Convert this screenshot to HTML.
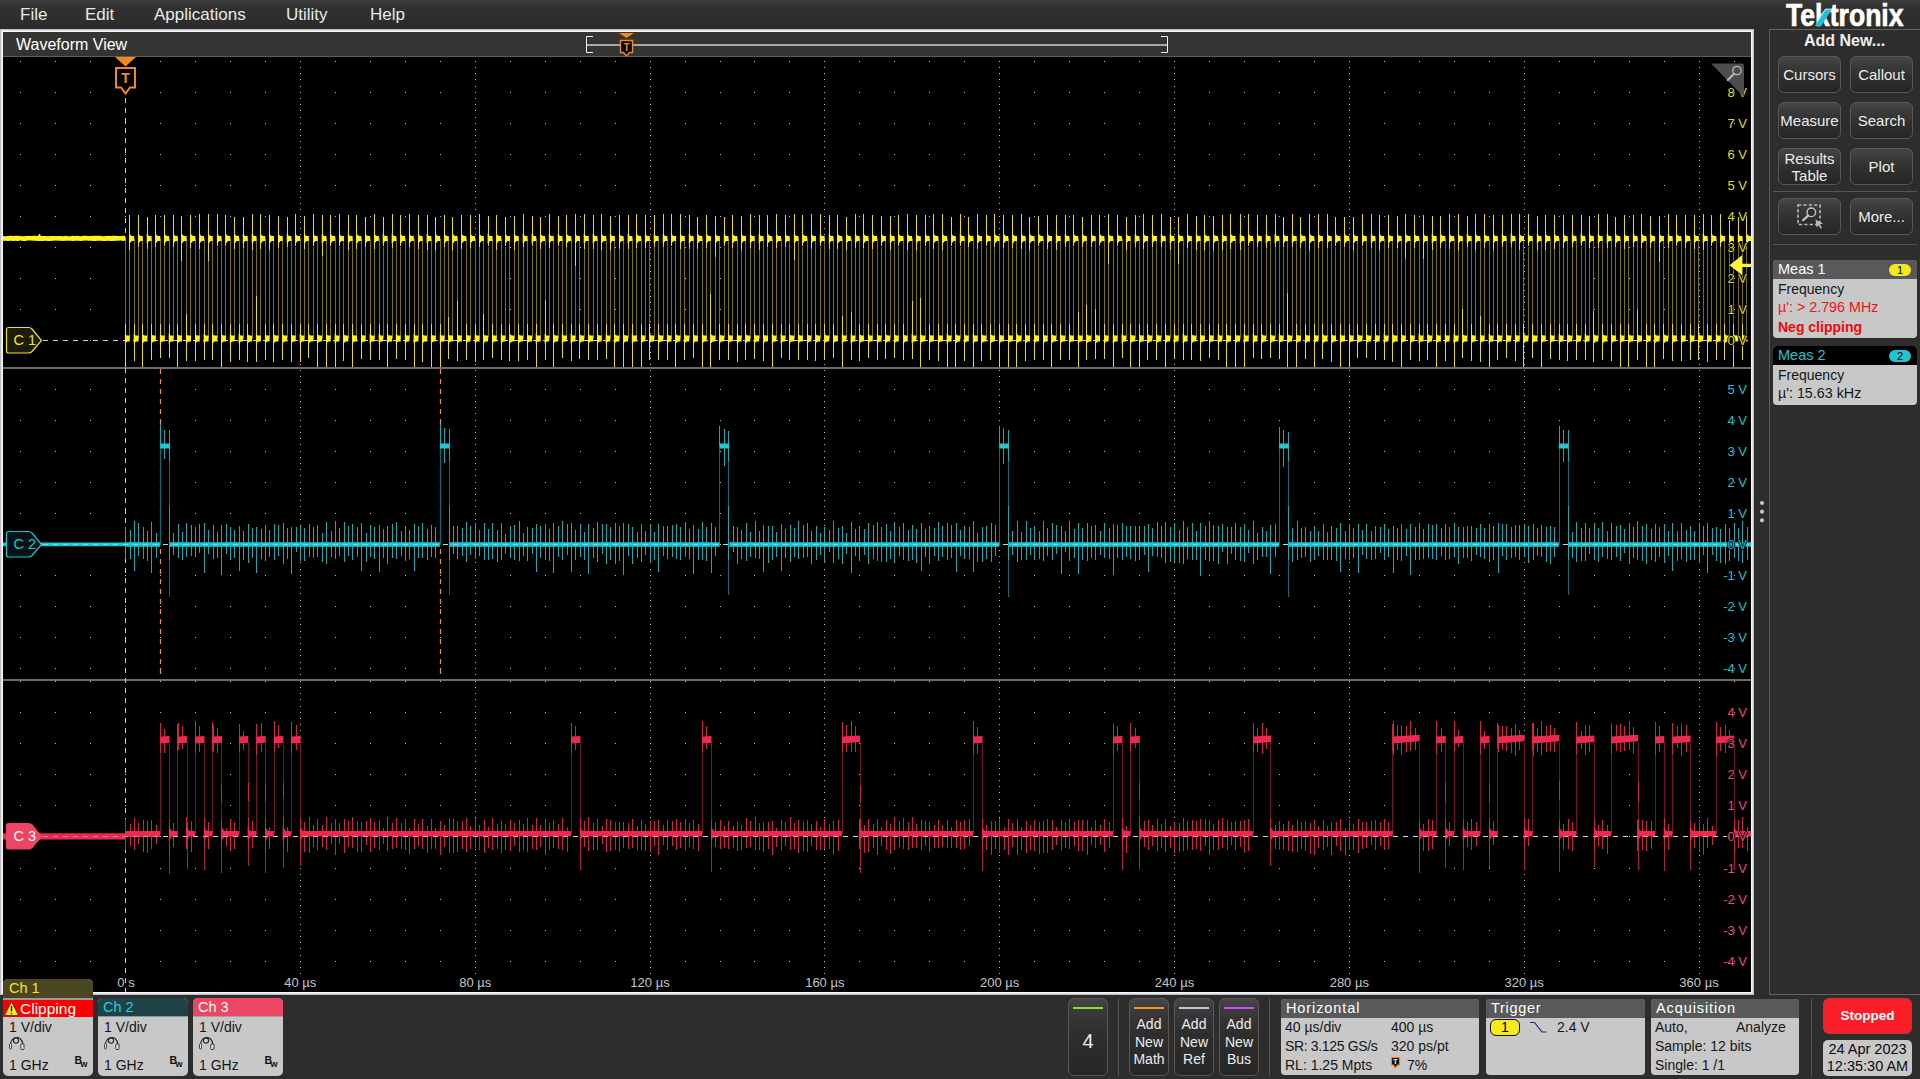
<!DOCTYPE html>
<html lang="en">
<head>
<meta charset="utf-8">
<title>Tektronix Waveform View</title>
<style>
*{box-sizing:border-box;margin:0;padding:0}
html,body{width:1920px;height:1079px;overflow:hidden;background:#2d2d2d}
body{position:relative;font-family:"Liberation Sans","DejaVu Sans",sans-serif;color:#e8e8e8;font-size:15px;line-height:1}
.abs{position:absolute}
.t{position:absolute;white-space:nowrap;line-height:1}
#menubar{position:absolute;left:0;top:0;width:1920px;height:29px;background:linear-gradient(#3b3b3b 0,#303030 8px,#2c2c2c 100%)}
#menubar .t{top:6px;font-size:17px;color:#e9e9e9}
#frame{position:absolute;left:0;top:29px;width:1754px;height:966px;background:#f7f7f9;box-shadow:inset 0 0 0 1px #bebec4,inset 0 0 0 2px #e4e4e9}
#titlebar{position:absolute;left:3px;top:32px;width:1748px;height:24px;background:#343433}
#titleline{position:absolute;left:3px;top:56px;width:1748px;height:1px;background:#5e5e5e}
#plot{position:absolute;left:3px;top:57px;width:1748px;height:935px;background:#000}
#wave{position:absolute;left:0;top:0;width:1920px;height:1079px}
.vl{position:absolute;z-index:2;text-shadow:-1px 0 #000,1px 0 #000,0 -1px #000,0 1px #000;font-size:13px;line-height:13px;width:40px;text-align:right;left:1707px;white-space:nowrap}
.y{color:#e2dc1c}.c{color:#1ec0ca}.r{color:#ee4a68}
.tl{position:absolute;top:976px;font-size:13px;line-height:13px;color:#c6c6c6;white-space:nowrap;transform:translateX(-50%)}
/* side panel */
#side{position:absolute;left:1769px;top:29px;width:151px;height:966px;border:1px solid #675f59;border-left-color:#585a5c;border-right:none}
.btn{position:absolute;width:63px;height:37px;border:1px solid #5e5550;border-radius:6px;background:linear-gradient(#464646 0,#3a3a3a 25%,#2e2e2e 60%,#272727 100%);color:#ececec;font-size:15px;text-align:center;line-height:35px;white-space:nowrap}
.btn.two{line-height:17px;padding-top:1px}
.sep{position:absolute;height:1px;background:#5b5451;left:1773px;width:144px}
.badge{position:absolute;border-radius:4px;background:#c8c8c8;color:#000;overflow:hidden}
.badge .hd{position:absolute;left:0;top:0;right:0;background:#58595b;color:#fff;font-size:15px}
.badge .t{font-size:15px;color:#161616}
.pill{position:absolute;border-radius:6px;font-size:11px;color:#000;text-align:center}
/* bottom */
.bbtn{position:absolute;top:998px;height:78px;border:1px solid #5e5550;border-radius:6px;background:linear-gradient(#464646 0,#3a3a3a 14%,#2e2e2e 45%,#272727 100%);color:#ececec;text-align:center}
.bbtn i{position:absolute;left:4px;right:4px;top:8px;height:2px;display:block}
.vsep{position:absolute;top:998px;width:1px;height:78px;background:#5b5451}
</style>
</head>
<body>
<div id="menubar">
<span class="t" style="left:20px">File</span>
<span class="t" style="left:85px">Edit</span>
<span class="t" style="left:154px">Applications</span>
<span class="t" style="left:286px">Utility</span>
<span class="t" style="left:370px">Help</span>
</div>
<div id="frame"></div>
<div id="titlebar"><span class="t" style="left:13px;top:5px;font-size:16px;color:#fff">Waveform View</span></div>
<div id="titleline"></div>
<div id="plot"></div>
<span class="vl y" style="top:86px">8 V</span>
<span class="vl y" style="top:117px">7 V</span>
<span class="vl y" style="top:148px">6 V</span>
<span class="vl y" style="top:179px">5 V</span>
<span class="vl y" style="top:210px">4 V</span>
<span class="vl y" style="top:241px">3 V</span>
<span class="vl y" style="top:272px">2 V</span>
<span class="vl y" style="top:303px">1 V</span>
<span class="vl y" style="top:334px">0 V</span>
<span class="vl c" style="top:383px">5 V</span>
<span class="vl c" style="top:414px">4 V</span>
<span class="vl c" style="top:445px">3 V</span>
<span class="vl c" style="top:476px">2 V</span>
<span class="vl c" style="top:507px">1 V</span>
<span class="vl c" style="top:538px">0 V</span>
<span class="vl c" style="top:569px">-1 V</span>
<span class="vl c" style="top:600px">-2 V</span>
<span class="vl c" style="top:631px">-3 V</span>
<span class="vl c" style="top:662px">-4 V</span>
<span class="vl r" style="top:706px">4 V</span>
<span class="vl r" style="top:737px">3 V</span>
<span class="vl r" style="top:768px">2 V</span>
<span class="vl r" style="top:799px">1 V</span>
<span class="vl r" style="top:830px">0 V</span>
<span class="vl r" style="top:862px">-1 V</span>
<span class="vl r" style="top:893px">-2 V</span>
<span class="vl r" style="top:924px">-3 V</span>
<span class="vl r" style="top:955px">-4 V</span>
<span class="tl" style="left:126.0px">0 s</span>
<span class="tl" style="left:300.3px">40 µs</span>
<span class="tl" style="left:475.2px">80 µs</span>
<span class="tl" style="left:650.0px">120 µs</span>
<span class="tl" style="left:824.8px">160 µs</span>
<span class="tl" style="left:999.7px">200 µs</span>
<span class="tl" style="left:1174.5px">240 µs</span>
<span class="tl" style="left:1349.3px">280 µs</span>
<span class="tl" style="left:1524.1px">320 µs</span>
<span class="tl" style="left:1699.0px">360 µs</span>
<svg id="wave" viewBox="0 0 1920 1079" width="1920" height="1079">
<defs>
<clipPath id="c1"><rect x="3" y="57" width="1748" height="310"/></clipPath>
<clipPath id="c2"><rect x="3" y="369" width="1748" height="310"/></clipPath>
<clipPath id="c3"><rect x="3" y="681" width="1748" height="311"/></clipPath>
</defs>
<path d="M20 61h1v1h-1zM55 61h1v1h-1zM90 61h1v1h-1zM125 61h1v1h-1zM160 61h1v1h-1zM195 61h1v1h-1zM230 61h1v1h-1zM265 61h1v1h-1zM300 61h1v1h-1zM335 61h1v1h-1zM370 61h1v1h-1zM405 61h1v1h-1zM440 61h1v1h-1zM475 61h1v1h-1zM510 61h1v1h-1zM545 61h1v1h-1zM580 61h1v1h-1zM615 61h1v1h-1zM650 61h1v1h-1zM685 61h1v1h-1zM720 61h1v1h-1zM754 61h1v1h-1zM789 61h1v1h-1zM824 61h1v1h-1zM859 61h1v1h-1zM894 61h1v1h-1zM929 61h1v1h-1zM964 61h1v1h-1zM999 61h1v1h-1zM1034 61h1v1h-1zM1069 61h1v1h-1zM1104 61h1v1h-1zM1139 61h1v1h-1zM1174 61h1v1h-1zM1209 61h1v1h-1zM1244 61h1v1h-1zM1279 61h1v1h-1zM1314 61h1v1h-1zM1349 61h1v1h-1zM1384 61h1v1h-1zM1419 61h1v1h-1zM1454 61h1v1h-1zM1489 61h1v1h-1zM1524 61h1v1h-1zM1559 61h1v1h-1zM1594 61h1v1h-1zM1629 61h1v1h-1zM1664 61h1v1h-1zM1699 61h1v1h-1zM1734 61h1v1h-1zM20 92h1v1h-1zM55 92h1v1h-1zM90 92h1v1h-1zM125 92h1v1h-1zM160 92h1v1h-1zM195 92h1v1h-1zM230 92h1v1h-1zM265 92h1v1h-1zM300 92h1v1h-1zM335 92h1v1h-1zM370 92h1v1h-1zM405 92h1v1h-1zM440 92h1v1h-1zM475 92h1v1h-1zM510 92h1v1h-1zM545 92h1v1h-1zM580 92h1v1h-1zM615 92h1v1h-1zM650 92h1v1h-1zM685 92h1v1h-1zM720 92h1v1h-1zM754 92h1v1h-1zM789 92h1v1h-1zM824 92h1v1h-1zM859 92h1v1h-1zM894 92h1v1h-1zM929 92h1v1h-1zM964 92h1v1h-1zM999 92h1v1h-1zM1034 92h1v1h-1zM1069 92h1v1h-1zM1104 92h1v1h-1zM1139 92h1v1h-1zM1174 92h1v1h-1zM1209 92h1v1h-1zM1244 92h1v1h-1zM1279 92h1v1h-1zM1314 92h1v1h-1zM1349 92h1v1h-1zM1384 92h1v1h-1zM1419 92h1v1h-1zM1454 92h1v1h-1zM1489 92h1v1h-1zM1524 92h1v1h-1zM1559 92h1v1h-1zM1594 92h1v1h-1zM1629 92h1v1h-1zM1664 92h1v1h-1zM1699 92h1v1h-1zM1734 92h1v1h-1zM20 123h1v1h-1zM55 123h1v1h-1zM90 123h1v1h-1zM125 123h1v1h-1zM160 123h1v1h-1zM195 123h1v1h-1zM230 123h1v1h-1zM265 123h1v1h-1zM300 123h1v1h-1zM335 123h1v1h-1zM370 123h1v1h-1zM405 123h1v1h-1zM440 123h1v1h-1zM475 123h1v1h-1zM510 123h1v1h-1zM545 123h1v1h-1zM580 123h1v1h-1zM615 123h1v1h-1zM650 123h1v1h-1zM685 123h1v1h-1zM720 123h1v1h-1zM754 123h1v1h-1zM789 123h1v1h-1zM824 123h1v1h-1zM859 123h1v1h-1zM894 123h1v1h-1zM929 123h1v1h-1zM964 123h1v1h-1zM999 123h1v1h-1zM1034 123h1v1h-1zM1069 123h1v1h-1zM1104 123h1v1h-1zM1139 123h1v1h-1zM1174 123h1v1h-1zM1209 123h1v1h-1zM1244 123h1v1h-1zM1279 123h1v1h-1zM1314 123h1v1h-1zM1349 123h1v1h-1zM1384 123h1v1h-1zM1419 123h1v1h-1zM1454 123h1v1h-1zM1489 123h1v1h-1zM1524 123h1v1h-1zM1559 123h1v1h-1zM1594 123h1v1h-1zM1629 123h1v1h-1zM1664 123h1v1h-1zM1699 123h1v1h-1zM1734 123h1v1h-1zM20 154h1v1h-1zM55 154h1v1h-1zM90 154h1v1h-1zM125 154h1v1h-1zM160 154h1v1h-1zM195 154h1v1h-1zM230 154h1v1h-1zM265 154h1v1h-1zM300 154h1v1h-1zM335 154h1v1h-1zM370 154h1v1h-1zM405 154h1v1h-1zM440 154h1v1h-1zM475 154h1v1h-1zM510 154h1v1h-1zM545 154h1v1h-1zM580 154h1v1h-1zM615 154h1v1h-1zM650 154h1v1h-1zM685 154h1v1h-1zM720 154h1v1h-1zM754 154h1v1h-1zM789 154h1v1h-1zM824 154h1v1h-1zM859 154h1v1h-1zM894 154h1v1h-1zM929 154h1v1h-1zM964 154h1v1h-1zM999 154h1v1h-1zM1034 154h1v1h-1zM1069 154h1v1h-1zM1104 154h1v1h-1zM1139 154h1v1h-1zM1174 154h1v1h-1zM1209 154h1v1h-1zM1244 154h1v1h-1zM1279 154h1v1h-1zM1314 154h1v1h-1zM1349 154h1v1h-1zM1384 154h1v1h-1zM1419 154h1v1h-1zM1454 154h1v1h-1zM1489 154h1v1h-1zM1524 154h1v1h-1zM1559 154h1v1h-1zM1594 154h1v1h-1zM1629 154h1v1h-1zM1664 154h1v1h-1zM1699 154h1v1h-1zM1734 154h1v1h-1zM20 185h1v1h-1zM55 185h1v1h-1zM90 185h1v1h-1zM125 185h1v1h-1zM160 185h1v1h-1zM195 185h1v1h-1zM230 185h1v1h-1zM265 185h1v1h-1zM300 185h1v1h-1zM335 185h1v1h-1zM370 185h1v1h-1zM405 185h1v1h-1zM440 185h1v1h-1zM475 185h1v1h-1zM510 185h1v1h-1zM545 185h1v1h-1zM580 185h1v1h-1zM615 185h1v1h-1zM650 185h1v1h-1zM685 185h1v1h-1zM720 185h1v1h-1zM754 185h1v1h-1zM789 185h1v1h-1zM824 185h1v1h-1zM859 185h1v1h-1zM894 185h1v1h-1zM929 185h1v1h-1zM964 185h1v1h-1zM999 185h1v1h-1zM1034 185h1v1h-1zM1069 185h1v1h-1zM1104 185h1v1h-1zM1139 185h1v1h-1zM1174 185h1v1h-1zM1209 185h1v1h-1zM1244 185h1v1h-1zM1279 185h1v1h-1zM1314 185h1v1h-1zM1349 185h1v1h-1zM1384 185h1v1h-1zM1419 185h1v1h-1zM1454 185h1v1h-1zM1489 185h1v1h-1zM1524 185h1v1h-1zM1559 185h1v1h-1zM1594 185h1v1h-1zM1629 185h1v1h-1zM1664 185h1v1h-1zM1699 185h1v1h-1zM1734 185h1v1h-1zM20 216h1v1h-1zM55 216h1v1h-1zM90 216h1v1h-1zM125 216h1v1h-1zM160 216h1v1h-1zM195 216h1v1h-1zM230 216h1v1h-1zM265 216h1v1h-1zM300 216h1v1h-1zM335 216h1v1h-1zM370 216h1v1h-1zM405 216h1v1h-1zM440 216h1v1h-1zM475 216h1v1h-1zM510 216h1v1h-1zM545 216h1v1h-1zM580 216h1v1h-1zM615 216h1v1h-1zM650 216h1v1h-1zM685 216h1v1h-1zM720 216h1v1h-1zM754 216h1v1h-1zM789 216h1v1h-1zM824 216h1v1h-1zM859 216h1v1h-1zM894 216h1v1h-1zM929 216h1v1h-1zM964 216h1v1h-1zM999 216h1v1h-1zM1034 216h1v1h-1zM1069 216h1v1h-1zM1104 216h1v1h-1zM1139 216h1v1h-1zM1174 216h1v1h-1zM1209 216h1v1h-1zM1244 216h1v1h-1zM1279 216h1v1h-1zM1314 216h1v1h-1zM1349 216h1v1h-1zM1384 216h1v1h-1zM1419 216h1v1h-1zM1454 216h1v1h-1zM1489 216h1v1h-1zM1524 216h1v1h-1zM1559 216h1v1h-1zM1594 216h1v1h-1zM1629 216h1v1h-1zM1664 216h1v1h-1zM1699 216h1v1h-1zM1734 216h1v1h-1zM20 247h1v1h-1zM55 247h1v1h-1zM90 247h1v1h-1zM125 247h1v1h-1zM160 247h1v1h-1zM195 247h1v1h-1zM230 247h1v1h-1zM265 247h1v1h-1zM300 247h1v1h-1zM335 247h1v1h-1zM370 247h1v1h-1zM405 247h1v1h-1zM440 247h1v1h-1zM475 247h1v1h-1zM510 247h1v1h-1zM545 247h1v1h-1zM580 247h1v1h-1zM615 247h1v1h-1zM650 247h1v1h-1zM685 247h1v1h-1zM720 247h1v1h-1zM754 247h1v1h-1zM789 247h1v1h-1zM824 247h1v1h-1zM859 247h1v1h-1zM894 247h1v1h-1zM929 247h1v1h-1zM964 247h1v1h-1zM999 247h1v1h-1zM1034 247h1v1h-1zM1069 247h1v1h-1zM1104 247h1v1h-1zM1139 247h1v1h-1zM1174 247h1v1h-1zM1209 247h1v1h-1zM1244 247h1v1h-1zM1279 247h1v1h-1zM1314 247h1v1h-1zM1349 247h1v1h-1zM1384 247h1v1h-1zM1419 247h1v1h-1zM1454 247h1v1h-1zM1489 247h1v1h-1zM1524 247h1v1h-1zM1559 247h1v1h-1zM1594 247h1v1h-1zM1629 247h1v1h-1zM1664 247h1v1h-1zM1699 247h1v1h-1zM1734 247h1v1h-1zM20 278h1v1h-1zM55 278h1v1h-1zM90 278h1v1h-1zM125 278h1v1h-1zM160 278h1v1h-1zM195 278h1v1h-1zM230 278h1v1h-1zM265 278h1v1h-1zM300 278h1v1h-1zM335 278h1v1h-1zM370 278h1v1h-1zM405 278h1v1h-1zM440 278h1v1h-1zM475 278h1v1h-1zM510 278h1v1h-1zM545 278h1v1h-1zM580 278h1v1h-1zM615 278h1v1h-1zM650 278h1v1h-1zM685 278h1v1h-1zM720 278h1v1h-1zM754 278h1v1h-1zM789 278h1v1h-1zM824 278h1v1h-1zM859 278h1v1h-1zM894 278h1v1h-1zM929 278h1v1h-1zM964 278h1v1h-1zM999 278h1v1h-1zM1034 278h1v1h-1zM1069 278h1v1h-1zM1104 278h1v1h-1zM1139 278h1v1h-1zM1174 278h1v1h-1zM1209 278h1v1h-1zM1244 278h1v1h-1zM1279 278h1v1h-1zM1314 278h1v1h-1zM1349 278h1v1h-1zM1384 278h1v1h-1zM1419 278h1v1h-1zM1454 278h1v1h-1zM1489 278h1v1h-1zM1524 278h1v1h-1zM1559 278h1v1h-1zM1594 278h1v1h-1zM1629 278h1v1h-1zM1664 278h1v1h-1zM1699 278h1v1h-1zM1734 278h1v1h-1zM20 309h1v1h-1zM55 309h1v1h-1zM90 309h1v1h-1zM125 309h1v1h-1zM160 309h1v1h-1zM195 309h1v1h-1zM230 309h1v1h-1zM265 309h1v1h-1zM300 309h1v1h-1zM335 309h1v1h-1zM370 309h1v1h-1zM405 309h1v1h-1zM440 309h1v1h-1zM475 309h1v1h-1zM510 309h1v1h-1zM545 309h1v1h-1zM580 309h1v1h-1zM615 309h1v1h-1zM650 309h1v1h-1zM685 309h1v1h-1zM720 309h1v1h-1zM754 309h1v1h-1zM789 309h1v1h-1zM824 309h1v1h-1zM859 309h1v1h-1zM894 309h1v1h-1zM929 309h1v1h-1zM964 309h1v1h-1zM999 309h1v1h-1zM1034 309h1v1h-1zM1069 309h1v1h-1zM1104 309h1v1h-1zM1139 309h1v1h-1zM1174 309h1v1h-1zM1209 309h1v1h-1zM1244 309h1v1h-1zM1279 309h1v1h-1zM1314 309h1v1h-1zM1349 309h1v1h-1zM1384 309h1v1h-1zM1419 309h1v1h-1zM1454 309h1v1h-1zM1489 309h1v1h-1zM1524 309h1v1h-1zM1559 309h1v1h-1zM1594 309h1v1h-1zM1629 309h1v1h-1zM1664 309h1v1h-1zM1699 309h1v1h-1zM1734 309h1v1h-1zM20 340h1v1h-1zM55 340h1v1h-1zM90 340h1v1h-1zM125 340h1v1h-1zM160 340h1v1h-1zM195 340h1v1h-1zM230 340h1v1h-1zM265 340h1v1h-1zM300 340h1v1h-1zM335 340h1v1h-1zM370 340h1v1h-1zM405 340h1v1h-1zM440 340h1v1h-1zM475 340h1v1h-1zM510 340h1v1h-1zM545 340h1v1h-1zM580 340h1v1h-1zM615 340h1v1h-1zM650 340h1v1h-1zM685 340h1v1h-1zM720 340h1v1h-1zM754 340h1v1h-1zM789 340h1v1h-1zM824 340h1v1h-1zM859 340h1v1h-1zM894 340h1v1h-1zM929 340h1v1h-1zM964 340h1v1h-1zM999 340h1v1h-1zM1034 340h1v1h-1zM1069 340h1v1h-1zM1104 340h1v1h-1zM1139 340h1v1h-1zM1174 340h1v1h-1zM1209 340h1v1h-1zM1244 340h1v1h-1zM1279 340h1v1h-1zM1314 340h1v1h-1zM1349 340h1v1h-1zM1384 340h1v1h-1zM1419 340h1v1h-1zM1454 340h1v1h-1zM1489 340h1v1h-1zM1524 340h1v1h-1zM1559 340h1v1h-1zM1594 340h1v1h-1zM1629 340h1v1h-1zM1664 340h1v1h-1zM1699 340h1v1h-1zM1734 340h1v1h-1zM300 61h1v1h-1zM300 67h1v1h-1zM300 73h1v1h-1zM300 79h1v1h-1zM300 86h1v1h-1zM300 92h1v1h-1zM300 98h1v1h-1zM300 104h1v1h-1zM300 110h1v1h-1zM300 117h1v1h-1zM300 123h1v1h-1zM300 129h1v1h-1zM300 135h1v1h-1zM300 141h1v1h-1zM300 147h1v1h-1zM300 154h1v1h-1zM300 160h1v1h-1zM300 166h1v1h-1zM300 172h1v1h-1zM300 178h1v1h-1zM300 185h1v1h-1zM300 191h1v1h-1zM300 197h1v1h-1zM300 203h1v1h-1zM300 209h1v1h-1zM300 216h1v1h-1zM300 222h1v1h-1zM300 228h1v1h-1zM300 234h1v1h-1zM300 240h1v1h-1zM300 247h1v1h-1zM300 253h1v1h-1zM300 259h1v1h-1zM300 265h1v1h-1zM300 271h1v1h-1zM300 278h1v1h-1zM300 284h1v1h-1zM300 290h1v1h-1zM300 296h1v1h-1zM300 302h1v1h-1zM300 309h1v1h-1zM300 315h1v1h-1zM300 321h1v1h-1zM300 327h1v1h-1zM300 333h1v1h-1zM300 340h1v1h-1zM300 346h1v1h-1zM300 352h1v1h-1zM300 358h1v1h-1zM300 364h1v1h-1zM475 61h1v1h-1zM475 67h1v1h-1zM475 73h1v1h-1zM475 79h1v1h-1zM475 86h1v1h-1zM475 92h1v1h-1zM475 98h1v1h-1zM475 104h1v1h-1zM475 110h1v1h-1zM475 117h1v1h-1zM475 123h1v1h-1zM475 129h1v1h-1zM475 135h1v1h-1zM475 141h1v1h-1zM475 147h1v1h-1zM475 154h1v1h-1zM475 160h1v1h-1zM475 166h1v1h-1zM475 172h1v1h-1zM475 178h1v1h-1zM475 185h1v1h-1zM475 191h1v1h-1zM475 197h1v1h-1zM475 203h1v1h-1zM475 209h1v1h-1zM475 216h1v1h-1zM475 222h1v1h-1zM475 228h1v1h-1zM475 234h1v1h-1zM475 240h1v1h-1zM475 247h1v1h-1zM475 253h1v1h-1zM475 259h1v1h-1zM475 265h1v1h-1zM475 271h1v1h-1zM475 278h1v1h-1zM475 284h1v1h-1zM475 290h1v1h-1zM475 296h1v1h-1zM475 302h1v1h-1zM475 309h1v1h-1zM475 315h1v1h-1zM475 321h1v1h-1zM475 327h1v1h-1zM475 333h1v1h-1zM475 340h1v1h-1zM475 346h1v1h-1zM475 352h1v1h-1zM475 358h1v1h-1zM475 364h1v1h-1zM650 61h1v1h-1zM650 67h1v1h-1zM650 73h1v1h-1zM650 79h1v1h-1zM650 86h1v1h-1zM650 92h1v1h-1zM650 98h1v1h-1zM650 104h1v1h-1zM650 110h1v1h-1zM650 117h1v1h-1zM650 123h1v1h-1zM650 129h1v1h-1zM650 135h1v1h-1zM650 141h1v1h-1zM650 147h1v1h-1zM650 154h1v1h-1zM650 160h1v1h-1zM650 166h1v1h-1zM650 172h1v1h-1zM650 178h1v1h-1zM650 185h1v1h-1zM650 191h1v1h-1zM650 197h1v1h-1zM650 203h1v1h-1zM650 209h1v1h-1zM650 216h1v1h-1zM650 222h1v1h-1zM650 228h1v1h-1zM650 234h1v1h-1zM650 240h1v1h-1zM650 247h1v1h-1zM650 253h1v1h-1zM650 259h1v1h-1zM650 265h1v1h-1zM650 271h1v1h-1zM650 278h1v1h-1zM650 284h1v1h-1zM650 290h1v1h-1zM650 296h1v1h-1zM650 302h1v1h-1zM650 309h1v1h-1zM650 315h1v1h-1zM650 321h1v1h-1zM650 327h1v1h-1zM650 333h1v1h-1zM650 340h1v1h-1zM650 346h1v1h-1zM650 352h1v1h-1zM650 358h1v1h-1zM650 364h1v1h-1zM824 61h1v1h-1zM824 67h1v1h-1zM824 73h1v1h-1zM824 79h1v1h-1zM824 86h1v1h-1zM824 92h1v1h-1zM824 98h1v1h-1zM824 104h1v1h-1zM824 110h1v1h-1zM824 117h1v1h-1zM824 123h1v1h-1zM824 129h1v1h-1zM824 135h1v1h-1zM824 141h1v1h-1zM824 147h1v1h-1zM824 154h1v1h-1zM824 160h1v1h-1zM824 166h1v1h-1zM824 172h1v1h-1zM824 178h1v1h-1zM824 185h1v1h-1zM824 191h1v1h-1zM824 197h1v1h-1zM824 203h1v1h-1zM824 209h1v1h-1zM824 216h1v1h-1zM824 222h1v1h-1zM824 228h1v1h-1zM824 234h1v1h-1zM824 240h1v1h-1zM824 247h1v1h-1zM824 253h1v1h-1zM824 259h1v1h-1zM824 265h1v1h-1zM824 271h1v1h-1zM824 278h1v1h-1zM824 284h1v1h-1zM824 290h1v1h-1zM824 296h1v1h-1zM824 302h1v1h-1zM824 309h1v1h-1zM824 315h1v1h-1zM824 321h1v1h-1zM824 327h1v1h-1zM824 333h1v1h-1zM824 340h1v1h-1zM824 346h1v1h-1zM824 352h1v1h-1zM824 358h1v1h-1zM824 364h1v1h-1zM999 61h1v1h-1zM999 67h1v1h-1zM999 73h1v1h-1zM999 79h1v1h-1zM999 86h1v1h-1zM999 92h1v1h-1zM999 98h1v1h-1zM999 104h1v1h-1zM999 110h1v1h-1zM999 117h1v1h-1zM999 123h1v1h-1zM999 129h1v1h-1zM999 135h1v1h-1zM999 141h1v1h-1zM999 147h1v1h-1zM999 154h1v1h-1zM999 160h1v1h-1zM999 166h1v1h-1zM999 172h1v1h-1zM999 178h1v1h-1zM999 185h1v1h-1zM999 191h1v1h-1zM999 197h1v1h-1zM999 203h1v1h-1zM999 209h1v1h-1zM999 216h1v1h-1zM999 222h1v1h-1zM999 228h1v1h-1zM999 234h1v1h-1zM999 240h1v1h-1zM999 247h1v1h-1zM999 253h1v1h-1zM999 259h1v1h-1zM999 265h1v1h-1zM999 271h1v1h-1zM999 278h1v1h-1zM999 284h1v1h-1zM999 290h1v1h-1zM999 296h1v1h-1zM999 302h1v1h-1zM999 309h1v1h-1zM999 315h1v1h-1zM999 321h1v1h-1zM999 327h1v1h-1zM999 333h1v1h-1zM999 340h1v1h-1zM999 346h1v1h-1zM999 352h1v1h-1zM999 358h1v1h-1zM999 364h1v1h-1zM1174 61h1v1h-1zM1174 67h1v1h-1zM1174 73h1v1h-1zM1174 79h1v1h-1zM1174 86h1v1h-1zM1174 92h1v1h-1zM1174 98h1v1h-1zM1174 104h1v1h-1zM1174 110h1v1h-1zM1174 117h1v1h-1zM1174 123h1v1h-1zM1174 129h1v1h-1zM1174 135h1v1h-1zM1174 141h1v1h-1zM1174 147h1v1h-1zM1174 154h1v1h-1zM1174 160h1v1h-1zM1174 166h1v1h-1zM1174 172h1v1h-1zM1174 178h1v1h-1zM1174 185h1v1h-1zM1174 191h1v1h-1zM1174 197h1v1h-1zM1174 203h1v1h-1zM1174 209h1v1h-1zM1174 216h1v1h-1zM1174 222h1v1h-1zM1174 228h1v1h-1zM1174 234h1v1h-1zM1174 240h1v1h-1zM1174 247h1v1h-1zM1174 253h1v1h-1zM1174 259h1v1h-1zM1174 265h1v1h-1zM1174 271h1v1h-1zM1174 278h1v1h-1zM1174 284h1v1h-1zM1174 290h1v1h-1zM1174 296h1v1h-1zM1174 302h1v1h-1zM1174 309h1v1h-1zM1174 315h1v1h-1zM1174 321h1v1h-1zM1174 327h1v1h-1zM1174 333h1v1h-1zM1174 340h1v1h-1zM1174 346h1v1h-1zM1174 352h1v1h-1zM1174 358h1v1h-1zM1174 364h1v1h-1zM1349 61h1v1h-1zM1349 67h1v1h-1zM1349 73h1v1h-1zM1349 79h1v1h-1zM1349 86h1v1h-1zM1349 92h1v1h-1zM1349 98h1v1h-1zM1349 104h1v1h-1zM1349 110h1v1h-1zM1349 117h1v1h-1zM1349 123h1v1h-1zM1349 129h1v1h-1zM1349 135h1v1h-1zM1349 141h1v1h-1zM1349 147h1v1h-1zM1349 154h1v1h-1zM1349 160h1v1h-1zM1349 166h1v1h-1zM1349 172h1v1h-1zM1349 178h1v1h-1zM1349 185h1v1h-1zM1349 191h1v1h-1zM1349 197h1v1h-1zM1349 203h1v1h-1zM1349 209h1v1h-1zM1349 216h1v1h-1zM1349 222h1v1h-1zM1349 228h1v1h-1zM1349 234h1v1h-1zM1349 240h1v1h-1zM1349 247h1v1h-1zM1349 253h1v1h-1zM1349 259h1v1h-1zM1349 265h1v1h-1zM1349 271h1v1h-1zM1349 278h1v1h-1zM1349 284h1v1h-1zM1349 290h1v1h-1zM1349 296h1v1h-1zM1349 302h1v1h-1zM1349 309h1v1h-1zM1349 315h1v1h-1zM1349 321h1v1h-1zM1349 327h1v1h-1zM1349 333h1v1h-1zM1349 340h1v1h-1zM1349 346h1v1h-1zM1349 352h1v1h-1zM1349 358h1v1h-1zM1349 364h1v1h-1zM1524 61h1v1h-1zM1524 67h1v1h-1zM1524 73h1v1h-1zM1524 79h1v1h-1zM1524 86h1v1h-1zM1524 92h1v1h-1zM1524 98h1v1h-1zM1524 104h1v1h-1zM1524 110h1v1h-1zM1524 117h1v1h-1zM1524 123h1v1h-1zM1524 129h1v1h-1zM1524 135h1v1h-1zM1524 141h1v1h-1zM1524 147h1v1h-1zM1524 154h1v1h-1zM1524 160h1v1h-1zM1524 166h1v1h-1zM1524 172h1v1h-1zM1524 178h1v1h-1zM1524 185h1v1h-1zM1524 191h1v1h-1zM1524 197h1v1h-1zM1524 203h1v1h-1zM1524 209h1v1h-1zM1524 216h1v1h-1zM1524 222h1v1h-1zM1524 228h1v1h-1zM1524 234h1v1h-1zM1524 240h1v1h-1zM1524 247h1v1h-1zM1524 253h1v1h-1zM1524 259h1v1h-1zM1524 265h1v1h-1zM1524 271h1v1h-1zM1524 278h1v1h-1zM1524 284h1v1h-1zM1524 290h1v1h-1zM1524 296h1v1h-1zM1524 302h1v1h-1zM1524 309h1v1h-1zM1524 315h1v1h-1zM1524 321h1v1h-1zM1524 327h1v1h-1zM1524 333h1v1h-1zM1524 340h1v1h-1zM1524 346h1v1h-1zM1524 352h1v1h-1zM1524 358h1v1h-1zM1524 364h1v1h-1zM1699 61h1v1h-1zM1699 67h1v1h-1zM1699 73h1v1h-1zM1699 79h1v1h-1zM1699 86h1v1h-1zM1699 92h1v1h-1zM1699 98h1v1h-1zM1699 104h1v1h-1zM1699 110h1v1h-1zM1699 117h1v1h-1zM1699 123h1v1h-1zM1699 129h1v1h-1zM1699 135h1v1h-1zM1699 141h1v1h-1zM1699 147h1v1h-1zM1699 154h1v1h-1zM1699 160h1v1h-1zM1699 166h1v1h-1zM1699 172h1v1h-1zM1699 178h1v1h-1zM1699 185h1v1h-1zM1699 191h1v1h-1zM1699 197h1v1h-1zM1699 203h1v1h-1zM1699 209h1v1h-1zM1699 216h1v1h-1zM1699 222h1v1h-1zM1699 228h1v1h-1zM1699 234h1v1h-1zM1699 240h1v1h-1zM1699 247h1v1h-1zM1699 253h1v1h-1zM1699 259h1v1h-1zM1699 265h1v1h-1zM1699 271h1v1h-1zM1699 278h1v1h-1zM1699 284h1v1h-1zM1699 290h1v1h-1zM1699 296h1v1h-1zM1699 302h1v1h-1zM1699 309h1v1h-1zM1699 315h1v1h-1zM1699 321h1v1h-1zM1699 327h1v1h-1zM1699 333h1v1h-1zM1699 340h1v1h-1zM1699 346h1v1h-1zM1699 352h1v1h-1zM1699 358h1v1h-1zM1699 364h1v1h-1zM20 389h1v1h-1zM55 389h1v1h-1zM90 389h1v1h-1zM125 389h1v1h-1zM160 389h1v1h-1zM195 389h1v1h-1zM230 389h1v1h-1zM265 389h1v1h-1zM300 389h1v1h-1zM335 389h1v1h-1zM370 389h1v1h-1zM405 389h1v1h-1zM440 389h1v1h-1zM475 389h1v1h-1zM510 389h1v1h-1zM545 389h1v1h-1zM580 389h1v1h-1zM615 389h1v1h-1zM650 389h1v1h-1zM685 389h1v1h-1zM720 389h1v1h-1zM754 389h1v1h-1zM789 389h1v1h-1zM824 389h1v1h-1zM859 389h1v1h-1zM894 389h1v1h-1zM929 389h1v1h-1zM964 389h1v1h-1zM999 389h1v1h-1zM1034 389h1v1h-1zM1069 389h1v1h-1zM1104 389h1v1h-1zM1139 389h1v1h-1zM1174 389h1v1h-1zM1209 389h1v1h-1zM1244 389h1v1h-1zM1279 389h1v1h-1zM1314 389h1v1h-1zM1349 389h1v1h-1zM1384 389h1v1h-1zM1419 389h1v1h-1zM1454 389h1v1h-1zM1489 389h1v1h-1zM1524 389h1v1h-1zM1559 389h1v1h-1zM1594 389h1v1h-1zM1629 389h1v1h-1zM1664 389h1v1h-1zM1699 389h1v1h-1zM1734 389h1v1h-1zM20 420h1v1h-1zM55 420h1v1h-1zM90 420h1v1h-1zM125 420h1v1h-1zM160 420h1v1h-1zM195 420h1v1h-1zM230 420h1v1h-1zM265 420h1v1h-1zM300 420h1v1h-1zM335 420h1v1h-1zM370 420h1v1h-1zM405 420h1v1h-1zM440 420h1v1h-1zM475 420h1v1h-1zM510 420h1v1h-1zM545 420h1v1h-1zM580 420h1v1h-1zM615 420h1v1h-1zM650 420h1v1h-1zM685 420h1v1h-1zM720 420h1v1h-1zM754 420h1v1h-1zM789 420h1v1h-1zM824 420h1v1h-1zM859 420h1v1h-1zM894 420h1v1h-1zM929 420h1v1h-1zM964 420h1v1h-1zM999 420h1v1h-1zM1034 420h1v1h-1zM1069 420h1v1h-1zM1104 420h1v1h-1zM1139 420h1v1h-1zM1174 420h1v1h-1zM1209 420h1v1h-1zM1244 420h1v1h-1zM1279 420h1v1h-1zM1314 420h1v1h-1zM1349 420h1v1h-1zM1384 420h1v1h-1zM1419 420h1v1h-1zM1454 420h1v1h-1zM1489 420h1v1h-1zM1524 420h1v1h-1zM1559 420h1v1h-1zM1594 420h1v1h-1zM1629 420h1v1h-1zM1664 420h1v1h-1zM1699 420h1v1h-1zM1734 420h1v1h-1zM20 451h1v1h-1zM55 451h1v1h-1zM90 451h1v1h-1zM125 451h1v1h-1zM160 451h1v1h-1zM195 451h1v1h-1zM230 451h1v1h-1zM265 451h1v1h-1zM300 451h1v1h-1zM335 451h1v1h-1zM370 451h1v1h-1zM405 451h1v1h-1zM440 451h1v1h-1zM475 451h1v1h-1zM510 451h1v1h-1zM545 451h1v1h-1zM580 451h1v1h-1zM615 451h1v1h-1zM650 451h1v1h-1zM685 451h1v1h-1zM720 451h1v1h-1zM754 451h1v1h-1zM789 451h1v1h-1zM824 451h1v1h-1zM859 451h1v1h-1zM894 451h1v1h-1zM929 451h1v1h-1zM964 451h1v1h-1zM999 451h1v1h-1zM1034 451h1v1h-1zM1069 451h1v1h-1zM1104 451h1v1h-1zM1139 451h1v1h-1zM1174 451h1v1h-1zM1209 451h1v1h-1zM1244 451h1v1h-1zM1279 451h1v1h-1zM1314 451h1v1h-1zM1349 451h1v1h-1zM1384 451h1v1h-1zM1419 451h1v1h-1zM1454 451h1v1h-1zM1489 451h1v1h-1zM1524 451h1v1h-1zM1559 451h1v1h-1zM1594 451h1v1h-1zM1629 451h1v1h-1zM1664 451h1v1h-1zM1699 451h1v1h-1zM1734 451h1v1h-1zM20 482h1v1h-1zM55 482h1v1h-1zM90 482h1v1h-1zM125 482h1v1h-1zM160 482h1v1h-1zM195 482h1v1h-1zM230 482h1v1h-1zM265 482h1v1h-1zM300 482h1v1h-1zM335 482h1v1h-1zM370 482h1v1h-1zM405 482h1v1h-1zM440 482h1v1h-1zM475 482h1v1h-1zM510 482h1v1h-1zM545 482h1v1h-1zM580 482h1v1h-1zM615 482h1v1h-1zM650 482h1v1h-1zM685 482h1v1h-1zM720 482h1v1h-1zM754 482h1v1h-1zM789 482h1v1h-1zM824 482h1v1h-1zM859 482h1v1h-1zM894 482h1v1h-1zM929 482h1v1h-1zM964 482h1v1h-1zM999 482h1v1h-1zM1034 482h1v1h-1zM1069 482h1v1h-1zM1104 482h1v1h-1zM1139 482h1v1h-1zM1174 482h1v1h-1zM1209 482h1v1h-1zM1244 482h1v1h-1zM1279 482h1v1h-1zM1314 482h1v1h-1zM1349 482h1v1h-1zM1384 482h1v1h-1zM1419 482h1v1h-1zM1454 482h1v1h-1zM1489 482h1v1h-1zM1524 482h1v1h-1zM1559 482h1v1h-1zM1594 482h1v1h-1zM1629 482h1v1h-1zM1664 482h1v1h-1zM1699 482h1v1h-1zM1734 482h1v1h-1zM20 513h1v1h-1zM55 513h1v1h-1zM90 513h1v1h-1zM125 513h1v1h-1zM160 513h1v1h-1zM195 513h1v1h-1zM230 513h1v1h-1zM265 513h1v1h-1zM300 513h1v1h-1zM335 513h1v1h-1zM370 513h1v1h-1zM405 513h1v1h-1zM440 513h1v1h-1zM475 513h1v1h-1zM510 513h1v1h-1zM545 513h1v1h-1zM580 513h1v1h-1zM615 513h1v1h-1zM650 513h1v1h-1zM685 513h1v1h-1zM720 513h1v1h-1zM754 513h1v1h-1zM789 513h1v1h-1zM824 513h1v1h-1zM859 513h1v1h-1zM894 513h1v1h-1zM929 513h1v1h-1zM964 513h1v1h-1zM999 513h1v1h-1zM1034 513h1v1h-1zM1069 513h1v1h-1zM1104 513h1v1h-1zM1139 513h1v1h-1zM1174 513h1v1h-1zM1209 513h1v1h-1zM1244 513h1v1h-1zM1279 513h1v1h-1zM1314 513h1v1h-1zM1349 513h1v1h-1zM1384 513h1v1h-1zM1419 513h1v1h-1zM1454 513h1v1h-1zM1489 513h1v1h-1zM1524 513h1v1h-1zM1559 513h1v1h-1zM1594 513h1v1h-1zM1629 513h1v1h-1zM1664 513h1v1h-1zM1699 513h1v1h-1zM1734 513h1v1h-1zM20 544h1v1h-1zM55 544h1v1h-1zM90 544h1v1h-1zM125 544h1v1h-1zM160 544h1v1h-1zM195 544h1v1h-1zM230 544h1v1h-1zM265 544h1v1h-1zM300 544h1v1h-1zM335 544h1v1h-1zM370 544h1v1h-1zM405 544h1v1h-1zM440 544h1v1h-1zM475 544h1v1h-1zM510 544h1v1h-1zM545 544h1v1h-1zM580 544h1v1h-1zM615 544h1v1h-1zM650 544h1v1h-1zM685 544h1v1h-1zM720 544h1v1h-1zM754 544h1v1h-1zM789 544h1v1h-1zM824 544h1v1h-1zM859 544h1v1h-1zM894 544h1v1h-1zM929 544h1v1h-1zM964 544h1v1h-1zM999 544h1v1h-1zM1034 544h1v1h-1zM1069 544h1v1h-1zM1104 544h1v1h-1zM1139 544h1v1h-1zM1174 544h1v1h-1zM1209 544h1v1h-1zM1244 544h1v1h-1zM1279 544h1v1h-1zM1314 544h1v1h-1zM1349 544h1v1h-1zM1384 544h1v1h-1zM1419 544h1v1h-1zM1454 544h1v1h-1zM1489 544h1v1h-1zM1524 544h1v1h-1zM1559 544h1v1h-1zM1594 544h1v1h-1zM1629 544h1v1h-1zM1664 544h1v1h-1zM1699 544h1v1h-1zM1734 544h1v1h-1zM20 575h1v1h-1zM55 575h1v1h-1zM90 575h1v1h-1zM125 575h1v1h-1zM160 575h1v1h-1zM195 575h1v1h-1zM230 575h1v1h-1zM265 575h1v1h-1zM300 575h1v1h-1zM335 575h1v1h-1zM370 575h1v1h-1zM405 575h1v1h-1zM440 575h1v1h-1zM475 575h1v1h-1zM510 575h1v1h-1zM545 575h1v1h-1zM580 575h1v1h-1zM615 575h1v1h-1zM650 575h1v1h-1zM685 575h1v1h-1zM720 575h1v1h-1zM754 575h1v1h-1zM789 575h1v1h-1zM824 575h1v1h-1zM859 575h1v1h-1zM894 575h1v1h-1zM929 575h1v1h-1zM964 575h1v1h-1zM999 575h1v1h-1zM1034 575h1v1h-1zM1069 575h1v1h-1zM1104 575h1v1h-1zM1139 575h1v1h-1zM1174 575h1v1h-1zM1209 575h1v1h-1zM1244 575h1v1h-1zM1279 575h1v1h-1zM1314 575h1v1h-1zM1349 575h1v1h-1zM1384 575h1v1h-1zM1419 575h1v1h-1zM1454 575h1v1h-1zM1489 575h1v1h-1zM1524 575h1v1h-1zM1559 575h1v1h-1zM1594 575h1v1h-1zM1629 575h1v1h-1zM1664 575h1v1h-1zM1699 575h1v1h-1zM1734 575h1v1h-1zM20 606h1v1h-1zM55 606h1v1h-1zM90 606h1v1h-1zM125 606h1v1h-1zM160 606h1v1h-1zM195 606h1v1h-1zM230 606h1v1h-1zM265 606h1v1h-1zM300 606h1v1h-1zM335 606h1v1h-1zM370 606h1v1h-1zM405 606h1v1h-1zM440 606h1v1h-1zM475 606h1v1h-1zM510 606h1v1h-1zM545 606h1v1h-1zM580 606h1v1h-1zM615 606h1v1h-1zM650 606h1v1h-1zM685 606h1v1h-1zM720 606h1v1h-1zM754 606h1v1h-1zM789 606h1v1h-1zM824 606h1v1h-1zM859 606h1v1h-1zM894 606h1v1h-1zM929 606h1v1h-1zM964 606h1v1h-1zM999 606h1v1h-1zM1034 606h1v1h-1zM1069 606h1v1h-1zM1104 606h1v1h-1zM1139 606h1v1h-1zM1174 606h1v1h-1zM1209 606h1v1h-1zM1244 606h1v1h-1zM1279 606h1v1h-1zM1314 606h1v1h-1zM1349 606h1v1h-1zM1384 606h1v1h-1zM1419 606h1v1h-1zM1454 606h1v1h-1zM1489 606h1v1h-1zM1524 606h1v1h-1zM1559 606h1v1h-1zM1594 606h1v1h-1zM1629 606h1v1h-1zM1664 606h1v1h-1zM1699 606h1v1h-1zM1734 606h1v1h-1zM20 637h1v1h-1zM55 637h1v1h-1zM90 637h1v1h-1zM125 637h1v1h-1zM160 637h1v1h-1zM195 637h1v1h-1zM230 637h1v1h-1zM265 637h1v1h-1zM300 637h1v1h-1zM335 637h1v1h-1zM370 637h1v1h-1zM405 637h1v1h-1zM440 637h1v1h-1zM475 637h1v1h-1zM510 637h1v1h-1zM545 637h1v1h-1zM580 637h1v1h-1zM615 637h1v1h-1zM650 637h1v1h-1zM685 637h1v1h-1zM720 637h1v1h-1zM754 637h1v1h-1zM789 637h1v1h-1zM824 637h1v1h-1zM859 637h1v1h-1zM894 637h1v1h-1zM929 637h1v1h-1zM964 637h1v1h-1zM999 637h1v1h-1zM1034 637h1v1h-1zM1069 637h1v1h-1zM1104 637h1v1h-1zM1139 637h1v1h-1zM1174 637h1v1h-1zM1209 637h1v1h-1zM1244 637h1v1h-1zM1279 637h1v1h-1zM1314 637h1v1h-1zM1349 637h1v1h-1zM1384 637h1v1h-1zM1419 637h1v1h-1zM1454 637h1v1h-1zM1489 637h1v1h-1zM1524 637h1v1h-1zM1559 637h1v1h-1zM1594 637h1v1h-1zM1629 637h1v1h-1zM1664 637h1v1h-1zM1699 637h1v1h-1zM1734 637h1v1h-1zM20 668h1v1h-1zM55 668h1v1h-1zM90 668h1v1h-1zM125 668h1v1h-1zM160 668h1v1h-1zM195 668h1v1h-1zM230 668h1v1h-1zM265 668h1v1h-1zM300 668h1v1h-1zM335 668h1v1h-1zM370 668h1v1h-1zM405 668h1v1h-1zM440 668h1v1h-1zM475 668h1v1h-1zM510 668h1v1h-1zM545 668h1v1h-1zM580 668h1v1h-1zM615 668h1v1h-1zM650 668h1v1h-1zM685 668h1v1h-1zM720 668h1v1h-1zM754 668h1v1h-1zM789 668h1v1h-1zM824 668h1v1h-1zM859 668h1v1h-1zM894 668h1v1h-1zM929 668h1v1h-1zM964 668h1v1h-1zM999 668h1v1h-1zM1034 668h1v1h-1zM1069 668h1v1h-1zM1104 668h1v1h-1zM1139 668h1v1h-1zM1174 668h1v1h-1zM1209 668h1v1h-1zM1244 668h1v1h-1zM1279 668h1v1h-1zM1314 668h1v1h-1zM1349 668h1v1h-1zM1384 668h1v1h-1zM1419 668h1v1h-1zM1454 668h1v1h-1zM1489 668h1v1h-1zM1524 668h1v1h-1zM1559 668h1v1h-1zM1594 668h1v1h-1zM1629 668h1v1h-1zM1664 668h1v1h-1zM1699 668h1v1h-1zM1734 668h1v1h-1zM300 370h1v1h-1zM300 376h1v1h-1zM300 382h1v1h-1zM300 389h1v1h-1zM300 395h1v1h-1zM300 401h1v1h-1zM300 407h1v1h-1zM300 413h1v1h-1zM300 420h1v1h-1zM300 426h1v1h-1zM300 432h1v1h-1zM300 438h1v1h-1zM300 444h1v1h-1zM300 451h1v1h-1zM300 457h1v1h-1zM300 463h1v1h-1zM300 469h1v1h-1zM300 475h1v1h-1zM300 482h1v1h-1zM300 488h1v1h-1zM300 494h1v1h-1zM300 500h1v1h-1zM300 506h1v1h-1zM300 513h1v1h-1zM300 519h1v1h-1zM300 525h1v1h-1zM300 531h1v1h-1zM300 538h1v1h-1zM300 544h1v1h-1zM300 550h1v1h-1zM300 556h1v1h-1zM300 562h1v1h-1zM300 569h1v1h-1zM300 575h1v1h-1zM300 581h1v1h-1zM300 587h1v1h-1zM300 593h1v1h-1zM300 600h1v1h-1zM300 606h1v1h-1zM300 612h1v1h-1zM300 618h1v1h-1zM300 624h1v1h-1zM300 631h1v1h-1zM300 637h1v1h-1zM300 643h1v1h-1zM300 649h1v1h-1zM300 655h1v1h-1zM300 662h1v1h-1zM300 668h1v1h-1zM300 674h1v1h-1zM475 370h1v1h-1zM475 376h1v1h-1zM475 382h1v1h-1zM475 389h1v1h-1zM475 395h1v1h-1zM475 401h1v1h-1zM475 407h1v1h-1zM475 413h1v1h-1zM475 420h1v1h-1zM475 426h1v1h-1zM475 432h1v1h-1zM475 438h1v1h-1zM475 444h1v1h-1zM475 451h1v1h-1zM475 457h1v1h-1zM475 463h1v1h-1zM475 469h1v1h-1zM475 475h1v1h-1zM475 482h1v1h-1zM475 488h1v1h-1zM475 494h1v1h-1zM475 500h1v1h-1zM475 506h1v1h-1zM475 513h1v1h-1zM475 519h1v1h-1zM475 525h1v1h-1zM475 531h1v1h-1zM475 538h1v1h-1zM475 544h1v1h-1zM475 550h1v1h-1zM475 556h1v1h-1zM475 562h1v1h-1zM475 569h1v1h-1zM475 575h1v1h-1zM475 581h1v1h-1zM475 587h1v1h-1zM475 593h1v1h-1zM475 600h1v1h-1zM475 606h1v1h-1zM475 612h1v1h-1zM475 618h1v1h-1zM475 624h1v1h-1zM475 631h1v1h-1zM475 637h1v1h-1zM475 643h1v1h-1zM475 649h1v1h-1zM475 655h1v1h-1zM475 662h1v1h-1zM475 668h1v1h-1zM475 674h1v1h-1zM650 370h1v1h-1zM650 376h1v1h-1zM650 382h1v1h-1zM650 389h1v1h-1zM650 395h1v1h-1zM650 401h1v1h-1zM650 407h1v1h-1zM650 413h1v1h-1zM650 420h1v1h-1zM650 426h1v1h-1zM650 432h1v1h-1zM650 438h1v1h-1zM650 444h1v1h-1zM650 451h1v1h-1zM650 457h1v1h-1zM650 463h1v1h-1zM650 469h1v1h-1zM650 475h1v1h-1zM650 482h1v1h-1zM650 488h1v1h-1zM650 494h1v1h-1zM650 500h1v1h-1zM650 506h1v1h-1zM650 513h1v1h-1zM650 519h1v1h-1zM650 525h1v1h-1zM650 531h1v1h-1zM650 538h1v1h-1zM650 544h1v1h-1zM650 550h1v1h-1zM650 556h1v1h-1zM650 562h1v1h-1zM650 569h1v1h-1zM650 575h1v1h-1zM650 581h1v1h-1zM650 587h1v1h-1zM650 593h1v1h-1zM650 600h1v1h-1zM650 606h1v1h-1zM650 612h1v1h-1zM650 618h1v1h-1zM650 624h1v1h-1zM650 631h1v1h-1zM650 637h1v1h-1zM650 643h1v1h-1zM650 649h1v1h-1zM650 655h1v1h-1zM650 662h1v1h-1zM650 668h1v1h-1zM650 674h1v1h-1zM824 370h1v1h-1zM824 376h1v1h-1zM824 382h1v1h-1zM824 389h1v1h-1zM824 395h1v1h-1zM824 401h1v1h-1zM824 407h1v1h-1zM824 413h1v1h-1zM824 420h1v1h-1zM824 426h1v1h-1zM824 432h1v1h-1zM824 438h1v1h-1zM824 444h1v1h-1zM824 451h1v1h-1zM824 457h1v1h-1zM824 463h1v1h-1zM824 469h1v1h-1zM824 475h1v1h-1zM824 482h1v1h-1zM824 488h1v1h-1zM824 494h1v1h-1zM824 500h1v1h-1zM824 506h1v1h-1zM824 513h1v1h-1zM824 519h1v1h-1zM824 525h1v1h-1zM824 531h1v1h-1zM824 538h1v1h-1zM824 544h1v1h-1zM824 550h1v1h-1zM824 556h1v1h-1zM824 562h1v1h-1zM824 569h1v1h-1zM824 575h1v1h-1zM824 581h1v1h-1zM824 587h1v1h-1zM824 593h1v1h-1zM824 600h1v1h-1zM824 606h1v1h-1zM824 612h1v1h-1zM824 618h1v1h-1zM824 624h1v1h-1zM824 631h1v1h-1zM824 637h1v1h-1zM824 643h1v1h-1zM824 649h1v1h-1zM824 655h1v1h-1zM824 662h1v1h-1zM824 668h1v1h-1zM824 674h1v1h-1zM999 370h1v1h-1zM999 376h1v1h-1zM999 382h1v1h-1zM999 389h1v1h-1zM999 395h1v1h-1zM999 401h1v1h-1zM999 407h1v1h-1zM999 413h1v1h-1zM999 420h1v1h-1zM999 426h1v1h-1zM999 432h1v1h-1zM999 438h1v1h-1zM999 444h1v1h-1zM999 451h1v1h-1zM999 457h1v1h-1zM999 463h1v1h-1zM999 469h1v1h-1zM999 475h1v1h-1zM999 482h1v1h-1zM999 488h1v1h-1zM999 494h1v1h-1zM999 500h1v1h-1zM999 506h1v1h-1zM999 513h1v1h-1zM999 519h1v1h-1zM999 525h1v1h-1zM999 531h1v1h-1zM999 538h1v1h-1zM999 544h1v1h-1zM999 550h1v1h-1zM999 556h1v1h-1zM999 562h1v1h-1zM999 569h1v1h-1zM999 575h1v1h-1zM999 581h1v1h-1zM999 587h1v1h-1zM999 593h1v1h-1zM999 600h1v1h-1zM999 606h1v1h-1zM999 612h1v1h-1zM999 618h1v1h-1zM999 624h1v1h-1zM999 631h1v1h-1zM999 637h1v1h-1zM999 643h1v1h-1zM999 649h1v1h-1zM999 655h1v1h-1zM999 662h1v1h-1zM999 668h1v1h-1zM999 674h1v1h-1zM1174 370h1v1h-1zM1174 376h1v1h-1zM1174 382h1v1h-1zM1174 389h1v1h-1zM1174 395h1v1h-1zM1174 401h1v1h-1zM1174 407h1v1h-1zM1174 413h1v1h-1zM1174 420h1v1h-1zM1174 426h1v1h-1zM1174 432h1v1h-1zM1174 438h1v1h-1zM1174 444h1v1h-1zM1174 451h1v1h-1zM1174 457h1v1h-1zM1174 463h1v1h-1zM1174 469h1v1h-1zM1174 475h1v1h-1zM1174 482h1v1h-1zM1174 488h1v1h-1zM1174 494h1v1h-1zM1174 500h1v1h-1zM1174 506h1v1h-1zM1174 513h1v1h-1zM1174 519h1v1h-1zM1174 525h1v1h-1zM1174 531h1v1h-1zM1174 538h1v1h-1zM1174 544h1v1h-1zM1174 550h1v1h-1zM1174 556h1v1h-1zM1174 562h1v1h-1zM1174 569h1v1h-1zM1174 575h1v1h-1zM1174 581h1v1h-1zM1174 587h1v1h-1zM1174 593h1v1h-1zM1174 600h1v1h-1zM1174 606h1v1h-1zM1174 612h1v1h-1zM1174 618h1v1h-1zM1174 624h1v1h-1zM1174 631h1v1h-1zM1174 637h1v1h-1zM1174 643h1v1h-1zM1174 649h1v1h-1zM1174 655h1v1h-1zM1174 662h1v1h-1zM1174 668h1v1h-1zM1174 674h1v1h-1zM1349 370h1v1h-1zM1349 376h1v1h-1zM1349 382h1v1h-1zM1349 389h1v1h-1zM1349 395h1v1h-1zM1349 401h1v1h-1zM1349 407h1v1h-1zM1349 413h1v1h-1zM1349 420h1v1h-1zM1349 426h1v1h-1zM1349 432h1v1h-1zM1349 438h1v1h-1zM1349 444h1v1h-1zM1349 451h1v1h-1zM1349 457h1v1h-1zM1349 463h1v1h-1zM1349 469h1v1h-1zM1349 475h1v1h-1zM1349 482h1v1h-1zM1349 488h1v1h-1zM1349 494h1v1h-1zM1349 500h1v1h-1zM1349 506h1v1h-1zM1349 513h1v1h-1zM1349 519h1v1h-1zM1349 525h1v1h-1zM1349 531h1v1h-1zM1349 538h1v1h-1zM1349 544h1v1h-1zM1349 550h1v1h-1zM1349 556h1v1h-1zM1349 562h1v1h-1zM1349 569h1v1h-1zM1349 575h1v1h-1zM1349 581h1v1h-1zM1349 587h1v1h-1zM1349 593h1v1h-1zM1349 600h1v1h-1zM1349 606h1v1h-1zM1349 612h1v1h-1zM1349 618h1v1h-1zM1349 624h1v1h-1zM1349 631h1v1h-1zM1349 637h1v1h-1zM1349 643h1v1h-1zM1349 649h1v1h-1zM1349 655h1v1h-1zM1349 662h1v1h-1zM1349 668h1v1h-1zM1349 674h1v1h-1zM1524 370h1v1h-1zM1524 376h1v1h-1zM1524 382h1v1h-1zM1524 389h1v1h-1zM1524 395h1v1h-1zM1524 401h1v1h-1zM1524 407h1v1h-1zM1524 413h1v1h-1zM1524 420h1v1h-1zM1524 426h1v1h-1zM1524 432h1v1h-1zM1524 438h1v1h-1zM1524 444h1v1h-1zM1524 451h1v1h-1zM1524 457h1v1h-1zM1524 463h1v1h-1zM1524 469h1v1h-1zM1524 475h1v1h-1zM1524 482h1v1h-1zM1524 488h1v1h-1zM1524 494h1v1h-1zM1524 500h1v1h-1zM1524 506h1v1h-1zM1524 513h1v1h-1zM1524 519h1v1h-1zM1524 525h1v1h-1zM1524 531h1v1h-1zM1524 538h1v1h-1zM1524 544h1v1h-1zM1524 550h1v1h-1zM1524 556h1v1h-1zM1524 562h1v1h-1zM1524 569h1v1h-1zM1524 575h1v1h-1zM1524 581h1v1h-1zM1524 587h1v1h-1zM1524 593h1v1h-1zM1524 600h1v1h-1zM1524 606h1v1h-1zM1524 612h1v1h-1zM1524 618h1v1h-1zM1524 624h1v1h-1zM1524 631h1v1h-1zM1524 637h1v1h-1zM1524 643h1v1h-1zM1524 649h1v1h-1zM1524 655h1v1h-1zM1524 662h1v1h-1zM1524 668h1v1h-1zM1524 674h1v1h-1zM1699 370h1v1h-1zM1699 376h1v1h-1zM1699 382h1v1h-1zM1699 389h1v1h-1zM1699 395h1v1h-1zM1699 401h1v1h-1zM1699 407h1v1h-1zM1699 413h1v1h-1zM1699 420h1v1h-1zM1699 426h1v1h-1zM1699 432h1v1h-1zM1699 438h1v1h-1zM1699 444h1v1h-1zM1699 451h1v1h-1zM1699 457h1v1h-1zM1699 463h1v1h-1zM1699 469h1v1h-1zM1699 475h1v1h-1zM1699 482h1v1h-1zM1699 488h1v1h-1zM1699 494h1v1h-1zM1699 500h1v1h-1zM1699 506h1v1h-1zM1699 513h1v1h-1zM1699 519h1v1h-1zM1699 525h1v1h-1zM1699 531h1v1h-1zM1699 538h1v1h-1zM1699 544h1v1h-1zM1699 550h1v1h-1zM1699 556h1v1h-1zM1699 562h1v1h-1zM1699 569h1v1h-1zM1699 575h1v1h-1zM1699 581h1v1h-1zM1699 587h1v1h-1zM1699 593h1v1h-1zM1699 600h1v1h-1zM1699 606h1v1h-1zM1699 612h1v1h-1zM1699 618h1v1h-1zM1699 624h1v1h-1zM1699 631h1v1h-1zM1699 637h1v1h-1zM1699 643h1v1h-1zM1699 649h1v1h-1zM1699 655h1v1h-1zM1699 662h1v1h-1zM1699 668h1v1h-1zM1699 674h1v1h-1zM20 681h1v1h-1zM55 681h1v1h-1zM90 681h1v1h-1zM125 681h1v1h-1zM160 681h1v1h-1zM195 681h1v1h-1zM230 681h1v1h-1zM265 681h1v1h-1zM300 681h1v1h-1zM335 681h1v1h-1zM370 681h1v1h-1zM405 681h1v1h-1zM440 681h1v1h-1zM475 681h1v1h-1zM510 681h1v1h-1zM545 681h1v1h-1zM580 681h1v1h-1zM615 681h1v1h-1zM650 681h1v1h-1zM685 681h1v1h-1zM720 681h1v1h-1zM754 681h1v1h-1zM789 681h1v1h-1zM824 681h1v1h-1zM859 681h1v1h-1zM894 681h1v1h-1zM929 681h1v1h-1zM964 681h1v1h-1zM999 681h1v1h-1zM1034 681h1v1h-1zM1069 681h1v1h-1zM1104 681h1v1h-1zM1139 681h1v1h-1zM1174 681h1v1h-1zM1209 681h1v1h-1zM1244 681h1v1h-1zM1279 681h1v1h-1zM1314 681h1v1h-1zM1349 681h1v1h-1zM1384 681h1v1h-1zM1419 681h1v1h-1zM1454 681h1v1h-1zM1489 681h1v1h-1zM1524 681h1v1h-1zM1559 681h1v1h-1zM1594 681h1v1h-1zM1629 681h1v1h-1zM1664 681h1v1h-1zM1699 681h1v1h-1zM1734 681h1v1h-1zM20 712h1v1h-1zM55 712h1v1h-1zM90 712h1v1h-1zM125 712h1v1h-1zM160 712h1v1h-1zM195 712h1v1h-1zM230 712h1v1h-1zM265 712h1v1h-1zM300 712h1v1h-1zM335 712h1v1h-1zM370 712h1v1h-1zM405 712h1v1h-1zM440 712h1v1h-1zM475 712h1v1h-1zM510 712h1v1h-1zM545 712h1v1h-1zM580 712h1v1h-1zM615 712h1v1h-1zM650 712h1v1h-1zM685 712h1v1h-1zM720 712h1v1h-1zM754 712h1v1h-1zM789 712h1v1h-1zM824 712h1v1h-1zM859 712h1v1h-1zM894 712h1v1h-1zM929 712h1v1h-1zM964 712h1v1h-1zM999 712h1v1h-1zM1034 712h1v1h-1zM1069 712h1v1h-1zM1104 712h1v1h-1zM1139 712h1v1h-1zM1174 712h1v1h-1zM1209 712h1v1h-1zM1244 712h1v1h-1zM1279 712h1v1h-1zM1314 712h1v1h-1zM1349 712h1v1h-1zM1384 712h1v1h-1zM1419 712h1v1h-1zM1454 712h1v1h-1zM1489 712h1v1h-1zM1524 712h1v1h-1zM1559 712h1v1h-1zM1594 712h1v1h-1zM1629 712h1v1h-1zM1664 712h1v1h-1zM1699 712h1v1h-1zM1734 712h1v1h-1zM20 743h1v1h-1zM55 743h1v1h-1zM90 743h1v1h-1zM125 743h1v1h-1zM160 743h1v1h-1zM195 743h1v1h-1zM230 743h1v1h-1zM265 743h1v1h-1zM300 743h1v1h-1zM335 743h1v1h-1zM370 743h1v1h-1zM405 743h1v1h-1zM440 743h1v1h-1zM475 743h1v1h-1zM510 743h1v1h-1zM545 743h1v1h-1zM580 743h1v1h-1zM615 743h1v1h-1zM650 743h1v1h-1zM685 743h1v1h-1zM720 743h1v1h-1zM754 743h1v1h-1zM789 743h1v1h-1zM824 743h1v1h-1zM859 743h1v1h-1zM894 743h1v1h-1zM929 743h1v1h-1zM964 743h1v1h-1zM999 743h1v1h-1zM1034 743h1v1h-1zM1069 743h1v1h-1zM1104 743h1v1h-1zM1139 743h1v1h-1zM1174 743h1v1h-1zM1209 743h1v1h-1zM1244 743h1v1h-1zM1279 743h1v1h-1zM1314 743h1v1h-1zM1349 743h1v1h-1zM1384 743h1v1h-1zM1419 743h1v1h-1zM1454 743h1v1h-1zM1489 743h1v1h-1zM1524 743h1v1h-1zM1559 743h1v1h-1zM1594 743h1v1h-1zM1629 743h1v1h-1zM1664 743h1v1h-1zM1699 743h1v1h-1zM1734 743h1v1h-1zM20 774h1v1h-1zM55 774h1v1h-1zM90 774h1v1h-1zM125 774h1v1h-1zM160 774h1v1h-1zM195 774h1v1h-1zM230 774h1v1h-1zM265 774h1v1h-1zM300 774h1v1h-1zM335 774h1v1h-1zM370 774h1v1h-1zM405 774h1v1h-1zM440 774h1v1h-1zM475 774h1v1h-1zM510 774h1v1h-1zM545 774h1v1h-1zM580 774h1v1h-1zM615 774h1v1h-1zM650 774h1v1h-1zM685 774h1v1h-1zM720 774h1v1h-1zM754 774h1v1h-1zM789 774h1v1h-1zM824 774h1v1h-1zM859 774h1v1h-1zM894 774h1v1h-1zM929 774h1v1h-1zM964 774h1v1h-1zM999 774h1v1h-1zM1034 774h1v1h-1zM1069 774h1v1h-1zM1104 774h1v1h-1zM1139 774h1v1h-1zM1174 774h1v1h-1zM1209 774h1v1h-1zM1244 774h1v1h-1zM1279 774h1v1h-1zM1314 774h1v1h-1zM1349 774h1v1h-1zM1384 774h1v1h-1zM1419 774h1v1h-1zM1454 774h1v1h-1zM1489 774h1v1h-1zM1524 774h1v1h-1zM1559 774h1v1h-1zM1594 774h1v1h-1zM1629 774h1v1h-1zM1664 774h1v1h-1zM1699 774h1v1h-1zM1734 774h1v1h-1zM20 805h1v1h-1zM55 805h1v1h-1zM90 805h1v1h-1zM125 805h1v1h-1zM160 805h1v1h-1zM195 805h1v1h-1zM230 805h1v1h-1zM265 805h1v1h-1zM300 805h1v1h-1zM335 805h1v1h-1zM370 805h1v1h-1zM405 805h1v1h-1zM440 805h1v1h-1zM475 805h1v1h-1zM510 805h1v1h-1zM545 805h1v1h-1zM580 805h1v1h-1zM615 805h1v1h-1zM650 805h1v1h-1zM685 805h1v1h-1zM720 805h1v1h-1zM754 805h1v1h-1zM789 805h1v1h-1zM824 805h1v1h-1zM859 805h1v1h-1zM894 805h1v1h-1zM929 805h1v1h-1zM964 805h1v1h-1zM999 805h1v1h-1zM1034 805h1v1h-1zM1069 805h1v1h-1zM1104 805h1v1h-1zM1139 805h1v1h-1zM1174 805h1v1h-1zM1209 805h1v1h-1zM1244 805h1v1h-1zM1279 805h1v1h-1zM1314 805h1v1h-1zM1349 805h1v1h-1zM1384 805h1v1h-1zM1419 805h1v1h-1zM1454 805h1v1h-1zM1489 805h1v1h-1zM1524 805h1v1h-1zM1559 805h1v1h-1zM1594 805h1v1h-1zM1629 805h1v1h-1zM1664 805h1v1h-1zM1699 805h1v1h-1zM1734 805h1v1h-1zM20 836h1v1h-1zM55 836h1v1h-1zM90 836h1v1h-1zM125 836h1v1h-1zM160 836h1v1h-1zM195 836h1v1h-1zM230 836h1v1h-1zM265 836h1v1h-1zM300 836h1v1h-1zM335 836h1v1h-1zM370 836h1v1h-1zM405 836h1v1h-1zM440 836h1v1h-1zM475 836h1v1h-1zM510 836h1v1h-1zM545 836h1v1h-1zM580 836h1v1h-1zM615 836h1v1h-1zM650 836h1v1h-1zM685 836h1v1h-1zM720 836h1v1h-1zM754 836h1v1h-1zM789 836h1v1h-1zM824 836h1v1h-1zM859 836h1v1h-1zM894 836h1v1h-1zM929 836h1v1h-1zM964 836h1v1h-1zM999 836h1v1h-1zM1034 836h1v1h-1zM1069 836h1v1h-1zM1104 836h1v1h-1zM1139 836h1v1h-1zM1174 836h1v1h-1zM1209 836h1v1h-1zM1244 836h1v1h-1zM1279 836h1v1h-1zM1314 836h1v1h-1zM1349 836h1v1h-1zM1384 836h1v1h-1zM1419 836h1v1h-1zM1454 836h1v1h-1zM1489 836h1v1h-1zM1524 836h1v1h-1zM1559 836h1v1h-1zM1594 836h1v1h-1zM1629 836h1v1h-1zM1664 836h1v1h-1zM1699 836h1v1h-1zM1734 836h1v1h-1zM20 868h1v1h-1zM55 868h1v1h-1zM90 868h1v1h-1zM125 868h1v1h-1zM160 868h1v1h-1zM195 868h1v1h-1zM230 868h1v1h-1zM265 868h1v1h-1zM300 868h1v1h-1zM335 868h1v1h-1zM370 868h1v1h-1zM405 868h1v1h-1zM440 868h1v1h-1zM475 868h1v1h-1zM510 868h1v1h-1zM545 868h1v1h-1zM580 868h1v1h-1zM615 868h1v1h-1zM650 868h1v1h-1zM685 868h1v1h-1zM720 868h1v1h-1zM754 868h1v1h-1zM789 868h1v1h-1zM824 868h1v1h-1zM859 868h1v1h-1zM894 868h1v1h-1zM929 868h1v1h-1zM964 868h1v1h-1zM999 868h1v1h-1zM1034 868h1v1h-1zM1069 868h1v1h-1zM1104 868h1v1h-1zM1139 868h1v1h-1zM1174 868h1v1h-1zM1209 868h1v1h-1zM1244 868h1v1h-1zM1279 868h1v1h-1zM1314 868h1v1h-1zM1349 868h1v1h-1zM1384 868h1v1h-1zM1419 868h1v1h-1zM1454 868h1v1h-1zM1489 868h1v1h-1zM1524 868h1v1h-1zM1559 868h1v1h-1zM1594 868h1v1h-1zM1629 868h1v1h-1zM1664 868h1v1h-1zM1699 868h1v1h-1zM1734 868h1v1h-1zM20 899h1v1h-1zM55 899h1v1h-1zM90 899h1v1h-1zM125 899h1v1h-1zM160 899h1v1h-1zM195 899h1v1h-1zM230 899h1v1h-1zM265 899h1v1h-1zM300 899h1v1h-1zM335 899h1v1h-1zM370 899h1v1h-1zM405 899h1v1h-1zM440 899h1v1h-1zM475 899h1v1h-1zM510 899h1v1h-1zM545 899h1v1h-1zM580 899h1v1h-1zM615 899h1v1h-1zM650 899h1v1h-1zM685 899h1v1h-1zM720 899h1v1h-1zM754 899h1v1h-1zM789 899h1v1h-1zM824 899h1v1h-1zM859 899h1v1h-1zM894 899h1v1h-1zM929 899h1v1h-1zM964 899h1v1h-1zM999 899h1v1h-1zM1034 899h1v1h-1zM1069 899h1v1h-1zM1104 899h1v1h-1zM1139 899h1v1h-1zM1174 899h1v1h-1zM1209 899h1v1h-1zM1244 899h1v1h-1zM1279 899h1v1h-1zM1314 899h1v1h-1zM1349 899h1v1h-1zM1384 899h1v1h-1zM1419 899h1v1h-1zM1454 899h1v1h-1zM1489 899h1v1h-1zM1524 899h1v1h-1zM1559 899h1v1h-1zM1594 899h1v1h-1zM1629 899h1v1h-1zM1664 899h1v1h-1zM1699 899h1v1h-1zM1734 899h1v1h-1zM20 930h1v1h-1zM55 930h1v1h-1zM90 930h1v1h-1zM125 930h1v1h-1zM160 930h1v1h-1zM195 930h1v1h-1zM230 930h1v1h-1zM265 930h1v1h-1zM300 930h1v1h-1zM335 930h1v1h-1zM370 930h1v1h-1zM405 930h1v1h-1zM440 930h1v1h-1zM475 930h1v1h-1zM510 930h1v1h-1zM545 930h1v1h-1zM580 930h1v1h-1zM615 930h1v1h-1zM650 930h1v1h-1zM685 930h1v1h-1zM720 930h1v1h-1zM754 930h1v1h-1zM789 930h1v1h-1zM824 930h1v1h-1zM859 930h1v1h-1zM894 930h1v1h-1zM929 930h1v1h-1zM964 930h1v1h-1zM999 930h1v1h-1zM1034 930h1v1h-1zM1069 930h1v1h-1zM1104 930h1v1h-1zM1139 930h1v1h-1zM1174 930h1v1h-1zM1209 930h1v1h-1zM1244 930h1v1h-1zM1279 930h1v1h-1zM1314 930h1v1h-1zM1349 930h1v1h-1zM1384 930h1v1h-1zM1419 930h1v1h-1zM1454 930h1v1h-1zM1489 930h1v1h-1zM1524 930h1v1h-1zM1559 930h1v1h-1zM1594 930h1v1h-1zM1629 930h1v1h-1zM1664 930h1v1h-1zM1699 930h1v1h-1zM1734 930h1v1h-1zM20 961h1v1h-1zM55 961h1v1h-1zM90 961h1v1h-1zM125 961h1v1h-1zM160 961h1v1h-1zM195 961h1v1h-1zM230 961h1v1h-1zM265 961h1v1h-1zM300 961h1v1h-1zM335 961h1v1h-1zM370 961h1v1h-1zM405 961h1v1h-1zM440 961h1v1h-1zM475 961h1v1h-1zM510 961h1v1h-1zM545 961h1v1h-1zM580 961h1v1h-1zM615 961h1v1h-1zM650 961h1v1h-1zM685 961h1v1h-1zM720 961h1v1h-1zM754 961h1v1h-1zM789 961h1v1h-1zM824 961h1v1h-1zM859 961h1v1h-1zM894 961h1v1h-1zM929 961h1v1h-1zM964 961h1v1h-1zM999 961h1v1h-1zM1034 961h1v1h-1zM1069 961h1v1h-1zM1104 961h1v1h-1zM1139 961h1v1h-1zM1174 961h1v1h-1zM1209 961h1v1h-1zM1244 961h1v1h-1zM1279 961h1v1h-1zM1314 961h1v1h-1zM1349 961h1v1h-1zM1384 961h1v1h-1zM1419 961h1v1h-1zM1454 961h1v1h-1zM1489 961h1v1h-1zM1524 961h1v1h-1zM1559 961h1v1h-1zM1594 961h1v1h-1zM1629 961h1v1h-1zM1664 961h1v1h-1zM1699 961h1v1h-1zM1734 961h1v1h-1zM300 681h1v1h-1zM300 687h1v1h-1zM300 693h1v1h-1zM300 699h1v1h-1zM300 706h1v1h-1zM300 712h1v1h-1zM300 718h1v1h-1zM300 724h1v1h-1zM300 730h1v1h-1zM300 737h1v1h-1zM300 743h1v1h-1zM300 749h1v1h-1zM300 755h1v1h-1zM300 761h1v1h-1zM300 768h1v1h-1zM300 774h1v1h-1zM300 780h1v1h-1zM300 786h1v1h-1zM300 792h1v1h-1zM300 799h1v1h-1zM300 805h1v1h-1zM300 811h1v1h-1zM300 817h1v1h-1zM300 823h1v1h-1zM300 830h1v1h-1zM300 836h1v1h-1zM300 843h1v1h-1zM300 849h1v1h-1zM300 855h1v1h-1zM300 862h1v1h-1zM300 868h1v1h-1zM300 874h1v1h-1zM300 880h1v1h-1zM300 886h1v1h-1zM300 893h1v1h-1zM300 899h1v1h-1zM300 905h1v1h-1zM300 911h1v1h-1zM300 917h1v1h-1zM300 924h1v1h-1zM300 930h1v1h-1zM300 936h1v1h-1zM300 942h1v1h-1zM300 948h1v1h-1zM300 955h1v1h-1zM300 961h1v1h-1zM300 967h1v1h-1zM300 973h1v1h-1zM475 681h1v1h-1zM475 687h1v1h-1zM475 693h1v1h-1zM475 699h1v1h-1zM475 706h1v1h-1zM475 712h1v1h-1zM475 718h1v1h-1zM475 724h1v1h-1zM475 730h1v1h-1zM475 737h1v1h-1zM475 743h1v1h-1zM475 749h1v1h-1zM475 755h1v1h-1zM475 761h1v1h-1zM475 768h1v1h-1zM475 774h1v1h-1zM475 780h1v1h-1zM475 786h1v1h-1zM475 792h1v1h-1zM475 799h1v1h-1zM475 805h1v1h-1zM475 811h1v1h-1zM475 817h1v1h-1zM475 823h1v1h-1zM475 830h1v1h-1zM475 836h1v1h-1zM475 843h1v1h-1zM475 849h1v1h-1zM475 855h1v1h-1zM475 862h1v1h-1zM475 868h1v1h-1zM475 874h1v1h-1zM475 880h1v1h-1zM475 886h1v1h-1zM475 893h1v1h-1zM475 899h1v1h-1zM475 905h1v1h-1zM475 911h1v1h-1zM475 917h1v1h-1zM475 924h1v1h-1zM475 930h1v1h-1zM475 936h1v1h-1zM475 942h1v1h-1zM475 948h1v1h-1zM475 955h1v1h-1zM475 961h1v1h-1zM475 967h1v1h-1zM475 973h1v1h-1zM650 681h1v1h-1zM650 687h1v1h-1zM650 693h1v1h-1zM650 699h1v1h-1zM650 706h1v1h-1zM650 712h1v1h-1zM650 718h1v1h-1zM650 724h1v1h-1zM650 730h1v1h-1zM650 737h1v1h-1zM650 743h1v1h-1zM650 749h1v1h-1zM650 755h1v1h-1zM650 761h1v1h-1zM650 768h1v1h-1zM650 774h1v1h-1zM650 780h1v1h-1zM650 786h1v1h-1zM650 792h1v1h-1zM650 799h1v1h-1zM650 805h1v1h-1zM650 811h1v1h-1zM650 817h1v1h-1zM650 823h1v1h-1zM650 830h1v1h-1zM650 836h1v1h-1zM650 843h1v1h-1zM650 849h1v1h-1zM650 855h1v1h-1zM650 862h1v1h-1zM650 868h1v1h-1zM650 874h1v1h-1zM650 880h1v1h-1zM650 886h1v1h-1zM650 893h1v1h-1zM650 899h1v1h-1zM650 905h1v1h-1zM650 911h1v1h-1zM650 917h1v1h-1zM650 924h1v1h-1zM650 930h1v1h-1zM650 936h1v1h-1zM650 942h1v1h-1zM650 948h1v1h-1zM650 955h1v1h-1zM650 961h1v1h-1zM650 967h1v1h-1zM650 973h1v1h-1zM824 681h1v1h-1zM824 687h1v1h-1zM824 693h1v1h-1zM824 699h1v1h-1zM824 706h1v1h-1zM824 712h1v1h-1zM824 718h1v1h-1zM824 724h1v1h-1zM824 730h1v1h-1zM824 737h1v1h-1zM824 743h1v1h-1zM824 749h1v1h-1zM824 755h1v1h-1zM824 761h1v1h-1zM824 768h1v1h-1zM824 774h1v1h-1zM824 780h1v1h-1zM824 786h1v1h-1zM824 792h1v1h-1zM824 799h1v1h-1zM824 805h1v1h-1zM824 811h1v1h-1zM824 817h1v1h-1zM824 823h1v1h-1zM824 830h1v1h-1zM824 836h1v1h-1zM824 843h1v1h-1zM824 849h1v1h-1zM824 855h1v1h-1zM824 862h1v1h-1zM824 868h1v1h-1zM824 874h1v1h-1zM824 880h1v1h-1zM824 886h1v1h-1zM824 893h1v1h-1zM824 899h1v1h-1zM824 905h1v1h-1zM824 911h1v1h-1zM824 917h1v1h-1zM824 924h1v1h-1zM824 930h1v1h-1zM824 936h1v1h-1zM824 942h1v1h-1zM824 948h1v1h-1zM824 955h1v1h-1zM824 961h1v1h-1zM824 967h1v1h-1zM824 973h1v1h-1zM999 681h1v1h-1zM999 687h1v1h-1zM999 693h1v1h-1zM999 699h1v1h-1zM999 706h1v1h-1zM999 712h1v1h-1zM999 718h1v1h-1zM999 724h1v1h-1zM999 730h1v1h-1zM999 737h1v1h-1zM999 743h1v1h-1zM999 749h1v1h-1zM999 755h1v1h-1zM999 761h1v1h-1zM999 768h1v1h-1zM999 774h1v1h-1zM999 780h1v1h-1zM999 786h1v1h-1zM999 792h1v1h-1zM999 799h1v1h-1zM999 805h1v1h-1zM999 811h1v1h-1zM999 817h1v1h-1zM999 823h1v1h-1zM999 830h1v1h-1zM999 836h1v1h-1zM999 843h1v1h-1zM999 849h1v1h-1zM999 855h1v1h-1zM999 862h1v1h-1zM999 868h1v1h-1zM999 874h1v1h-1zM999 880h1v1h-1zM999 886h1v1h-1zM999 893h1v1h-1zM999 899h1v1h-1zM999 905h1v1h-1zM999 911h1v1h-1zM999 917h1v1h-1zM999 924h1v1h-1zM999 930h1v1h-1zM999 936h1v1h-1zM999 942h1v1h-1zM999 948h1v1h-1zM999 955h1v1h-1zM999 961h1v1h-1zM999 967h1v1h-1zM999 973h1v1h-1zM1174 681h1v1h-1zM1174 687h1v1h-1zM1174 693h1v1h-1zM1174 699h1v1h-1zM1174 706h1v1h-1zM1174 712h1v1h-1zM1174 718h1v1h-1zM1174 724h1v1h-1zM1174 730h1v1h-1zM1174 737h1v1h-1zM1174 743h1v1h-1zM1174 749h1v1h-1zM1174 755h1v1h-1zM1174 761h1v1h-1zM1174 768h1v1h-1zM1174 774h1v1h-1zM1174 780h1v1h-1zM1174 786h1v1h-1zM1174 792h1v1h-1zM1174 799h1v1h-1zM1174 805h1v1h-1zM1174 811h1v1h-1zM1174 817h1v1h-1zM1174 823h1v1h-1zM1174 830h1v1h-1zM1174 836h1v1h-1zM1174 843h1v1h-1zM1174 849h1v1h-1zM1174 855h1v1h-1zM1174 862h1v1h-1zM1174 868h1v1h-1zM1174 874h1v1h-1zM1174 880h1v1h-1zM1174 886h1v1h-1zM1174 893h1v1h-1zM1174 899h1v1h-1zM1174 905h1v1h-1zM1174 911h1v1h-1zM1174 917h1v1h-1zM1174 924h1v1h-1zM1174 930h1v1h-1zM1174 936h1v1h-1zM1174 942h1v1h-1zM1174 948h1v1h-1zM1174 955h1v1h-1zM1174 961h1v1h-1zM1174 967h1v1h-1zM1174 973h1v1h-1zM1349 681h1v1h-1zM1349 687h1v1h-1zM1349 693h1v1h-1zM1349 699h1v1h-1zM1349 706h1v1h-1zM1349 712h1v1h-1zM1349 718h1v1h-1zM1349 724h1v1h-1zM1349 730h1v1h-1zM1349 737h1v1h-1zM1349 743h1v1h-1zM1349 749h1v1h-1zM1349 755h1v1h-1zM1349 761h1v1h-1zM1349 768h1v1h-1zM1349 774h1v1h-1zM1349 780h1v1h-1zM1349 786h1v1h-1zM1349 792h1v1h-1zM1349 799h1v1h-1zM1349 805h1v1h-1zM1349 811h1v1h-1zM1349 817h1v1h-1zM1349 823h1v1h-1zM1349 830h1v1h-1zM1349 836h1v1h-1zM1349 843h1v1h-1zM1349 849h1v1h-1zM1349 855h1v1h-1zM1349 862h1v1h-1zM1349 868h1v1h-1zM1349 874h1v1h-1zM1349 880h1v1h-1zM1349 886h1v1h-1zM1349 893h1v1h-1zM1349 899h1v1h-1zM1349 905h1v1h-1zM1349 911h1v1h-1zM1349 917h1v1h-1zM1349 924h1v1h-1zM1349 930h1v1h-1zM1349 936h1v1h-1zM1349 942h1v1h-1zM1349 948h1v1h-1zM1349 955h1v1h-1zM1349 961h1v1h-1zM1349 967h1v1h-1zM1349 973h1v1h-1zM1524 681h1v1h-1zM1524 687h1v1h-1zM1524 693h1v1h-1zM1524 699h1v1h-1zM1524 706h1v1h-1zM1524 712h1v1h-1zM1524 718h1v1h-1zM1524 724h1v1h-1zM1524 730h1v1h-1zM1524 737h1v1h-1zM1524 743h1v1h-1zM1524 749h1v1h-1zM1524 755h1v1h-1zM1524 761h1v1h-1zM1524 768h1v1h-1zM1524 774h1v1h-1zM1524 780h1v1h-1zM1524 786h1v1h-1zM1524 792h1v1h-1zM1524 799h1v1h-1zM1524 805h1v1h-1zM1524 811h1v1h-1zM1524 817h1v1h-1zM1524 823h1v1h-1zM1524 830h1v1h-1zM1524 836h1v1h-1zM1524 843h1v1h-1zM1524 849h1v1h-1zM1524 855h1v1h-1zM1524 862h1v1h-1zM1524 868h1v1h-1zM1524 874h1v1h-1zM1524 880h1v1h-1zM1524 886h1v1h-1zM1524 893h1v1h-1zM1524 899h1v1h-1zM1524 905h1v1h-1zM1524 911h1v1h-1zM1524 917h1v1h-1zM1524 924h1v1h-1zM1524 930h1v1h-1zM1524 936h1v1h-1zM1524 942h1v1h-1zM1524 948h1v1h-1zM1524 955h1v1h-1zM1524 961h1v1h-1zM1524 967h1v1h-1zM1524 973h1v1h-1zM1699 681h1v1h-1zM1699 687h1v1h-1zM1699 693h1v1h-1zM1699 699h1v1h-1zM1699 706h1v1h-1zM1699 712h1v1h-1zM1699 718h1v1h-1zM1699 724h1v1h-1zM1699 730h1v1h-1zM1699 737h1v1h-1zM1699 743h1v1h-1zM1699 749h1v1h-1zM1699 755h1v1h-1zM1699 761h1v1h-1zM1699 768h1v1h-1zM1699 774h1v1h-1zM1699 780h1v1h-1zM1699 786h1v1h-1zM1699 792h1v1h-1zM1699 799h1v1h-1zM1699 805h1v1h-1zM1699 811h1v1h-1zM1699 817h1v1h-1zM1699 823h1v1h-1zM1699 830h1v1h-1zM1699 836h1v1h-1zM1699 843h1v1h-1zM1699 849h1v1h-1zM1699 855h1v1h-1zM1699 862h1v1h-1zM1699 868h1v1h-1zM1699 874h1v1h-1zM1699 880h1v1h-1zM1699 886h1v1h-1zM1699 893h1v1h-1zM1699 899h1v1h-1zM1699 905h1v1h-1zM1699 911h1v1h-1zM1699 917h1v1h-1zM1699 924h1v1h-1zM1699 930h1v1h-1zM1699 936h1v1h-1zM1699 942h1v1h-1zM1699 948h1v1h-1zM1699 955h1v1h-1zM1699 961h1v1h-1zM1699 967h1v1h-1zM1699 973h1v1h-1z" fill="#c2c2c2"/>
<rect x="3" y="367" width="1748" height="2" fill="#6c6c6c"/>
<rect x="3" y="679" width="1748" height="2" fill="#6c6c6c"/>
<path d="M125.5 98V992" stroke="#cdcdcd" stroke-width="1" stroke-dasharray="5 5" fill="none"/>
<path d="M160.5 369V674M440.5 369V674" stroke="#f4901e" stroke-width="1.2" stroke-dasharray="5 5" fill="none"/>
<path d="M43 340.5H1751M43 544.5H1751M43 836.5H1751" stroke="#cfcfcf" stroke-width="1" stroke-dasharray="5 5" fill="none"/>
<g clip-path="url(#c1)">
<path d="M125.5 238.5V325M129.5 247V338.5M134.5 238.5V325M138.5 247V338.5M142.5 238.5V325M147.5 247V338.5M151.5 238.5V325M155.5 247V338.5M160.5 238.5V325M164.5 247V338.5M169.5 238.5V325M173.5 247V338.5M177.5 238.5V325M181.5 247V338.5M186.5 238.5V325M190.5 247V338.5M195.5 238.5V325M199.5 247V338.5M204.5 238.5V325M208.5 247V338.5M212.5 238.5V325M217.5 247V338.5M221.5 238.5V325M225.5 247V338.5M230.5 238.5V325M234.5 247V338.5M239.5 238.5V325M243.5 247V338.5M247.5 238.5V325M252.5 247V338.5M256.5 238.5V325M260.5 247V338.5M265.5 238.5V325M269.5 247V338.5M273.5 238.5V325M278.5 247V338.5M282.5 238.5V325M287.5 247V338.5M291.5 238.5V325M295.5 247V338.5M300.5 238.5V325M304.5 247V338.5M308.5 238.5V325M313.5 247V338.5M317.5 238.5V325M322.5 247V338.5M326.5 238.5V325M330.5 247V338.5M335.5 238.5V325M339.5 247V338.5M343.5 238.5V325M348.5 247V338.5M352.5 238.5V325M356.5 247V338.5M361.5 238.5V325M365.5 247V338.5M370.5 238.5V325M374.5 247V338.5M379.5 238.5V325M383.5 247V338.5M387.5 238.5V325M392.5 247V338.5M396.5 238.5V325M400.5 247V338.5M405.5 238.5V325M409.5 247V338.5M414.5 238.5V325M418.5 247V338.5M422.5 238.5V325M427.5 247V338.5M431.5 238.5V325M435.5 247V338.5M440.5 238.5V325M444.5 247V338.5M448.5 238.5V325M452.5 247V338.5M457.5 238.5V325M461.5 247V338.5M466.5 238.5V325M470.5 247V338.5M475.5 238.5V325M479.5 247V338.5M483.5 238.5V325M488.5 247V338.5M492.5 238.5V325M496.5 247V338.5M501.5 238.5V325M505.5 247V338.5M509.5 238.5V325M514.5 247V338.5M518.5 238.5V325M523.5 247V338.5M527.5 238.5V325M532.5 247V338.5M536.5 238.5V325M540.5 247V338.5M545.5 238.5V325M549.5 247V338.5M553.5 238.5V325M558.5 247V338.5M562.5 238.5V325M566.5 247V338.5M571.5 238.5V325M575.5 247V338.5M579.5 238.5V325M584.5 247V338.5M588.5 238.5V325M593.5 247V338.5M597.5 238.5V325M601.5 247V338.5M606.5 238.5V325M610.5 247V338.5M614.5 238.5V325M619.5 247V338.5M623.5 238.5V325M628.5 247V338.5M632.5 238.5V325M636.5 247V338.5M641.5 238.5V325M645.5 247V338.5M649.5 238.5V325M654.5 247V338.5M658.5 238.5V325M663.5 247V338.5M667.5 238.5V325M671.5 247V338.5M675.5 238.5V325M680.5 247V338.5M684.5 238.5V325M689.5 247V338.5M693.5 238.5V325M697.5 247V338.5M702.5 238.5V325M706.5 247V338.5M710.5 238.5V325M715.5 247V338.5M719.5 238.5V325M724.5 247V338.5M728.5 238.5V325M732.5 247V338.5M737.5 238.5V325M741.5 247V338.5M745.5 238.5V325M750.5 247V338.5M754.5 238.5V325M759.5 247V338.5M763.5 238.5V325M767.5 247V338.5M772.5 238.5V325M776.5 247V338.5M781.5 238.5V325M785.5 247V338.5M789.5 238.5V325M794.5 247V338.5M798.5 238.5V325M802.5 247V338.5M807.5 238.5V325M811.5 247V338.5M815.5 238.5V325M820.5 247V338.5M824.5 238.5V325M829.5 247V338.5M833.5 238.5V325M837.5 247V338.5M842.5 238.5V325M846.5 247V338.5M851.5 238.5V325M855.5 247V338.5M859.5 238.5V325M863.5 247V338.5M868.5 238.5V325M872.5 247V338.5M877.5 238.5V325M881.5 247V338.5M885.5 238.5V325M890.5 247V338.5M894.5 238.5V325M898.5 247V338.5M903.5 238.5V325M907.5 247V338.5M912.5 238.5V325M916.5 247V338.5M920.5 238.5V325M925.5 247V338.5M929.5 238.5V325M933.5 247V338.5M938.5 238.5V325M942.5 247V338.5M947.5 238.5V325M951.5 247V338.5M955.5 238.5V325M960.5 247V338.5M964.5 238.5V325M968.5 247V338.5M973.5 238.5V325M977.5 247V338.5M981.5 238.5V325M986.5 247V338.5M990.5 238.5V325M994.5 247V338.5M999.5 238.5V325M1003.5 247V338.5M1008.5 238.5V325M1012.5 247V338.5M1016.5 238.5V325M1021.5 247V338.5M1025.5 238.5V325M1029.5 247V338.5M1034.5 238.5V325M1038.5 247V338.5M1043.5 238.5V325M1047.5 247V338.5M1051.5 238.5V325M1056.5 247V338.5M1060.5 238.5V325M1065.5 247V338.5M1069.5 238.5V325M1073.5 247V338.5M1078.5 238.5V325M1082.5 247V338.5M1086.5 238.5V325M1091.5 247V338.5M1095.5 238.5V325M1099.5 247V338.5M1104.5 238.5V325M1108.5 247V338.5M1113.5 238.5V325M1117.5 247V338.5M1122.5 238.5V325M1126.5 247V338.5M1130.5 238.5V325M1135.5 247V338.5M1139.5 238.5V325M1143.5 247V338.5M1147.5 238.5V325M1152.5 247V338.5M1156.5 238.5V325M1161.5 247V338.5M1165.5 238.5V325M1170.5 247V338.5M1174.5 238.5V325M1178.5 247V338.5M1183.5 238.5V325M1187.5 247V338.5M1191.5 238.5V325M1196.5 247V338.5M1200.5 238.5V325M1204.5 247V338.5M1209.5 238.5V325M1213.5 247V338.5M1218.5 238.5V325M1222.5 247V338.5M1226.5 238.5V325M1230.5 247V338.5M1235.5 238.5V325M1240.5 247V338.5M1244.5 238.5V325M1248.5 247V338.5M1253.5 238.5V325M1257.5 247V338.5M1261.5 238.5V325M1266.5 247V338.5M1270.5 238.5V325M1275.5 247V338.5M1279.5 238.5V325M1283.5 247V338.5M1287.5 238.5V325M1292.5 247V338.5M1296.5 238.5V325M1300.5 247V338.5M1305.5 238.5V325M1309.5 247V338.5M1314.5 238.5V325M1318.5 247V338.5M1322.5 238.5V325M1327.5 247V338.5M1331.5 238.5V325M1335.5 247V338.5M1340.5 238.5V325M1344.5 247V338.5M1349.5 238.5V325M1353.5 247V338.5M1357.5 238.5V325M1362.5 247V338.5M1366.5 238.5V325M1371.5 247V338.5M1375.5 238.5V325M1379.5 247V338.5M1384.5 238.5V325M1388.5 247V338.5M1392.5 238.5V325M1397.5 247V338.5M1401.5 238.5V325M1405.5 247V338.5M1410.5 238.5V325M1414.5 247V338.5M1419.5 238.5V325M1423.5 247V338.5M1427.5 238.5V325M1432.5 247V338.5M1436.5 238.5V325M1440.5 247V338.5M1445.5 238.5V325M1449.5 247V338.5M1454.5 238.5V325M1458.5 247V338.5M1462.5 238.5V325M1467.5 247V338.5M1471.5 238.5V325M1475.5 247V338.5M1480.5 238.5V325M1484.5 247V338.5M1489.5 238.5V325M1493.5 247V338.5M1497.5 238.5V325M1502.5 247V338.5M1506.5 238.5V325M1511.5 247V338.5M1515.5 238.5V325M1519.5 247V338.5M1523.5 238.5V325M1528.5 247V338.5M1532.5 238.5V325M1537.5 247V338.5M1541.5 238.5V325M1545.5 247V338.5M1550.5 238.5V325M1554.5 247V338.5M1559.5 238.5V325M1563.5 247V338.5M1567.5 238.5V325M1572.5 247V338.5M1576.5 238.5V325M1581.5 247V338.5M1585.5 238.5V325M1589.5 247V338.5M1593.5 238.5V325M1598.5 247V338.5M1602.5 238.5V325M1607.5 247V338.5M1611.5 238.5V325M1615.5 247V338.5M1620.5 238.5V325M1624.5 247V338.5M1628.5 238.5V325M1633.5 247V338.5M1637.5 238.5V325M1641.5 247V338.5M1646.5 238.5V325M1650.5 247V338.5M1654.5 238.5V325M1659.5 247V338.5M1663.5 238.5V325M1668.5 247V338.5M1672.5 238.5V325M1676.5 247V338.5M1681.5 238.5V325M1685.5 247V338.5M1690.5 238.5V325M1694.5 247V338.5M1698.5 238.5V325M1703.5 247V338.5M1707.5 238.5V325M1711.5 247V338.5M1716.5 238.5V325M1720.5 247V338.5M1724.5 238.5V325M1729.5 247V338.5M1733.5 238.5V325M1738.5 247V338.5M1742.5 238.5V325M1746.5 247V338.5" stroke="#7a7008" stroke-width="1" fill="none"/>
<path d="M125.5 324V367M129.5 215V250M134.5 324V361M138.5 215V247M142.5 324V367M147.5 217V249M151.5 324V360M155.5 215V247M160.5 324V358M164.5 215V246M169.5 324V358M173.5 215V247M177.5 324V367M181.5 216V246M181.5 238V261M186.5 324V361M186.5 314V338M190.5 215V248M195.5 324V361M199.5 214V249M204.5 324V360M208.5 214V249M208.5 238V261M212.5 324V360M217.5 214V246M221.5 324V367M225.5 215V246M230.5 324V362M234.5 217V249M239.5 324V360M243.5 217V248M247.5 324V362M252.5 214V250M256.5 324V362M256.5 296V338M260.5 214V249M265.5 324V360M269.5 215V250M273.5 324V362M278.5 216V248M282.5 324V360M287.5 217V247M291.5 324V362M295.5 214V246M300.5 324V362M304.5 216V249M308.5 324V358M313.5 214V246M317.5 324V367M322.5 215V250M322.5 238V256M326.5 324V367M330.5 215V246M335.5 324V367M339.5 214V246M343.5 324V361M348.5 215V250M352.5 324V367M356.5 215V249M361.5 324V359M365.5 217V247M370.5 324V360M374.5 214V249M379.5 324V360M383.5 217V246M387.5 324V367M392.5 214V248M396.5 324V359M400.5 215V246M405.5 324V360M409.5 214V247M414.5 324V367M418.5 215V249M422.5 324V362M427.5 215V250M431.5 324V367M435.5 217V250M440.5 324V367M444.5 215V247M448.5 324V359M448.5 317V338M452.5 217V250M457.5 324V361M457.5 301V338M461.5 215V249M466.5 324V360M470.5 215V248M475.5 324V362M479.5 214V247M483.5 324V360M483.5 314V338M488.5 216V246M492.5 324V358M496.5 215V250M501.5 324V360M505.5 217V246M509.5 324V361M514.5 216V250M518.5 324V361M523.5 214V247M527.5 324V360M532.5 216V246M536.5 324V367M540.5 217V249M545.5 324V360M545.5 300V338M549.5 214V248M553.5 324V367M558.5 216V246M562.5 324V358M566.5 215V247M571.5 324V361M575.5 214V250M575.5 238V266M579.5 324V359M584.5 214V249M588.5 324V360M593.5 215V249M597.5 324V360M601.5 214V250M606.5 324V359M610.5 216V250M614.5 324V367M619.5 215V249M623.5 324V367M628.5 215V249M632.5 324V367M636.5 214V248M641.5 324V367M645.5 215V248M649.5 324V360M654.5 215V247M658.5 324V360M663.5 214V247M667.5 324V360M671.5 214V246M675.5 324V367M680.5 214V249M684.5 324V360M689.5 215V249M693.5 324V358M697.5 217V249M702.5 324V367M706.5 215V248M710.5 324V367M710.5 294V338M715.5 216V250M715.5 238V257M719.5 324V360M724.5 217V246M728.5 324V360M732.5 215V248M737.5 324V362M741.5 216V250M745.5 324V360M750.5 214V248M754.5 324V359M759.5 215V250M763.5 324V361M767.5 215V247M772.5 324V367M776.5 214V248M781.5 324V358M785.5 215V247M789.5 324V360M794.5 214V246M794.5 238V260M798.5 324V360M802.5 215V246M807.5 324V360M811.5 214V249M815.5 324V361M820.5 214V246M824.5 324V360M829.5 215V249M833.5 324V358M837.5 215V249M842.5 324V367M842.5 316V338M846.5 217V250M851.5 324V360M851.5 312V338M855.5 214V248M859.5 324V361M863.5 214V248M868.5 324V358M872.5 215V249M877.5 324V360M881.5 216V246M885.5 324V359M890.5 216V250M894.5 324V358M898.5 215V246M903.5 324V360M907.5 214V250M912.5 324V359M912.5 301V338M916.5 215V250M920.5 324V367M920.5 298V338M925.5 215V246M929.5 324V360M933.5 214V249M938.5 324V361M942.5 214V250M947.5 324V367M951.5 217V246M955.5 324V367M960.5 214V246M964.5 324V361M968.5 217V247M973.5 324V367M977.5 214V249M981.5 324V361M986.5 215V246M990.5 324V360M994.5 214V247M999.5 324V367M1003.5 215V248M1008.5 324V367M1012.5 215V248M1016.5 324V367M1021.5 214V249M1025.5 324V361M1029.5 217V250M1034.5 324V360M1038.5 216V246M1043.5 324V360M1047.5 215V249M1051.5 324V367M1056.5 215V250M1060.5 324V360M1065.5 215V247M1069.5 324V360M1073.5 215V246M1078.5 324V367M1078.5 312V338M1082.5 217V247M1086.5 324V360M1086.5 305V338M1091.5 215V247M1095.5 324V359M1095.5 309V338M1099.5 215V246M1104.5 324V359M1108.5 214V249M1108.5 238V264M1113.5 324V367M1117.5 215V246M1122.5 324V358M1126.5 217V250M1130.5 324V367M1135.5 215V247M1139.5 324V367M1143.5 214V249M1147.5 324V360M1152.5 215V247M1156.5 324V360M1161.5 214V247M1165.5 324V367M1170.5 217V250M1174.5 324V359M1178.5 217V250M1178.5 238V264M1183.5 324V360M1187.5 214V248M1191.5 324V360M1196.5 216V250M1200.5 324V361M1204.5 215V250M1209.5 324V358M1213.5 216V250M1218.5 324V360M1222.5 215V250M1226.5 324V367M1230.5 214V249M1235.5 324V367M1240.5 214V250M1244.5 324V367M1248.5 214V246M1253.5 324V358M1257.5 215V247M1261.5 324V359M1266.5 215V248M1270.5 324V358M1275.5 214V247M1279.5 324V359M1283.5 217V247M1287.5 324V367M1287.5 293V338M1292.5 214V247M1296.5 324V367M1300.5 217V248M1305.5 324V359M1309.5 214V250M1314.5 324V367M1318.5 214V248M1322.5 324V359M1327.5 214V248M1331.5 324V362M1335.5 217V246M1340.5 324V367M1344.5 217V247M1349.5 324V367M1353.5 217V250M1357.5 324V358M1362.5 214V246M1366.5 324V358M1371.5 214V248M1375.5 324V360M1379.5 215V250M1384.5 324V360M1388.5 215V248M1392.5 324V362M1397.5 216V248M1401.5 324V367M1405.5 214V249M1405.5 238V258M1410.5 324V360M1414.5 215V248M1419.5 324V361M1423.5 215V249M1423.5 238V259M1427.5 324V360M1432.5 216V250M1436.5 324V367M1440.5 216V248M1445.5 324V361M1449.5 214V249M1454.5 324V367M1458.5 214V250M1462.5 324V358M1462.5 309V338M1467.5 216V247M1471.5 324V361M1475.5 214V250M1480.5 324V362M1480.5 316V338M1484.5 214V248M1489.5 324V367M1493.5 215V250M1497.5 324V360M1502.5 215V247M1506.5 324V358M1511.5 214V247M1515.5 324V361M1519.5 214V250M1523.5 324V367M1528.5 214V246M1532.5 324V358M1537.5 216V250M1541.5 324V367M1545.5 215V250M1550.5 324V359M1554.5 215V249M1559.5 324V360M1563.5 215V248M1567.5 324V361M1572.5 215V247M1576.5 324V360M1581.5 215V246M1585.5 324V360M1589.5 216V248M1593.5 324V362M1593.5 311V338M1598.5 214V248M1602.5 324V360M1607.5 214V248M1611.5 324V361M1615.5 217V247M1620.5 324V367M1624.5 215V249M1628.5 324V367M1633.5 215V247M1637.5 324V360M1637.5 310V338M1641.5 214V248M1646.5 324V367M1650.5 216V248M1654.5 324V367M1659.5 216V246M1659.5 238V262M1663.5 324V359M1668.5 214V248M1672.5 324V361M1676.5 215V246M1681.5 324V361M1685.5 215V248M1690.5 324V360M1694.5 215V249M1698.5 324V360M1703.5 214V250M1707.5 324V362M1711.5 215V246M1716.5 324V360M1720.5 214V247M1724.5 324V360M1729.5 214V249M1733.5 324V367M1738.5 217V247M1742.5 324V360M1746.5 214V249" stroke="#eadc10" stroke-width="1" fill="none"/>
<path d="M3 236L5.5 236.2L8 236L10.5 235.8L13 236L15.5 235.8L18 235.8L20.5 236.1L23 236.2L25.5 236L28 235.8L30.5 236L33 235.8L35.5 235.8L38 235.9L40.5 236L43 236L45.5 236L48 236.2L50.5 236.1L53 235.9L55.5 235.9L58 236.1L60.5 236.1L63 236.2L65.5 235.8L68 236.2L70.5 236.2L73 235.8L75.5 236.1L78 235.8L80.5 236.2L83 235.8L85.5 235.8L88 236.1L90.5 236L93 235.8L95.5 235.8L98 235.8L100.5 235.8L103 236.2L105.5 235.9L108 235.8L110.5 236.1L113 235.8L115.5 235.8L118 236.1L120.5 235.9L123 235.8L125.4 236L125.4 240.8L123 240.9L120.5 240.6L118 240.7L115.5 240.7L113 241L110.5 240.9L108 240.8L105.5 241L103 241L100.5 240.7L98 240.8L95.5 240.9L93 240.9L90.5 240.8L88 240.7L85.5 240.6L83 240.7L80.5 240.9L78 240.7L75.5 240.7L73 240.9L70.5 240.8L68 240.8L65.5 240.7L63 241L60.5 240.8L58 240.8L55.5 240.6L53 240.7L50.5 240.9L48 241L45.5 240.7L43 240.9L40.5 240.9L38 241L35.5 240.8L33 240.7L30.5 240.6L28 240.6L25.5 240.9L23 241L20.5 240.6L18 241L15.5 240.7L13 241L10.5 240.8L8 240.9L5.5 240.8L3 240.9zM38 236L39.5 233.5L41 236zM124.9 333.4L126.1 334.9L127.3 335.6L129.8 335.6L129.8 341.4L127.3 341.4L126.1 342.6L124.9 343.6zM129.4 233.6L130.6 235.1L131.8 236.1L134.1 236.1L134.1 240.9L131.8 240.9L130.6 242.4L129.4 243.4zM133.7 333.4L134.9 334.9L136.1 335.6L138.6 335.6L138.6 341.4L136.1 341.4L134.9 342.6L133.7 343.6zM138.2 233.6L139.4 235.1L140.6 236.1L142.8 236.1L142.8 240.9L140.6 240.9L139.4 242.4L138.2 243.4zM142.3 333.4L143.5 334.9L144.7 335.6L147.1 335.6L147.1 341.4L144.7 341.4L143.5 342.6L142.3 343.6zM146.7 233.6L147.9 235.1L149.1 236.1L151.6 236.1L151.6 240.9L149.1 240.9L147.9 242.4L146.7 243.4zM151.2 333.4L152.4 334.9L153.6 335.6L155.8 335.6L155.8 341.4L153.6 341.4L152.4 342.6L151.2 343.6zM155.4 233.6L156.6 235.1L157.8 236.1L160.3 236.1L160.3 240.9L157.8 240.9L156.6 242.4L155.4 243.4zM159.9 333.4L161.1 334.9L162.3 335.6L164.7 335.6L164.7 341.4L162.3 341.4L161.1 342.6L159.9 343.6zM164.3 233.6L165.5 235.1L166.7 236.1L169.1 236.1L169.1 240.9L166.7 240.9L165.5 242.4L164.3 243.4zM168.7 333.4L169.9 334.9L171.1 335.6L173.5 335.6L173.5 341.4L171.1 341.4L169.9 342.6L168.7 343.6zM173.1 233.6L174.3 235.1L175.5 236.1L177.8 236.1L177.8 240.9L175.5 240.9L174.3 242.4L173.1 243.4zM177.3 333.4L178.5 334.9L179.7 335.6L182 335.6L182 341.4L179.7 341.4L178.5 342.6L177.3 343.6zM181.6 233.6L182.8 235.1L184 236.1L186.6 236.1L186.6 240.9L184 240.9L182.8 242.4L181.6 243.4zM186.1 333.4L187.3 334.9L188.5 335.6L191 335.6L191 341.4L188.5 341.4L187.3 342.6L186.1 343.6zM190.6 233.6L191.8 235.1L193 236.1L195.3 236.1L195.3 240.9L193 240.9L191.8 242.4L190.6 243.4zM195 333.4L196.2 334.9L197.4 335.6L199.7 335.6L199.7 341.4L197.4 341.4L196.2 342.6L195 343.6zM199.3 233.6L200.5 235.1L201.7 236.1L204 236.1L204 240.9L201.7 240.9L200.5 242.4L199.3 243.4zM203.7 333.4L204.9 334.9L206.1 335.6L208.6 335.6L208.6 341.4L206.1 341.4L204.9 342.6L203.7 343.6zM208.2 233.6L209.4 235.1L210.6 236.1L212.8 236.1L212.8 240.9L210.6 240.9L209.4 242.4L208.2 243.4zM212.3 333.4L213.5 334.9L214.7 335.6L217.3 335.6L217.3 341.4L214.7 341.4L213.5 342.6L212.3 343.6zM216.9 233.6L218.1 235.1L219.3 236.1L221.5 236.1L221.5 240.9L219.3 240.9L218.1 242.4L216.9 243.4zM221.2 333.4L222.4 334.9L223.6 335.6L226 335.6L226 341.4L223.6 341.4L222.4 342.6L221.2 343.6zM225.6 233.6L226.8 235.1L228 236.1L230.3 236.1L230.3 240.9L228 240.9L226.8 242.4L225.6 243.4zM229.8 333.4L231 334.9L232.2 335.6L234.7 335.6L234.7 341.4L232.2 341.4L231 342.6L229.8 343.6zM234.3 233.6L235.5 235.1L236.7 236.1L239 236.1L239 240.9L236.7 240.9L235.5 242.4L234.3 243.4zM238.6 333.4L239.8 334.9L241 335.6L243.2 335.6L243.2 341.4L241 341.4L239.8 342.6L238.6 343.6zM242.8 233.6L244 235.1L245.2 236.1L247.7 236.1L247.7 240.9L245.2 240.9L244 242.4L242.8 243.4zM247.4 333.4L248.6 334.9L249.8 335.6L252.1 335.6L252.1 341.4L249.8 341.4L248.6 342.6L247.4 343.6zM251.7 233.6L252.9 235.1L254.1 236.1L256.5 236.1L256.5 240.9L254.1 240.9L252.9 242.4L251.7 243.4zM255.9 333.4L257.1 334.9L258.3 335.6L260.9 335.6L260.9 341.4L258.3 341.4L257.1 342.6L255.9 343.6zM260.5 233.6L261.7 235.1L262.9 236.1L265.2 236.1L265.2 240.9L262.9 240.9L261.7 242.4L260.5 243.4zM264.9 333.4L266.1 334.9L267.3 335.6L269.6 335.6L269.6 341.4L267.3 341.4L266.1 342.6L264.9 343.6zM269.2 233.6L270.4 235.1L271.6 236.1L274 236.1L274 240.9L271.6 240.9L270.4 242.4L269.2 243.4zM273.4 333.4L274.6 334.9L275.8 335.6L278.5 335.6L278.5 341.4L275.8 341.4L274.6 342.6L273.4 343.6zM278.1 233.6L279.3 235.1L280.5 236.1L282.7 236.1L282.7 240.9L280.5 240.9L279.3 242.4L278.1 243.4zM282.2 333.4L283.4 334.9L284.6 335.6L287.1 335.6L287.1 341.4L284.6 341.4L283.4 342.6L282.2 343.6zM286.7 233.6L287.9 235.1L289.1 236.1L291.4 236.1L291.4 240.9L289.1 240.9L287.9 242.4L286.7 243.4zM291 333.4L292.2 334.9L293.4 335.6L295.7 335.6L295.7 341.4L293.4 341.4L292.2 342.6L291 343.6zM295.3 233.6L296.5 235.1L297.7 236.1L300.2 236.1L300.2 240.9L297.7 240.9L296.5 242.4L295.3 243.4zM299.7 333.4L300.9 334.9L302.1 335.6L304.4 335.6L304.4 341.4L302.1 341.4L300.9 342.6L299.7 343.6zM304 233.6L305.2 235.1L306.4 236.1L308.9 236.1L308.9 240.9L306.4 240.9L305.2 242.4L304 243.4zM308.5 333.4L309.7 334.9L310.9 335.6L313.4 335.6L313.4 341.4L310.9 341.4L309.7 342.6L308.5 343.6zM313 233.6L314.2 235.1L315.4 236.1L317.7 236.1L317.7 240.9L315.4 240.9L314.2 242.4L313 243.4zM317.3 333.4L318.5 334.9L319.7 335.6L322.1 335.6L322.1 341.4L319.7 341.4L318.5 342.6L317.3 343.6zM321.7 233.6L322.9 235.1L324.1 236.1L326.4 236.1L326.4 240.9L324.1 240.9L322.9 242.4L321.7 243.4zM326 333.4L327.2 334.9L328.4 335.6L330.7 335.6L330.7 341.4L328.4 341.4L327.2 342.6L326 343.6zM330.3 233.6L331.5 235.1L332.7 236.1L335.2 236.1L335.2 240.9L332.7 240.9L331.5 242.4L330.3 243.4zM334.6 333.4L335.8 334.9L337 335.6L339.4 335.6L339.4 341.4L337 341.4L335.8 342.6L334.6 343.6zM339 233.6L340.2 235.1L341.4 236.1L343.9 236.1L343.9 240.9L341.4 240.9L340.2 242.4L339 243.4zM343.4 333.4L344.6 334.9L345.8 335.6L348.3 335.6L348.3 341.4L345.8 341.4L344.6 342.6L343.4 343.6zM347.9 233.6L349.1 235.1L350.3 236.1L352.6 236.1L352.6 240.9L350.3 240.9L349.1 242.4L347.9 243.4zM352.1 333.4L353.3 334.9L354.5 335.6L356.9 335.6L356.9 341.4L354.5 341.4L353.3 342.6L352.1 343.6zM356.5 233.6L357.7 235.1L358.9 236.1L361.4 236.1L361.4 240.9L358.9 240.9L357.7 242.4L356.5 243.4zM361.1 333.4L362.3 334.9L363.5 335.6L365.6 335.6L365.6 341.4L363.5 341.4L362.3 342.6L361.1 343.6zM365.2 233.6L366.4 235.1L367.6 236.1L370.1 236.1L370.1 240.9L367.6 240.9L366.4 242.4L365.2 243.4zM369.6 333.4L370.8 334.9L372 335.6L374.6 335.6L374.6 341.4L372 341.4L370.8 342.6L369.6 343.6zM374.2 233.6L375.4 235.1L376.6 236.1L378.9 236.1L378.9 240.9L376.6 240.9L375.4 242.4L374.2 243.4zM378.7 333.4L379.9 334.9L381.1 335.6L383.1 335.6L383.1 341.4L381.1 341.4L379.9 342.6L378.7 343.6zM382.7 233.6L383.9 235.1L385.1 236.1L387.6 236.1L387.6 240.9L385.1 240.9L383.9 242.4L382.7 243.4zM387.2 333.4L388.4 334.9L389.6 335.6L392.1 335.6L392.1 341.4L389.6 341.4L388.4 342.6L387.2 343.6zM391.7 233.6L392.9 235.1L394.1 236.1L396.3 236.1L396.3 240.9L394.1 240.9L392.9 242.4L391.7 243.4zM395.8 333.4L397 334.9L398.2 335.6L400.7 335.6L400.7 341.4L398.2 341.4L397 342.6L395.8 343.6zM400.3 233.6L401.5 235.1L402.7 236.1L405.1 236.1L405.1 240.9L402.7 240.9L401.5 242.4L400.3 243.4zM404.8 333.4L406 334.9L407.2 335.6L409.4 335.6L409.4 341.4L407.2 341.4L406 342.6L404.8 343.6zM409 233.6L410.2 235.1L411.4 236.1L413.8 236.1L413.8 240.9L411.4 240.9L410.2 242.4L409 243.4zM413.6 333.4L414.8 334.9L416 335.6L418.4 335.6L418.4 341.4L416 341.4L414.8 342.6L413.6 343.6zM418 233.6L419.2 235.1L420.4 236.1L422.6 236.1L422.6 240.9L420.4 240.9L419.2 242.4L418 243.4zM422.2 333.4L423.4 334.9L424.6 335.6L427 335.6L427 341.4L424.6 341.4L423.4 342.6L422.2 343.6zM426.6 233.6L427.8 235.1L429 236.1L431.3 236.1L431.3 240.9L429 240.9L427.8 242.4L426.6 243.4zM430.9 333.4L432.1 334.9L433.3 335.6L435.8 335.6L435.8 341.4L433.3 341.4L432.1 342.6L430.9 343.6zM435.4 233.6L436.6 235.1L437.8 236.1L440.1 236.1L440.1 240.9L437.8 240.9L436.6 242.4L435.4 243.4zM439.8 333.4L441 334.9L442.2 335.6L444.6 335.6L444.6 341.4L442.2 341.4L441 342.6L439.8 343.6zM444.2 233.6L445.4 235.1L446.6 236.1L448.8 236.1L448.8 240.9L446.6 240.9L445.4 242.4L444.2 243.4zM448.2 333.4L449.4 334.9L450.6 335.6L453 335.6L453 341.4L450.6 341.4L449.4 342.6L448.2 343.6zM452.6 233.6L453.8 235.1L455 236.1L457.5 236.1L457.5 240.9L455 240.9L453.8 242.4L452.6 243.4zM457.2 333.4L458.4 334.9L459.6 335.6L461.9 335.6L461.9 341.4L459.6 341.4L458.4 342.6L457.2 343.6zM461.5 233.6L462.7 235.1L463.9 236.1L466.3 236.1L466.3 240.9L463.9 240.9L462.7 242.4L461.5 243.4zM466 333.4L467.2 334.9L468.4 335.6L470.6 335.6L470.6 341.4L468.4 341.4L467.2 342.6L466 343.6zM470.2 233.6L471.4 235.1L472.6 236.1L475 236.1L475 240.9L472.6 240.9L471.4 242.4L470.2 243.4zM474.7 333.4L475.9 334.9L477.1 335.6L479.6 335.6L479.6 341.4L477.1 341.4L475.9 342.6L474.7 343.6zM479.2 233.6L480.4 235.1L481.6 236.1L483.8 236.1L483.8 240.9L481.6 240.9L480.4 242.4L479.2 243.4zM483.2 333.4L484.4 334.9L485.6 335.6L488 335.6L488 341.4L485.6 341.4L484.4 342.6L483.2 343.6zM487.6 233.6L488.8 235.1L490 236.1L492.5 236.1L492.5 240.9L490 240.9L488.8 242.4L487.6 243.4zM492 333.4L493.2 334.9L494.4 335.6L496.8 335.6L496.8 341.4L494.4 341.4L493.2 342.6L492 343.6zM496.4 233.6L497.6 235.1L498.8 236.1L501.2 236.1L501.2 240.9L498.8 240.9L497.6 242.4L496.4 243.4zM500.8 333.4L502 334.9L503.2 335.6L505.5 335.6L505.5 341.4L503.2 341.4L502 342.6L500.8 343.6zM505.1 233.6L506.3 235.1L507.5 236.1L510 236.1L510 240.9L507.5 240.9L506.3 242.4L505.1 243.4zM509.6 333.4L510.8 334.9L512 335.6L514.4 335.6L514.4 341.4L512 341.4L510.8 342.6L509.6 343.6zM514 233.6L515.2 235.1L516.4 236.1L518.7 236.1L518.7 240.9L516.4 240.9L515.2 242.4L514 243.4zM518.3 333.4L519.5 334.9L520.7 335.6L523.1 335.6L523.1 341.4L520.7 341.4L519.5 342.6L518.3 343.6zM522.7 233.6L523.9 235.1L525.1 236.1L527.5 236.1L527.5 240.9L525.1 240.9L523.9 242.4L522.7 243.4zM527 333.4L528.2 334.9L529.4 335.6L532 335.6L532 341.4L529.4 341.4L528.2 342.6L527 343.6zM531.6 233.6L532.8 235.1L534 236.1L536.2 236.1L536.2 240.9L534 240.9L532.8 242.4L531.6 243.4zM535.7 333.4L536.9 334.9L538.1 335.6L540.7 335.6L540.7 341.4L538.1 341.4L536.9 342.6L535.7 343.6zM540.3 233.6L541.5 235.1L542.7 236.1L545 236.1L545 240.9L542.7 240.9L541.5 242.4L540.3 243.4zM544.6 333.4L545.8 334.9L547 335.6L549.2 335.6L549.2 341.4L547 341.4L545.8 342.6L544.6 343.6zM548.8 233.6L550 235.1L551.2 236.1L553.7 236.1L553.7 240.9L551.2 240.9L550 242.4L548.8 243.4zM553.3 333.4L554.5 334.9L555.7 335.6L558.2 335.6L558.2 341.4L555.7 341.4L554.5 342.6L553.3 343.6zM557.8 233.6L559 235.1L560.2 236.1L562.4 236.1L562.4 240.9L560.2 240.9L559 242.4L557.8 243.4zM561.8 333.4L563 334.9L564.2 335.6L566.9 335.6L566.9 341.4L564.2 341.4L563 342.6L561.8 343.6zM566.5 233.6L567.7 235.1L568.9 236.1L571.2 236.1L571.2 240.9L568.9 240.9L567.7 242.4L566.5 243.4zM570.6 333.4L571.8 334.9L573 335.6L575.4 335.6L575.4 341.4L573 341.4L571.8 342.6L570.6 343.6zM575 233.6L576.2 235.1L577.4 236.1L579.9 236.1L579.9 240.9L577.4 240.9L576.2 242.4L575 243.4zM579.3 333.4L580.5 334.9L581.7 335.6L584.1 335.6L584.1 341.4L581.7 341.4L580.5 342.6L579.3 343.6zM583.7 233.6L584.9 235.1L586.1 236.1L588.7 236.1L588.7 240.9L586.1 240.9L584.9 242.4L583.7 243.4zM588.2 333.4L589.4 334.9L590.6 335.6L593.1 335.6L593.1 341.4L590.6 341.4L589.4 342.6L588.2 343.6zM592.7 233.6L593.9 235.1L595.1 236.1L597.4 236.1L597.4 240.9L595.1 240.9L593.9 242.4L592.7 243.4zM597.1 333.4L598.3 334.9L599.5 335.6L601.7 335.6L601.7 341.4L599.5 341.4L598.3 342.6L597.1 343.6zM601.3 233.6L602.5 235.1L603.7 236.1L606.1 236.1L606.1 240.9L603.7 240.9L602.5 242.4L601.3 243.4zM605.7 333.4L606.9 334.9L608.1 335.6L610.3 335.6L610.3 341.4L608.1 341.4L606.9 342.6L605.7 343.6zM609.9 233.6L611.1 235.1L612.3 236.1L614.9 236.1L614.9 240.9L612.3 240.9L611.1 242.4L609.9 243.4zM614.4 333.4L615.6 334.9L616.8 335.6L619.4 335.6L619.4 341.4L616.8 341.4L615.6 342.6L614.4 343.6zM619 233.6L620.2 235.1L621.4 236.1L623.6 236.1L623.6 240.9L621.4 240.9L620.2 242.4L619 243.4zM623.2 333.4L624.4 334.9L625.6 335.6L628 335.6L628 341.4L625.6 341.4L624.4 342.6L623.2 343.6zM627.6 233.6L628.8 235.1L630 236.1L632.4 236.1L632.4 240.9L630 240.9L628.8 242.4L627.6 243.4zM631.8 333.4L633 334.9L634.2 335.6L636.9 335.6L636.9 341.4L634.2 341.4L633 342.6L631.8 343.6zM636.5 233.6L637.7 235.1L638.9 236.1L641.1 236.1L641.1 240.9L638.9 240.9L637.7 242.4L636.5 243.4zM640.9 333.4L642.1 334.9L643.3 335.6L645.3 335.6L645.3 341.4L643.3 341.4L642.1 342.6L640.9 343.6zM644.9 233.6L646.1 235.1L647.3 236.1L649.8 236.1L649.8 240.9L647.3 240.9L646.1 242.4L644.9 243.4zM649.4 333.4L650.6 334.9L651.8 335.6L654.1 335.6L654.1 341.4L651.8 341.4L650.6 342.6L649.4 343.6zM653.7 233.6L654.9 235.1L656.1 236.1L658.6 236.1L658.6 240.9L656.1 240.9L654.9 242.4L653.7 243.4zM658.3 333.4L659.5 334.9L660.7 335.6L663.2 335.6L663.2 341.4L660.7 341.4L659.5 342.6L658.3 343.6zM662.8 233.6L664 235.1L665.2 236.1L667.3 236.1L667.3 240.9L665.2 240.9L664 242.4L662.8 243.4zM666.9 333.4L668.1 334.9L669.3 335.6L671.5 335.6L671.5 341.4L669.3 341.4L668.1 342.6L666.9 343.6zM671.1 233.6L672.3 235.1L673.5 236.1L676.1 236.1L676.1 240.9L673.5 240.9L672.3 242.4L671.1 243.4zM675.6 333.4L676.8 334.9L678 335.6L680.4 335.6L680.4 341.4L678 341.4L676.8 342.6L675.6 343.6zM680 233.6L681.2 235.1L682.4 236.1L684.8 236.1L684.8 240.9L682.4 240.9L681.2 242.4L680 243.4zM684.2 333.4L685.4 334.9L686.6 335.6L689.2 335.6L689.2 341.4L686.6 341.4L685.4 342.6L684.2 343.6zM688.8 233.6L690 235.1L691.2 236.1L693.6 236.1L693.6 240.9L691.2 240.9L690 242.4L688.8 243.4zM693 333.4L694.2 334.9L695.4 335.6L697.9 335.6L697.9 341.4L695.4 341.4L694.2 342.6L693 343.6zM697.5 233.6L698.7 235.1L699.9 236.1L702.3 236.1L702.3 240.9L699.9 240.9L698.7 242.4L697.5 243.4zM701.9 333.4L703.1 334.9L704.3 335.6L706.7 335.6L706.7 341.4L704.3 341.4L703.1 342.6L701.9 343.6zM706.3 233.6L707.5 235.1L708.7 236.1L711 236.1L711 240.9L708.7 240.9L707.5 242.4L706.3 243.4zM710.6 333.4L711.8 334.9L713 335.6L715.5 335.6L715.5 341.4L713 341.4L711.8 342.6L710.6 343.6zM715.1 233.6L716.3 235.1L717.5 236.1L719.8 236.1L719.8 240.9L717.5 240.9L716.3 242.4L715.1 243.4zM719.3 333.4L720.5 334.9L721.7 335.6L724.2 335.6L724.2 341.4L721.7 341.4L720.5 342.6L719.3 343.6zM723.8 233.6L725 235.1L726.2 236.1L728.5 236.1L728.5 240.9L726.2 240.9L725 242.4L723.8 243.4zM728.2 333.4L729.4 334.9L730.6 335.6L732.8 335.6L732.8 341.4L730.6 341.4L729.4 342.6L728.2 343.6zM732.4 233.6L733.6 235.1L734.8 236.1L737.3 236.1L737.3 240.9L734.8 240.9L733.6 242.4L732.4 243.4zM736.8 333.4L738 334.9L739.2 335.6L741.6 335.6L741.6 341.4L739.2 341.4L738 342.6L736.8 343.6zM741.2 233.6L742.4 235.1L743.6 236.1L746 236.1L746 240.9L743.6 240.9L742.4 242.4L741.2 243.4zM745.4 333.4L746.6 334.9L747.8 335.6L750.3 335.6L750.3 341.4L747.8 341.4L746.6 342.6L745.4 343.6zM749.9 233.6L751.1 235.1L752.3 236.1L754.7 236.1L754.7 240.9L752.3 240.9L751.1 242.4L749.9 243.4zM754.2 333.4L755.4 334.9L756.6 335.6L759.1 335.6L759.1 341.4L756.6 341.4L755.4 342.6L754.2 343.6zM758.7 233.6L759.9 235.1L761.1 236.1L763.5 236.1L763.5 240.9L761.1 240.9L759.9 242.4L758.7 243.4zM763 333.4L764.2 334.9L765.4 335.6L768 335.6L768 341.4L765.4 341.4L764.2 342.6L763 343.6zM767.6 233.6L768.8 235.1L770 236.1L772.2 236.1L772.2 240.9L770 240.9L768.8 242.4L767.6 243.4zM771.8 333.4L773 334.9L774.2 335.6L776.5 335.6L776.5 341.4L774.2 341.4L773 342.6L771.8 343.6zM776.1 233.6L777.3 235.1L778.5 236.1L781 236.1L781 240.9L778.5 240.9L777.3 242.4L776.1 243.4zM780.6 333.4L781.8 334.9L783 335.6L785.4 335.6L785.4 341.4L783 341.4L781.8 342.6L780.6 343.6zM785 233.6L786.2 235.1L787.4 236.1L789.7 236.1L789.7 240.9L787.4 240.9L786.2 242.4L785 243.4zM789.2 333.4L790.4 334.9L791.6 335.6L794.3 335.6L794.3 341.4L791.6 341.4L790.4 342.6L789.2 343.6zM793.9 233.6L795.1 235.1L796.3 236.1L798.5 236.1L798.5 240.9L796.3 240.9L795.1 242.4L793.9 243.4zM798 333.4L799.2 334.9L800.4 335.6L802.9 335.6L802.9 341.4L800.4 341.4L799.2 342.6L798 343.6zM802.5 233.6L803.7 235.1L804.9 236.1L807.2 236.1L807.2 240.9L804.9 240.9L803.7 242.4L802.5 243.4zM807 333.4L808.2 334.9L809.4 335.6L811.4 335.6L811.4 341.4L809.4 341.4L808.2 342.6L807 343.6zM811 233.6L812.2 235.1L813.4 236.1L815.9 236.1L815.9 240.9L813.4 240.9L812.2 242.4L811 243.4zM815.4 333.4L816.6 334.9L817.8 335.6L820.2 335.6L820.2 341.4L817.8 341.4L816.6 342.6L815.4 343.6zM819.8 233.6L821 235.1L822.2 236.1L824.7 236.1L824.7 240.9L822.2 240.9L821 242.4L819.8 243.4zM824.4 333.4L825.6 334.9L826.8 335.6L829.2 335.6L829.2 341.4L826.8 341.4L825.6 342.6L824.4 343.6zM828.8 233.6L830 235.1L831.2 236.1L833.4 236.1L833.4 240.9L831.2 240.9L830 242.4L828.8 243.4zM833 333.4L834.2 334.9L835.4 335.6L837.9 335.6L837.9 341.4L835.4 341.4L834.2 342.6L833 343.6zM837.5 233.6L838.7 235.1L839.9 236.1L842.2 236.1L842.2 240.9L839.9 240.9L838.7 242.4L837.5 243.4zM841.8 333.4L843 334.9L844.2 335.6L846.5 335.6L846.5 341.4L844.2 341.4L843 342.6L841.8 343.6zM846.1 233.6L847.3 235.1L848.5 236.1L850.9 236.1L850.9 240.9L848.5 240.9L847.3 242.4L846.1 243.4zM850.6 333.4L851.8 334.9L853 335.6L855.3 335.6L855.3 341.4L853 341.4L851.8 342.6L850.6 343.6zM854.9 233.6L856.1 235.1L857.3 236.1L859.6 236.1L859.6 240.9L857.3 240.9L856.1 242.4L854.9 243.4zM859.4 333.4L860.6 334.9L861.8 335.6L863.9 335.6L863.9 341.4L861.8 341.4L860.6 342.6L859.4 343.6zM863.5 233.6L864.7 235.1L865.9 236.1L868.4 236.1L868.4 240.9L865.9 240.9L864.7 242.4L863.5 243.4zM867.9 333.4L869.1 334.9L870.3 335.6L872.7 335.6L872.7 341.4L870.3 341.4L869.1 342.6L867.9 343.6zM872.3 233.6L873.5 235.1L874.7 236.1L877.1 236.1L877.1 240.9L874.7 240.9L873.5 242.4L872.3 243.4zM876.9 333.4L878.1 334.9L879.3 335.6L881.5 335.6L881.5 341.4L879.3 341.4L878.1 342.6L876.9 343.6zM881.1 233.6L882.3 235.1L883.5 236.1L885.9 236.1L885.9 240.9L883.5 240.9L882.3 242.4L881.1 243.4zM885.4 333.4L886.6 334.9L887.8 335.6L890.2 335.6L890.2 341.4L887.8 341.4L886.6 342.6L885.4 343.6zM889.8 233.6L891 235.1L892.2 236.1L894.6 236.1L894.6 240.9L892.2 240.9L891 242.4L889.8 243.4zM894.2 333.4L895.4 334.9L896.6 335.6L898.8 335.6L898.8 341.4L896.6 341.4L895.4 342.6L894.2 343.6zM898.4 233.6L899.6 235.1L900.8 236.1L903.4 236.1L903.4 240.9L900.8 240.9L899.6 242.4L898.4 243.4zM903.1 333.4L904.3 334.9L905.5 335.6L907.6 335.6L907.6 341.4L905.5 341.4L904.3 342.6L903.1 343.6zM907.2 233.6L908.4 235.1L909.6 236.1L912.1 236.1L912.1 240.9L909.6 240.9L908.4 242.4L907.2 243.4zM911.6 333.4L912.8 334.9L914 335.6L916.3 335.6L916.3 341.4L914 341.4L912.8 342.6L911.6 343.6zM915.9 233.6L917.1 235.1L918.3 236.1L920.8 236.1L920.8 240.9L918.3 240.9L917.1 242.4L915.9 243.4zM920.3 333.4L921.5 334.9L922.7 335.6L925.3 335.6L925.3 341.4L922.7 341.4L921.5 342.6L920.3 343.6zM924.9 233.6L926.1 235.1L927.3 236.1L929.6 236.1L929.6 240.9L927.3 240.9L926.1 242.4L924.9 243.4zM929.2 333.4L930.4 334.9L931.6 335.6L933.8 335.6L933.8 341.4L931.6 341.4L930.4 342.6L929.2 343.6zM933.4 233.6L934.6 235.1L935.8 236.1L938.3 236.1L938.3 240.9L935.8 240.9L934.6 242.4L933.4 243.4zM937.9 333.4L939.1 334.9L940.3 335.6L942.9 335.6L942.9 341.4L940.3 341.4L939.1 342.6L937.9 343.6zM942.5 233.6L943.7 235.1L944.9 236.1L947.1 236.1L947.1 240.9L944.9 240.9L943.7 242.4L942.5 243.4zM946.6 333.4L947.8 334.9L949 335.6L951.6 335.6L951.6 341.4L949 341.4L947.8 342.6L946.6 343.6zM951.2 233.6L952.4 235.1L953.6 236.1L955.8 236.1L955.8 240.9L953.6 240.9L952.4 242.4L951.2 243.4zM955.6 333.4L956.8 334.9L958 335.6L960.2 335.6L960.2 341.4L958 341.4L956.8 342.6L955.6 343.6zM959.8 233.6L961 235.1L962.2 236.1L964.5 236.1L964.5 240.9L962.2 240.9L961 242.4L959.8 243.4zM964.1 333.4L965.3 334.9L966.5 335.6L968.8 335.6L968.8 341.4L966.5 341.4L965.3 342.6L964.1 343.6zM968.4 233.6L969.6 235.1L970.8 236.1L973.3 236.1L973.3 240.9L970.8 240.9L969.6 242.4L968.4 243.4zM972.8 333.4L974 334.9L975.2 335.6L977.7 335.6L977.7 341.4L975.2 341.4L974 342.6L972.8 343.6zM977.3 233.6L978.5 235.1L979.7 236.1L982 236.1L982 240.9L979.7 240.9L978.5 242.4L977.3 243.4zM981.5 333.4L982.7 334.9L983.9 335.6L986.5 335.6L986.5 341.4L983.9 341.4L982.7 342.6L981.5 343.6zM986.1 233.6L987.3 235.1L988.5 236.1L990.8 236.1L990.8 240.9L988.5 240.9L987.3 242.4L986.1 243.4zM990.5 333.4L991.7 334.9L992.9 335.6L995 335.6L995 341.4L992.9 341.4L991.7 342.6L990.5 343.6zM994.6 233.6L995.8 235.1L997 236.1L999.5 236.1L999.5 240.9L997 240.9L995.8 242.4L994.6 243.4zM999.2 333.4L1000.4 334.9L1001.6 335.6L1003.9 335.6L1003.9 341.4L1001.6 341.4L1000.4 342.6L999.2 343.6zM1003.5 233.6L1004.7 235.1L1005.9 236.1L1008.3 236.1L1008.3 240.9L1005.9 240.9L1004.7 242.4L1003.5 243.4zM1008 333.4L1009.2 334.9L1010.4 335.6L1012.8 335.6L1012.8 341.4L1010.4 341.4L1009.2 342.6L1008 343.6zM1012.4 233.6L1013.6 235.1L1014.8 236.1L1017 236.1L1017 240.9L1014.8 240.9L1013.6 242.4L1012.4 243.4zM1016.6 333.4L1017.8 334.9L1019 335.6L1021.5 335.6L1021.5 341.4L1019 341.4L1017.8 342.6L1016.6 343.6zM1021.1 233.6L1022.3 235.1L1023.5 236.1L1025.7 236.1L1025.7 240.9L1023.5 240.9L1022.3 242.4L1021.1 243.4zM1025.3 333.4L1026.5 334.9L1027.7 335.6L1030 335.6L1030 341.4L1027.7 341.4L1026.5 342.6L1025.3 343.6zM1029.6 233.6L1030.8 235.1L1032 236.1L1034.5 236.1L1034.5 240.9L1032 240.9L1030.8 242.4L1029.6 243.4zM1034.2 333.4L1035.4 334.9L1036.6 335.6L1039 335.6L1039 341.4L1036.6 341.4L1035.4 342.6L1034.2 343.6zM1038.6 233.6L1039.8 235.1L1041 236.1L1043.2 236.1L1043.2 240.9L1041 240.9L1039.8 242.4L1038.6 243.4zM1043 333.4L1044.2 334.9L1045.4 335.6L1047.6 335.6L1047.6 341.4L1045.4 341.4L1044.2 342.6L1043 343.6zM1047.2 233.6L1048.4 235.1L1049.6 236.1L1052 236.1L1052 240.9L1049.6 240.9L1048.4 242.4L1047.2 243.4zM1051.5 333.4L1052.7 334.9L1053.9 335.6L1056.2 335.6L1056.2 341.4L1053.9 341.4L1052.7 342.6L1051.5 343.6zM1055.8 233.6L1057 235.1L1058.2 236.1L1060.7 236.1L1060.7 240.9L1058.2 240.9L1057 242.4L1055.8 243.4zM1060.2 333.4L1061.4 334.9L1062.6 335.6L1065.2 335.6L1065.2 341.4L1062.6 341.4L1061.4 342.6L1060.2 343.6zM1064.8 233.6L1066 235.1L1067.2 236.1L1069.4 236.1L1069.4 240.9L1067.2 240.9L1066 242.4L1064.8 243.4zM1068.9 333.4L1070.1 334.9L1071.3 335.6L1073.9 335.6L1073.9 341.4L1071.3 341.4L1070.1 342.6L1068.9 343.6zM1073.5 233.6L1074.7 235.1L1075.9 236.1L1078.2 236.1L1078.2 240.9L1075.9 240.9L1074.7 242.4L1073.5 243.4zM1077.8 333.4L1079 334.9L1080.2 335.6L1082.7 335.6L1082.7 341.4L1080.2 341.4L1079 342.6L1077.8 343.6zM1082.3 233.6L1083.5 235.1L1084.7 236.1L1086.9 236.1L1086.9 240.9L1084.7 240.9L1083.5 242.4L1082.3 243.4zM1086.4 333.4L1087.6 334.9L1088.8 335.6L1091.4 335.6L1091.4 341.4L1088.8 341.4L1087.6 342.6L1086.4 343.6zM1091 233.6L1092.2 235.1L1093.4 236.1L1095.7 236.1L1095.7 240.9L1093.4 240.9L1092.2 242.4L1091 243.4zM1095.5 333.4L1096.7 334.9L1097.9 335.6L1100 335.6L1100 341.4L1097.9 341.4L1096.7 342.6L1095.5 343.6zM1099.6 233.6L1100.8 235.1L1102 236.1L1104.4 236.1L1104.4 240.9L1102 240.9L1100.8 242.4L1099.6 243.4zM1104.1 333.4L1105.3 334.9L1106.5 335.6L1108.6 335.6L1108.6 341.4L1106.5 341.4L1105.3 342.6L1104.1 343.6zM1108.2 233.6L1109.4 235.1L1110.6 236.1L1113.1 236.1L1113.1 240.9L1110.6 240.9L1109.4 242.4L1108.2 243.4zM1112.8 333.4L1114 334.9L1115.2 335.6L1117.5 335.6L1117.5 341.4L1115.2 341.4L1114 342.6L1112.8 343.6zM1117.1 233.6L1118.3 235.1L1119.5 236.1L1121.9 236.1L1121.9 240.9L1119.5 240.9L1118.3 242.4L1117.1 243.4zM1121.6 333.4L1122.8 334.9L1124 335.6L1126.3 335.6L1126.3 341.4L1124 341.4L1122.8 342.6L1121.6 343.6zM1125.9 233.6L1127.1 235.1L1128.3 236.1L1130.6 236.1L1130.6 240.9L1128.3 240.9L1127.1 242.4L1125.9 243.4zM1130.4 333.4L1131.6 334.9L1132.8 335.6L1135.1 335.6L1135.1 341.4L1132.8 341.4L1131.6 342.6L1130.4 343.6zM1134.7 233.6L1135.9 235.1L1137.1 236.1L1139.4 236.1L1139.4 240.9L1137.1 240.9L1135.9 242.4L1134.7 243.4zM1139.1 333.4L1140.3 334.9L1141.5 335.6L1143.7 335.6L1143.7 341.4L1141.5 341.4L1140.3 342.6L1139.1 343.6zM1143.3 233.6L1144.5 235.1L1145.7 236.1L1148.1 236.1L1148.1 240.9L1145.7 240.9L1144.5 242.4L1143.3 243.4zM1147.6 333.4L1148.8 334.9L1150 335.6L1152.3 335.6L1152.3 341.4L1150 341.4L1148.8 342.6L1147.6 343.6zM1151.9 233.6L1153.1 235.1L1154.3 236.1L1156.9 236.1L1156.9 240.9L1154.3 240.9L1153.1 242.4L1151.9 243.4zM1156.3 333.4L1157.5 334.9L1158.7 335.6L1161.2 335.6L1161.2 341.4L1158.7 341.4L1157.5 342.6L1156.3 343.6zM1160.8 233.6L1162 235.1L1163.2 236.1L1165.6 236.1L1165.6 240.9L1163.2 240.9L1162 242.4L1160.8 243.4zM1165.2 333.4L1166.4 334.9L1167.6 335.6L1170.1 335.6L1170.1 341.4L1167.6 341.4L1166.4 342.6L1165.2 343.6zM1169.7 233.6L1170.9 235.1L1172.1 236.1L1174.3 236.1L1174.3 240.9L1172.1 240.9L1170.9 242.4L1169.7 243.4zM1173.8 333.4L1175 334.9L1176.2 335.6L1178.6 335.6L1178.6 341.4L1176.2 341.4L1175 342.6L1173.8 343.6zM1178.2 233.6L1179.4 235.1L1180.6 236.1L1183.1 236.1L1183.1 240.9L1180.6 240.9L1179.4 242.4L1178.2 243.4zM1182.7 333.4L1183.9 334.9L1185.1 335.6L1187.4 335.6L1187.4 341.4L1185.1 341.4L1183.9 342.6L1182.7 343.6zM1187 233.6L1188.2 235.1L1189.4 236.1L1191.8 236.1L1191.8 240.9L1189.4 240.9L1188.2 242.4L1187 243.4zM1191.4 333.4L1192.6 334.9L1193.8 335.6L1196.3 335.6L1196.3 341.4L1193.8 341.4L1192.6 342.6L1191.4 343.6zM1195.9 233.6L1197.1 235.1L1198.3 236.1L1200.6 236.1L1200.6 240.9L1198.3 240.9L1197.1 242.4L1195.9 243.4zM1200.1 333.4L1201.3 334.9L1202.5 335.6L1204.8 335.6L1204.8 341.4L1202.5 341.4L1201.3 342.6L1200.1 343.6zM1204.4 233.6L1205.6 235.1L1206.8 236.1L1209.3 236.1L1209.3 240.9L1206.8 240.9L1205.6 242.4L1204.4 243.4zM1209 333.4L1210.2 334.9L1211.4 335.6L1213.7 335.6L1213.7 341.4L1211.4 341.4L1210.2 342.6L1209 343.6zM1213.3 233.6L1214.5 235.1L1215.7 236.1L1218 236.1L1218 240.9L1215.7 240.9L1214.5 242.4L1213.3 243.4zM1217.7 333.4L1218.9 334.9L1220.1 335.6L1222.3 335.6L1222.3 341.4L1220.1 341.4L1218.9 342.6L1217.7 343.6zM1221.9 233.6L1223.1 235.1L1224.3 236.1L1226.8 236.1L1226.8 240.9L1224.3 240.9L1223.1 242.4L1221.9 243.4zM1226.3 333.4L1227.5 334.9L1228.7 335.6L1231 335.6L1231 341.4L1228.7 341.4L1227.5 342.6L1226.3 343.6zM1230.6 233.6L1231.8 235.1L1233 236.1L1235.5 236.1L1235.5 240.9L1233 240.9L1231.8 242.4L1230.6 243.4zM1235 333.4L1236.2 334.9L1237.4 335.6L1240.1 335.6L1240.1 341.4L1237.4 341.4L1236.2 342.6L1235 343.6zM1239.7 233.6L1240.9 235.1L1242.1 236.1L1244.3 236.1L1244.3 240.9L1242.1 240.9L1240.9 242.4L1239.7 243.4zM1243.7 333.4L1244.9 334.9L1246.1 335.6L1248.7 335.6L1248.7 341.4L1246.1 341.4L1244.9 342.6L1243.7 343.6zM1248.3 233.6L1249.5 235.1L1250.7 236.1L1253 236.1L1253 240.9L1250.7 240.9L1249.5 242.4L1248.3 243.4zM1252.8 333.4L1254 334.9L1255.2 335.6L1257.3 335.6L1257.3 341.4L1255.2 341.4L1254 342.6L1252.8 343.6zM1256.9 233.6L1258.1 235.1L1259.3 236.1L1261.8 236.1L1261.8 240.9L1259.3 240.9L1258.1 242.4L1256.9 243.4zM1261.5 333.4L1262.7 334.9L1263.9 335.6L1266.1 335.6L1266.1 341.4L1263.9 341.4L1262.7 342.6L1261.5 343.6zM1265.7 233.6L1266.9 235.1L1268.1 236.1L1270.5 236.1L1270.5 240.9L1268.1 240.9L1266.9 242.4L1265.7 243.4zM1270.2 333.4L1271.4 334.9L1272.6 335.6L1275 335.6L1275 341.4L1272.6 341.4L1271.4 342.6L1270.2 343.6zM1274.6 233.6L1275.8 235.1L1277 236.1L1279.2 236.1L1279.2 240.9L1277 240.9L1275.8 242.4L1274.6 243.4zM1278.8 333.4L1280 334.9L1281.2 335.6L1283.5 335.6L1283.5 341.4L1281.2 341.4L1280 342.6L1278.8 343.6zM1283.1 233.6L1284.3 235.1L1285.5 236.1L1288 236.1L1288 240.9L1285.5 240.9L1284.3 242.4L1283.1 243.4zM1287.4 333.4L1288.6 334.9L1289.8 335.6L1292.2 335.6L1292.2 341.4L1289.8 341.4L1288.6 342.6L1287.4 343.6zM1291.8 233.6L1293 235.1L1294.2 236.1L1296.7 236.1L1296.7 240.9L1294.2 240.9L1293 242.4L1291.8 243.4zM1296.3 333.4L1297.5 334.9L1298.7 335.6L1300.9 335.6L1300.9 341.4L1298.7 341.4L1297.5 342.6L1296.3 343.6zM1300.5 233.6L1301.7 235.1L1302.9 236.1L1305.5 236.1L1305.5 240.9L1302.9 240.9L1301.7 242.4L1300.5 243.4zM1305.3 333.4L1306.5 334.9L1307.7 335.6L1310 335.6L1310 341.4L1307.7 341.4L1306.5 342.6L1305.3 343.6zM1309.6 233.6L1310.8 235.1L1312 236.1L1314.2 236.1L1314.2 240.9L1312 240.9L1310.8 242.4L1309.6 243.4zM1314 333.4L1315.2 334.9L1316.4 335.6L1318.5 335.6L1318.5 341.4L1316.4 341.4L1315.2 342.6L1314 343.6zM1318.1 233.6L1319.3 235.1L1320.5 236.1L1322.9 236.1L1322.9 240.9L1320.5 240.9L1319.3 242.4L1318.1 243.4zM1322.5 333.4L1323.7 334.9L1324.9 335.6L1327.4 335.6L1327.4 341.4L1324.9 341.4L1323.7 342.6L1322.5 343.6zM1327 233.6L1328.2 235.1L1329.4 236.1L1331.7 236.1L1331.7 240.9L1329.4 240.9L1328.2 242.4L1327 243.4zM1331.4 333.4L1332.6 334.9L1333.8 335.6L1336 335.6L1336 341.4L1333.8 341.4L1332.6 342.6L1331.4 343.6zM1335.6 233.6L1336.8 235.1L1338 236.1L1340.4 236.1L1340.4 240.9L1338 240.9L1336.8 242.4L1335.6 243.4zM1339.9 333.4L1341.1 334.9L1342.3 335.6L1345 335.6L1345 341.4L1342.3 341.4L1341.1 342.6L1339.9 343.6zM1344.6 233.6L1345.8 235.1L1347 236.1L1349.2 236.1L1349.2 240.9L1347 240.9L1345.8 242.4L1344.6 243.4zM1349 333.4L1350.2 334.9L1351.4 335.6L1353.6 335.6L1353.6 341.4L1351.4 341.4L1350.2 342.6L1349 343.6zM1353.2 233.6L1354.4 235.1L1355.6 236.1L1357.9 236.1L1357.9 240.9L1355.6 240.9L1354.4 242.4L1353.2 243.4zM1357.4 333.4L1358.6 334.9L1359.8 335.6L1362.4 335.6L1362.4 341.4L1359.8 341.4L1358.6 342.6L1357.4 343.6zM1362 233.6L1363.2 235.1L1364.4 236.1L1366.7 236.1L1366.7 240.9L1364.4 240.9L1363.2 242.4L1362 243.4zM1366.1 333.4L1367.3 334.9L1368.5 335.6L1371.2 335.6L1371.2 341.4L1368.5 341.4L1367.3 342.6L1366.1 343.6zM1370.8 233.6L1372 235.1L1373.2 236.1L1375.4 236.1L1375.4 240.9L1373.2 240.9L1372 242.4L1370.8 243.4zM1374.9 333.4L1376.1 334.9L1377.3 335.6L1379.7 335.6L1379.7 341.4L1377.3 341.4L1376.1 342.6L1374.9 343.6zM1379.3 233.6L1380.5 235.1L1381.7 236.1L1384.1 236.1L1384.1 240.9L1381.7 240.9L1380.5 242.4L1379.3 243.4zM1383.7 333.4L1384.9 334.9L1386.1 335.6L1388.5 335.6L1388.5 341.4L1386.1 341.4L1384.9 342.6L1383.7 343.6zM1388.1 233.6L1389.3 235.1L1390.5 236.1L1392.9 236.1L1392.9 240.9L1390.5 240.9L1389.3 242.4L1388.1 243.4zM1392.5 333.4L1393.7 334.9L1394.9 335.6L1397.4 335.6L1397.4 341.4L1394.9 341.4L1393.7 342.6L1392.5 343.6zM1397 233.6L1398.2 235.1L1399.4 236.1L1401.6 236.1L1401.6 240.9L1399.4 240.9L1398.2 242.4L1397 243.4zM1401.3 333.4L1402.5 334.9L1403.7 335.6L1405.8 335.6L1405.8 341.4L1403.7 341.4L1402.5 342.6L1401.3 343.6zM1405.4 233.6L1406.6 235.1L1407.8 236.1L1410.4 236.1L1410.4 240.9L1407.8 240.9L1406.6 242.4L1405.4 243.4zM1410 333.4L1411.2 334.9L1412.4 335.6L1414.6 335.6L1414.6 341.4L1412.4 341.4L1411.2 342.6L1410 343.6zM1414.2 233.6L1415.4 235.1L1416.6 236.1L1419.1 236.1L1419.1 240.9L1416.6 240.9L1415.4 242.4L1414.2 243.4zM1418.6 333.4L1419.8 334.9L1421 335.6L1423.4 335.6L1423.4 341.4L1421 341.4L1419.8 342.6L1418.6 343.6zM1423 233.6L1424.2 235.1L1425.4 236.1L1427.8 236.1L1427.8 240.9L1425.4 240.9L1424.2 242.4L1423 243.4zM1427.6 333.4L1428.8 334.9L1430 335.6L1432.1 335.6L1432.1 341.4L1430 341.4L1428.8 342.6L1427.6 343.6zM1431.7 233.6L1432.9 235.1L1434.1 236.1L1436.6 236.1L1436.6 240.9L1434.1 240.9L1432.9 242.4L1431.7 243.4zM1436.3 333.4L1437.5 334.9L1438.7 335.6L1440.9 335.6L1440.9 341.4L1438.7 341.4L1437.5 342.6L1436.3 343.6zM1440.5 233.6L1441.7 235.1L1442.9 236.1L1445.3 236.1L1445.3 240.9L1442.9 240.9L1441.7 242.4L1440.5 243.4zM1444.8 333.4L1446 334.9L1447.2 335.6L1449.6 335.6L1449.6 341.4L1447.2 341.4L1446 342.6L1444.8 343.6zM1449.2 233.6L1450.4 235.1L1451.6 236.1L1454.1 236.1L1454.1 240.9L1451.6 240.9L1450.4 242.4L1449.2 243.4zM1453.6 333.4L1454.8 334.9L1456 335.6L1458.5 335.6L1458.5 341.4L1456 341.4L1454.8 342.6L1453.6 343.6zM1458.1 233.6L1459.3 235.1L1460.5 236.1L1462.8 236.1L1462.8 240.9L1460.5 240.9L1459.3 242.4L1458.1 243.4zM1462.4 333.4L1463.6 334.9L1464.8 335.6L1467.1 335.6L1467.1 341.4L1464.8 341.4L1463.6 342.6L1462.4 343.6zM1466.7 233.6L1467.9 235.1L1469.1 236.1L1471.6 236.1L1471.6 240.9L1469.1 240.9L1467.9 242.4L1466.7 243.4zM1471.2 333.4L1472.4 334.9L1473.6 335.6L1475.7 335.6L1475.7 341.4L1473.6 341.4L1472.4 342.6L1471.2 343.6zM1475.3 233.6L1476.5 235.1L1477.7 236.1L1480.3 236.1L1480.3 240.9L1477.7 240.9L1476.5 242.4L1475.3 243.4zM1480 333.4L1481.2 334.9L1482.4 335.6L1484.6 335.6L1484.6 341.4L1482.4 341.4L1481.2 342.6L1480 343.6zM1484.2 233.6L1485.4 235.1L1486.6 236.1L1489 236.1L1489 240.9L1486.6 240.9L1485.4 242.4L1484.2 243.4zM1488.7 333.4L1489.9 334.9L1491.1 335.6L1493.4 335.6L1493.4 341.4L1491.1 341.4L1489.9 342.6L1488.7 343.6zM1493 233.6L1494.2 235.1L1495.4 236.1L1497.8 236.1L1497.8 240.9L1495.4 240.9L1494.2 242.4L1493 243.4zM1497.2 333.4L1498.4 334.9L1499.6 335.6L1502.2 335.6L1502.2 341.4L1499.6 341.4L1498.4 342.6L1497.2 343.6zM1501.8 233.6L1503 235.1L1504.2 236.1L1506.5 236.1L1506.5 240.9L1504.2 240.9L1503 242.4L1501.8 243.4zM1506.1 333.4L1507.3 334.9L1508.5 335.6L1511 335.6L1511 341.4L1508.5 341.4L1507.3 342.6L1506.1 343.6zM1510.6 233.6L1511.8 235.1L1513 236.1L1515.3 236.1L1515.3 240.9L1513 240.9L1511.8 242.4L1510.6 243.4zM1514.9 333.4L1516.1 334.9L1517.3 335.6L1519.7 335.6L1519.7 341.4L1517.3 341.4L1516.1 342.6L1514.9 343.6zM1519.3 233.6L1520.5 235.1L1521.7 236.1L1524 236.1L1524 240.9L1521.7 240.9L1520.5 242.4L1519.3 243.4zM1523.6 333.4L1524.8 334.9L1526 335.6L1528.3 335.6L1528.3 341.4L1526 341.4L1524.8 342.6L1523.6 343.6zM1527.9 233.6L1529.1 235.1L1530.3 236.1L1532.7 236.1L1532.7 240.9L1530.3 240.9L1529.1 242.4L1527.9 243.4zM1532.2 333.4L1533.4 334.9L1534.6 335.6L1537.2 335.6L1537.2 341.4L1534.6 341.4L1533.4 342.6L1532.2 343.6zM1536.8 233.6L1538 235.1L1539.2 236.1L1541.5 236.1L1541.5 240.9L1539.2 240.9L1538 242.4L1536.8 243.4zM1541 333.4L1542.2 334.9L1543.4 335.6L1545.7 335.6L1545.7 341.4L1543.4 341.4L1542.2 342.6L1541 343.6zM1545.3 233.6L1546.5 235.1L1547.7 236.1L1550.2 236.1L1550.2 240.9L1547.7 240.9L1546.5 242.4L1545.3 243.4zM1549.9 333.4L1551.1 334.9L1552.3 335.6L1554.6 335.6L1554.6 341.4L1552.3 341.4L1551.1 342.6L1549.9 343.6zM1554.2 233.6L1555.4 235.1L1556.6 236.1L1559 236.1L1559 240.9L1556.6 240.9L1555.4 242.4L1554.2 243.4zM1558.7 333.4L1559.9 334.9L1561.1 335.6L1563.5 335.6L1563.5 341.4L1561.1 341.4L1559.9 342.6L1558.7 343.6zM1563.1 233.6L1564.3 235.1L1565.5 236.1L1567.7 236.1L1567.7 240.9L1565.5 240.9L1564.3 242.4L1563.1 243.4zM1567.4 333.4L1568.6 334.9L1569.8 335.6L1572.3 335.6L1572.3 341.4L1569.8 341.4L1568.6 342.6L1567.4 343.6zM1571.9 233.6L1573.1 235.1L1574.3 236.1L1576.4 236.1L1576.4 240.9L1574.3 240.9L1573.1 242.4L1571.9 243.4zM1576.1 333.4L1577.3 334.9L1578.5 335.6L1581 335.6L1581 341.4L1578.5 341.4L1577.3 342.6L1576.1 343.6zM1580.6 233.6L1581.8 235.1L1583 236.1L1585.2 236.1L1585.2 240.9L1583 240.9L1581.8 242.4L1580.6 243.4zM1584.7 333.4L1585.9 334.9L1587.1 335.6L1589.5 335.6L1589.5 341.4L1587.1 341.4L1585.9 342.6L1584.7 343.6zM1589.1 233.6L1590.3 235.1L1591.5 236.1L1593.9 236.1L1593.9 240.9L1591.5 240.9L1590.3 242.4L1589.1 243.4zM1593.6 333.4L1594.8 334.9L1596 335.6L1598.2 335.6L1598.2 341.4L1596 341.4L1594.8 342.6L1593.6 343.6zM1597.8 233.6L1599 235.1L1600.2 236.1L1602.7 236.1L1602.7 240.9L1600.2 240.9L1599 242.4L1597.8 243.4zM1602.5 333.4L1603.7 334.9L1604.9 335.6L1607.1 335.6L1607.1 341.4L1604.9 341.4L1603.7 342.6L1602.5 343.6zM1606.7 233.6L1607.9 235.1L1609.1 236.1L1611.4 236.1L1611.4 240.9L1609.1 240.9L1607.9 242.4L1606.7 243.4zM1611.2 333.4L1612.4 334.9L1613.6 335.6L1615.9 335.6L1615.9 341.4L1613.6 341.4L1612.4 342.6L1611.2 343.6zM1615.5 233.6L1616.7 235.1L1617.9 236.1L1620.2 236.1L1620.2 240.9L1617.9 240.9L1616.7 242.4L1615.5 243.4zM1619.9 333.4L1621.1 334.9L1622.3 335.6L1624.4 335.6L1624.4 341.4L1622.3 341.4L1621.1 342.6L1619.9 343.6zM1624 233.6L1625.2 235.1L1626.4 236.1L1628.9 236.1L1628.9 240.9L1626.4 240.9L1625.2 242.4L1624 243.4zM1628.4 333.4L1629.6 334.9L1630.8 335.6L1633.3 335.6L1633.3 341.4L1630.8 341.4L1629.6 342.6L1628.4 343.6zM1632.9 233.6L1634.1 235.1L1635.3 236.1L1637.6 236.1L1637.6 240.9L1635.3 240.9L1634.1 242.4L1632.9 243.4zM1637.1 333.4L1638.3 334.9L1639.5 335.6L1642 335.6L1642 341.4L1639.5 341.4L1638.3 342.6L1637.1 343.6zM1641.6 233.6L1642.8 235.1L1644 236.1L1646.4 236.1L1646.4 240.9L1644 240.9L1642.8 242.4L1641.6 243.4zM1646 333.4L1647.2 334.9L1648.4 335.6L1650.8 335.6L1650.8 341.4L1648.4 341.4L1647.2 342.6L1646 343.6zM1650.4 233.6L1651.6 235.1L1652.8 236.1L1655.1 236.1L1655.1 240.9L1652.8 240.9L1651.6 242.4L1650.4 243.4zM1654.5 333.4L1655.7 334.9L1656.9 335.6L1659.6 335.6L1659.6 341.4L1656.9 341.4L1655.7 342.6L1654.5 343.6zM1659.2 233.6L1660.4 235.1L1661.6 236.1L1663.9 236.1L1663.9 240.9L1661.6 240.9L1660.4 242.4L1659.2 243.4zM1663.6 333.4L1664.8 334.9L1666 335.6L1668.2 335.6L1668.2 341.4L1666 341.4L1664.8 342.6L1663.6 343.6zM1667.8 233.6L1669 235.1L1670.2 236.1L1672.6 236.1L1672.6 240.9L1670.2 240.9L1669 242.4L1667.8 243.4zM1672.1 333.4L1673.3 334.9L1674.5 335.6L1676.8 335.6L1676.8 341.4L1674.5 341.4L1673.3 342.6L1672.1 343.6zM1676.4 233.6L1677.6 235.1L1678.8 236.1L1681.3 236.1L1681.3 240.9L1678.8 240.9L1677.6 242.4L1676.4 243.4zM1680.9 333.4L1682.1 334.9L1683.3 335.6L1685.7 335.6L1685.7 341.4L1683.3 341.4L1682.1 342.6L1680.9 343.6zM1685.3 233.6L1686.5 235.1L1687.7 236.1L1690.1 236.1L1690.1 240.9L1687.7 240.9L1686.5 242.4L1685.3 243.4zM1689.8 333.4L1691 334.9L1692.2 335.6L1694.3 335.6L1694.3 341.4L1692.2 341.4L1691 342.6L1689.8 343.6zM1693.9 233.6L1695.1 235.1L1696.3 236.1L1698.8 236.1L1698.8 240.9L1696.3 240.9L1695.1 242.4L1693.9 243.4zM1698.4 333.4L1699.6 334.9L1700.8 335.6L1703.1 335.6L1703.1 341.4L1700.8 341.4L1699.6 342.6L1698.4 343.6zM1702.7 233.6L1703.9 235.1L1705.1 236.1L1707.6 236.1L1707.6 240.9L1705.1 240.9L1703.9 242.4L1702.7 243.4zM1707 333.4L1708.2 334.9L1709.4 335.6L1711.8 335.6L1711.8 341.4L1709.4 341.4L1708.2 342.6L1707 343.6zM1711.4 233.6L1712.6 235.1L1713.8 236.1L1716.3 236.1L1716.3 240.9L1713.8 240.9L1712.6 242.4L1711.4 243.4zM1715.8 333.4L1717 334.9L1718.2 335.6L1720.8 335.6L1720.8 341.4L1718.2 341.4L1717 342.6L1715.8 343.6zM1720.4 233.6L1721.6 235.1L1722.8 236.1L1725.1 236.1L1725.1 240.9L1722.8 240.9L1721.6 242.4L1720.4 243.4zM1724.6 333.4L1725.8 334.9L1727 335.6L1729.5 335.6L1729.5 341.4L1727 341.4L1725.8 342.6L1724.6 343.6zM1729.1 233.6L1730.3 235.1L1731.5 236.1L1733.8 236.1L1733.8 240.9L1731.5 240.9L1730.3 242.4L1729.1 243.4zM1733.3 333.4L1734.5 334.9L1735.7 335.6L1738.2 335.6L1738.2 341.4L1735.7 341.4L1734.5 342.6L1733.3 343.6zM1737.8 233.6L1739 235.1L1740.2 236.1L1742.5 236.1L1742.5 240.9L1740.2 240.9L1739 242.4L1737.8 243.4zM1742 333.4L1743.2 334.9L1744.4 335.6L1747 335.6L1747 341.4L1744.4 341.4L1743.2 342.6L1742 343.6zM1746.6 233.6L1747.8 235.1L1749 236.1L1751 236.1L1751 240.9L1749 240.9L1747.8 242.4L1746.6 243.4z" fill="#fff21e"/>
</g>
<g clip-path="url(#c2)">
<path d="M160.5 446V545M169.5 460V597M440.5 446V545M449.5 460V595M719.5 446V545M728.5 460V595M999.5 446V545M1008.5 460V597M1279.5 446V545M1288.5 460V597M1559.5 446V545M1568.5 460V595" stroke="#0c6a70" stroke-width="1" fill="none"/>
<path d="M125.5 527V559M130.5 530V559M134.5 521V571M138.5 523V556M143.5 527V559M147.5 531V561M151.5 522V573M156.5 533V558M173.5 533V555M178.5 524V558M182.5 532V560M186.5 523V557M191.5 525V556M195.5 527V557M199.5 524V553M204.5 523V573M208.5 530V554M213.5 525V559M217.5 532V558M221.5 525V575M226.5 524V554M230.5 527V560M234.5 530V558M239.5 526V571M243.5 531V560M248.5 524V563M252.5 528V558M256.5 527V573M261.5 529V559M265.5 525V561M269.5 530V557M274.5 524V560M278.5 525V556M283.5 523V564M287.5 528V559M291.5 527V574M296.5 527V552M300.5 526V561M304.5 528V561M309.5 524V557M313.5 527V558M317.5 525V557M322.5 533V562M326.5 522V564M331.5 531V557M335.5 521V559M339.5 528V556M344.5 522V562M348.5 526V556M352.5 524V560M357.5 527V557M361.5 523V571M366.5 533V562M370.5 525V557M374.5 527V559M379.5 525V572M383.5 529V558M387.5 526V564M392.5 524V558M396.5 522V559M401.5 531V556M405.5 526V561M409.5 530V559M414.5 524V571M418.5 526V558M422.5 523V558M427.5 529V560M431.5 525V557M435.5 527V558M453.5 526V554M457.5 526V559M462.5 528V556M466.5 522V562M470.5 526V555M475.5 523V559M479.5 530V556M484.5 523V560M488.5 529V560M492.5 523V559M497.5 530V562M501.5 523V560M505.5 534V554M510.5 526V558M514.5 525V560M519.5 521V561M523.5 533V556M527.5 527V561M532.5 528V554M536.5 524V572M540.5 526V558M545.5 524V560M549.5 529V561M553.5 523V573M558.5 526V557M562.5 521V560M567.5 524V555M571.5 523V572M575.5 530V560M580.5 524V557M584.5 532V560M588.5 524V574M593.5 528V558M597.5 522V562M602.5 524V554M606.5 524V564M610.5 527V560M615.5 523V564M619.5 526V561M623.5 523V575M628.5 524V556M632.5 527V564M637.5 532V558M641.5 524V562M645.5 531V555M650.5 524V563M654.5 532V560M658.5 524V572M663.5 526V556M667.5 526V559M672.5 525V557M676.5 524V559M680.5 527V560M685.5 522V557M689.5 529V559M693.5 525V574M698.5 529V560M702.5 522V560M706.5 527V561M711.5 523V573M715.5 527V556M733.5 526V552M737.5 527V564M741.5 530V559M746.5 523V561M750.5 532V557M755.5 521V558M759.5 531V559M763.5 525V572M768.5 526V563M772.5 526V560M776.5 532V557M781.5 524V571M785.5 529V558M790.5 525V562M794.5 528V557M798.5 521V559M803.5 525V558M807.5 523V557M811.5 531V564M816.5 526V560M820.5 533V555M824.5 527V563M829.5 530V552M833.5 521V563M838.5 528V559M842.5 526V564M846.5 533V554M851.5 522V573M855.5 529V556M859.5 526V561M864.5 529V555M868.5 523V564M873.5 525V559M877.5 522V561M881.5 527V562M886.5 524V562M890.5 531V559M894.5 522V563M899.5 527V556M903.5 523V560M908.5 530V561M912.5 525V560M916.5 529V563M921.5 523V571M925.5 529V557M929.5 526V564M934.5 528V556M938.5 522V561M942.5 526V557M947.5 523V560M951.5 525V558M956.5 523V572M960.5 530V556M964.5 526V559M969.5 527V559M973.5 521V572M977.5 533V562M982.5 527V562M986.5 526V559M991.5 523V562M995.5 525V556M1012.5 531V555M1017.5 521V562M1021.5 532V560M1026.5 521V560M1030.5 528V555M1034.5 526V560M1039.5 531V559M1043.5 521V561M1047.5 528V556M1052.5 523V560M1056.5 525V554M1061.5 526V574M1065.5 531V552M1069.5 521V561M1074.5 529V558M1078.5 523V574M1082.5 528V560M1087.5 523V561M1091.5 526V558M1095.5 525V560M1100.5 531V555M1104.5 523V558M1109.5 528V559M1113.5 524V575M1117.5 525V558M1122.5 523V560M1126.5 526V557M1130.5 526V559M1135.5 526V561M1139.5 526V560M1144.5 526V555M1148.5 524V572M1152.5 528V556M1157.5 522V557M1161.5 526V558M1165.5 522V563M1170.5 527V562M1174.5 523V562M1179.5 530V563M1183.5 521V564M1187.5 527V559M1192.5 523V560M1196.5 531V560M1200.5 523V576M1205.5 526V560M1209.5 521V561M1213.5 525V561M1218.5 526V564M1222.5 524V552M1227.5 527V564M1231.5 527V554M1235.5 523V560M1240.5 527V561M1244.5 524V562M1248.5 530V553M1253.5 521V564M1257.5 533V560M1262.5 527V557M1266.5 531V557M1270.5 525V574M1275.5 524V557M1292.5 528V562M1297.5 521V560M1301.5 528V558M1305.5 527V557M1310.5 531V562M1314.5 526V560M1318.5 531V556M1323.5 524V560M1327.5 532V560M1331.5 526V560M1336.5 528V561M1340.5 523V572M1345.5 531V559M1349.5 524V560M1353.5 528V558M1358.5 524V573M1362.5 530V555M1366.5 524V559M1371.5 531V560M1375.5 526V559M1380.5 527V553M1384.5 524V560M1388.5 529V557M1393.5 526V573M1397.5 528V560M1401.5 524V561M1406.5 529V556M1410.5 524V575M1415.5 527V560M1419.5 523V560M1423.5 529V559M1428.5 524V558M1432.5 525V559M1436.5 524V560M1441.5 528V556M1445.5 524V560M1449.5 527V559M1454.5 523V557M1458.5 527V564M1463.5 527V558M1467.5 526V558M1471.5 526V561M1476.5 528V555M1480.5 524V557M1484.5 528V559M1489.5 524V562M1493.5 526V560M1498.5 523V573M1502.5 524V556M1506.5 524V560M1511.5 527V558M1515.5 525V557M1519.5 525V560M1524.5 524V557M1528.5 526V563M1533.5 524V560M1537.5 528V556M1541.5 525V557M1546.5 527V562M1550.5 526V564M1554.5 527V557M1572.5 532V558M1576.5 522V562M1581.5 528V561M1585.5 523V561M1589.5 528V554M1594.5 523V560M1598.5 528V562M1602.5 522V557M1607.5 531V559M1611.5 523V560M1616.5 526V557M1620.5 525V561M1624.5 529V553M1629.5 523V564M1633.5 527V558M1637.5 521V560M1642.5 526V561M1646.5 524V564M1651.5 529V560M1655.5 524V562M1659.5 527V557M1664.5 524V563M1668.5 531V556M1672.5 523V571M1677.5 531V561M1681.5 523V559M1686.5 530V562M1690.5 526V560M1694.5 531V560M1699.5 523V563M1703.5 526V555M1707.5 523V573M1712.5 528V555M1716.5 527V561M1720.5 529V563M1725.5 524V564M1729.5 528V561M1734.5 523V558M1738.5 528V561M1742.5 521V563M1747.5 527V560M160.5 424V446M164.5 430V459M169.5 430V461M169.5 506V560M440.5 424V446M444.5 428V463M449.5 429V461M449.5 506V560M719.5 426V446M724.5 429V466M728.5 431V461M728.5 506V560M999.5 426V446M1003.5 428V464M1008.5 430V461M1008.5 506V560M1279.5 427V446M1283.5 430V467M1288.5 432V461M1288.5 506V560M1559.5 426V446M1563.5 430V462M1568.5 430V461M1568.5 506V560" stroke="#17aab3" stroke-width="1" fill="none"/>
<path d="M3 542.6H125V542.2H160.2V546.7H125V546.2H3zM169.8 542.2H439.9V546.7H169.8zM449.5 542.2H719.7V546.7H449.5zM729.3 542.2H999.4V546.7H729.3zM1009 542.2H1279.1V546.7H1009zM1288.7 542.2H1558.8V546.7H1288.7zM1568.4 542.2H1751V546.7H1568.4zM160.2 443.6H169.8V448.6H160.2zM439.9 443.6H449.5V448.6H439.9zM719.7 443.6H729.3V448.6H719.7zM999.4 443.6H1009V448.6H999.4zM1279.1 443.6H1288.7V448.6H1279.1zM1558.8 443.6H1568.4V448.6H1558.8z" fill="#1ec8d2"/>
</g>
<g clip-path="url(#c3)">
<path d="M160.5 750V834M169.5 742V821M177.5 750V834M187.5 742V821M195.5 750V834M204.5 742V821M212.5 750V834M221.5 742V821M239.5 750V834M248.5 742V821M256.5 750V834M265.5 742V821M274.5 750V834M283.5 742V821M291.5 750V834M300.5 742V821M571.5 750V834M580.5 742V821M702.5 750V834M711.5 742V821M842.5 750V834M860.5 742V821M973.5 750V834M982.5 742V821M1113.5 750V834M1122.5 742V821M1130.5 750V834M1139.5 742V821M1253.5 750V834M1270.5 742V821M1392.5 750V834M1419.5 742V821M1436.5 750V834M1445.5 742V821M1454.5 750V834M1463.5 742V821M1480.5 750V834M1489.5 742V821M1497.5 750V834M1524.5 742V821M1532.5 750V834M1559.5 742V821M1576.5 750V834M1594.5 742V821M1611.5 750V834M1638.5 742V821M1655.5 750V834M1664.5 742V821M1672.5 750V834M1690.5 742V821M1716.5 750V834M1734.5 742V821" stroke="#761428" stroke-width="1" fill="none"/>
<path d="M169.5 840V874M187.5 840V869M204.5 840V870M221.5 840V873M248.5 840V866M265.5 840V873M283.5 840V868M300.5 840V866M580.5 840V870M711.5 840V872M860.5 840V873M982.5 840V871M1122.5 840V870M1139.5 840V870M1270.5 840V866M1419.5 840V873M1445.5 840V868M1463.5 840V870M1489.5 840V868M1524.5 840V870M1559.5 840V872M1594.5 840V867M1638.5 840V870M1664.5 840V871M1690.5 840V870M1734.5 840V870" stroke="#b21c3c" stroke-width="1" fill="none"/>
<path d="M160.5 723V753M169.5 820V842M177.5 724V751M187.5 822V842M195.5 722V751M204.5 818V842M212.5 722V751M221.5 822V842M221.5 785V803M239.5 724V752M248.5 821V842M248.5 783V801M256.5 724V753M265.5 818V842M265.5 783V802M274.5 723V749M283.5 818V842M283.5 783V797M291.5 722V751M300.5 819V842M571.5 723V749M580.5 819V842M702.5 724V749M711.5 820V842M842.5 722V752M860.5 819V842M860.5 786V802M973.5 724V753M982.5 819V842M1113.5 724V752M1122.5 819V842M1130.5 724V751M1139.5 819V842M1139.5 783V799M1253.5 724V750M1270.5 818V842M1392.5 724V751M1419.5 822V842M1436.5 723V749M1445.5 818V842M1445.5 782V803M1454.5 723V751M1463.5 819V842M1480.5 723V753M1489.5 818V842M1489.5 783V803M1497.5 723V749M1524.5 821V842M1532.5 723V750M1559.5 820V842M1559.5 781V800M1576.5 722V750M1594.5 819V842M1611.5 723V752M1638.5 819V842M1638.5 782V802M1655.5 722V751M1664.5 818V842M1672.5 723V753M1690.5 821V842M1716.5 723V749M1734.5 819V842M125.5 819V850M130.5 824V846M134.5 818V850M138.5 823V844M143.5 820V852M147.5 821V853M151.5 820V849M156.5 825V844M160.5 725V753M164.5 729V753M169.5 819V855M173.5 823V847M178.5 723V750M182.5 726V749M186.5 817V849M191.5 821V852M195.5 721V753M199.5 726V752M204.5 820V848M208.5 822V849M213.5 725V752M217.5 728V753M221.5 819V849M226.5 828V846M230.5 819V851M234.5 822V849M239.5 725V751M243.5 731V750M248.5 818V850M252.5 821V848M256.5 725V755M261.5 723V752M265.5 819V850M269.5 827V849M274.5 721V751M278.5 725V748M283.5 822V849M287.5 827V852M291.5 723V753M296.5 725V750M300.5 819V852M304.5 822V852M309.5 817V853M313.5 825V847M317.5 819V850M322.5 825V847M326.5 817V850M331.5 823V844M335.5 819V855M339.5 823V844M344.5 819V853M348.5 821V847M352.5 817V848M357.5 821V852M361.5 822V852M366.5 821V845M370.5 818V852M374.5 822V848M379.5 820V850M383.5 828V844M387.5 817V851M392.5 823V849M396.5 818V848M401.5 823V849M405.5 819V850M409.5 828V854M414.5 819V849M418.5 824V846M422.5 819V849M427.5 826V853M431.5 819V849M435.5 828V849M440.5 821V855M444.5 825V847M449.5 818V853M453.5 819V853M457.5 821V852M462.5 821V849M466.5 818V852M470.5 826V849M475.5 818V848M479.5 825V850M484.5 820V853M488.5 827V848M492.5 818V850M497.5 824V849M501.5 821V853M505.5 824V850M510.5 820V851M514.5 823V846M519.5 820V852M523.5 824V850M527.5 818V852M532.5 825V849M536.5 818V850M540.5 825V847M545.5 819V855M549.5 823V850M553.5 820V848M558.5 824V849M562.5 818V850M567.5 827V852M571.5 724V753M575.5 726V750M580.5 822V848M584.5 821V847M588.5 817V851M593.5 823V850M597.5 819V850M602.5 826V844M606.5 819V852M610.5 820V851M615.5 822V850M619.5 822V852M623.5 822V848M628.5 823V849M632.5 819V848M637.5 826V850M641.5 820V850M645.5 824V851M650.5 821V852M654.5 821V846M658.5 820V855M663.5 825V845M667.5 820V850M672.5 821V846M676.5 819V850M680.5 822V848M685.5 819V850M689.5 823V847M693.5 820V849M698.5 824V851M702.5 721V752M706.5 726V749M711.5 820V850M715.5 822V847M720.5 820V849M724.5 826V848M728.5 821V849M733.5 826V848M737.5 822V851M741.5 825V850M746.5 818V848M750.5 821V847M755.5 817V850M759.5 823V850M763.5 822V852M768.5 822V849M772.5 821V855M776.5 828V847M781.5 820V850M785.5 822V846M790.5 817V850M794.5 823V849M798.5 820V853M803.5 822V851M807.5 820V852M811.5 824V846M816.5 821V850M820.5 827V850M824.5 819V849M829.5 824V849M833.5 821V855M838.5 820V851M842.5 724V751M846.5 725V752M851.5 721V752M855.5 726V752M859.5 819V849M864.5 825V853M868.5 819V852M873.5 824V848M877.5 819V855M881.5 827V846M886.5 820V850M890.5 824V854M894.5 817V850M899.5 821V847M903.5 818V849M908.5 822V850M912.5 817V848M916.5 824V848M921.5 820V850M925.5 821V846M929.5 822V852M934.5 825V848M938.5 820V848M942.5 825V847M947.5 820V848M951.5 827V848M956.5 820V848M960.5 822V850M964.5 820V849M969.5 819V846M973.5 721V755M977.5 727V754M982.5 822V851M986.5 825V850M991.5 821V855M995.5 821V849M999.5 818V853M1004.5 827V850M1008.5 819V855M1012.5 823V847M1017.5 819V855M1021.5 827V850M1026.5 821V853M1030.5 825V850M1034.5 820V851M1039.5 822V854M1043.5 821V853M1047.5 819V853M1052.5 820V850M1056.5 827V845M1061.5 820V850M1065.5 822V848M1069.5 819V849M1074.5 822V846M1078.5 820V851M1082.5 820V851M1087.5 820V855M1091.5 827V845M1095.5 820V848M1100.5 825V845M1104.5 819V852M1109.5 822V848M1113.5 725V756M1117.5 726V751M1122.5 818V851M1126.5 826V853M1130.5 723V750M1135.5 728V748M1139.5 817V848M1144.5 821V847M1148.5 820V850M1152.5 825V846M1157.5 819V851M1161.5 824V848M1165.5 819V852M1170.5 826V848M1174.5 822V853M1179.5 823V852M1183.5 818V851M1187.5 821V850M1192.5 820V850M1196.5 821V849M1200.5 819V851M1205.5 819V846M1209.5 820V855M1213.5 824V850M1218.5 820V850M1222.5 818V848M1227.5 820V850M1231.5 822V845M1235.5 821V850M1240.5 821V847M1244.5 820V853M1248.5 819V851M1253.5 723V753M1257.5 728V752M1262.5 723V754M1266.5 728V749M1270.5 820V851M1275.5 825V849M1279.5 821V850M1283.5 824V850M1288.5 821V851M1292.5 825V852M1297.5 820V852M1301.5 822V849M1305.5 821V851M1310.5 823V854M1314.5 820V855M1318.5 826V848M1323.5 820V850M1327.5 826V847M1331.5 822V855M1336.5 822V846M1340.5 819V851M1345.5 828V855M1349.5 820V850M1353.5 824V850M1358.5 819V853M1362.5 822V849M1366.5 822V848M1371.5 821V845M1375.5 820V850M1380.5 822V846M1384.5 819V850M1388.5 822V849M1393.5 721V755M1397.5 725V750M1401.5 725V755M1406.5 726V752M1410.5 721V751M1415.5 728V750M1419.5 820V853M1423.5 824V851M1428.5 819V851M1432.5 820V849M1436.5 721V754M1441.5 728V752M1445.5 819V851M1449.5 822V846M1454.5 721V751M1458.5 730V747M1463.5 819V850M1467.5 822V847M1471.5 819V850M1476.5 822V846M1480.5 721V754M1484.5 731V749M1489.5 819V853M1493.5 821V845M1498.5 725V752M1502.5 726V750M1506.5 726V751M1511.5 728V753M1515.5 724V756M1519.5 730V750M1524.5 818V848M1528.5 819V846M1533.5 723V756M1537.5 728V752M1541.5 721V755M1546.5 726V752M1550.5 725V751M1554.5 728V752M1559.5 821V850M1563.5 824V850M1568.5 819V849M1572.5 822V851M1576.5 723V754M1581.5 731V749M1585.5 725V755M1589.5 725V752M1594.5 820V851M1598.5 825V846M1602.5 820V849M1607.5 825V854M1611.5 723V754M1616.5 725V751M1620.5 724V752M1624.5 726V751M1629.5 721V750M1633.5 727V754M1637.5 820V851M1642.5 820V850M1646.5 821V851M1651.5 821V849M1655.5 724V755M1659.5 726V752M1664.5 819V850M1668.5 824V850M1672.5 723V754M1677.5 726V748M1681.5 724V756M1686.5 725V752M1690.5 821V850M1694.5 823V848M1699.5 820V852M1703.5 824V855M1707.5 818V848M1712.5 826V845M1716.5 722V756M1720.5 727V751M1725.5 725V753M1729.5 730V748M1734.5 819V852M1738.5 820V848M1742.5 817V848M1747.5 827V851" stroke="#d02244" stroke-width="1" fill="none"/>
<path d="M3 833.2H125V831H160.2V837H125V839.4H3zM160.2 736.6L169.5 736.1L169.5 742.7L160.2 743.6zM168.9 826L170.7 829.5L171.9 831H177.7V836.6H171.9L170.5 838.5L168.9 841zM177.7 736.6L187 736.1L187 742.7L177.7 743.6zM186.4 826L188.2 829.5L189.4 831H195.2V836.6H189.4L188 838.5L186.4 841zM195.2 736.6L204.5 736.1L204.5 742.7L195.2 743.6zM203.9 826L205.7 829.5L206.9 831H212.6V836.6H206.9L205.5 838.5L203.9 841zM212.6 736.6L222 736.1L222 742.7L212.6 743.6zM221.4 826L223.2 829.5L224.4 831H238.9V836.6H224.4L223 838.5L221.4 841zM238.9 736.6L248.2 736.1L248.2 742.7L238.9 743.6zM247.6 826L249.4 829.5L250.6 831H256.4V836.6H250.6L249.2 838.5L247.6 841zM256.4 736.6L265.7 736.1L265.7 742.7L256.4 743.6zM265.1 826L266.9 829.5L268.1 831H273.8V836.6H268.1L266.7 838.5L265.1 841zM273.8 736.6L283.2 736.1L283.2 742.7L273.8 743.6zM282.6 826L284.4 829.5L285.6 831H291.3V836.6H285.6L284.2 838.5L282.6 841zM291.3 736.6L300.7 736.1L300.7 742.7L291.3 743.6zM300.1 826L301.9 829.5L303.1 831H571.1V836.6H303.1L301.7 838.5L300.1 841zM571.1 736.6L580.4 736.1L580.4 742.7L571.1 743.6zM579.8 826L581.6 829.5L582.8 831H702.2V836.6H582.8L581.4 838.5L579.8 841zM702.2 736.6L711.5 736.1L711.5 742.7L702.2 743.6zM710.9 826L712.7 829.5L713.9 831H842V836.6H713.9L712.5 838.5L710.9 841zM842 736.6L860.1 735.4L860.1 742L842 743.6zM859.5 826L861.3 829.5L862.5 831H973.2V836.6H862.5L861.1 838.5L859.5 841zM973.2 736.6L982.5 736.1L982.5 742.7L973.2 743.6zM981.9 826L983.7 829.5L984.9 831H1113V836.6H984.9L983.5 838.5L981.9 841zM1113 736.6L1122.4 736.1L1122.4 742.7L1113 743.6zM1121.8 826L1123.6 829.5L1124.8 831H1130.5V836.6H1124.8L1123.4 838.5L1121.8 841zM1130.5 736.6L1139.8 736.1L1139.8 742.7L1130.5 743.6zM1139.2 826L1141 829.5L1142.2 831H1252.9V836.6H1142.2L1140.8 838.5L1139.2 841zM1252.9 736.6L1271 735.4L1271 742L1252.9 743.6zM1270.4 826L1272.2 829.5L1273.4 831H1392.8V836.6H1273.4L1272 838.5L1270.4 841zM1392.8 736.6L1419.6 734.7L1419.6 741.3L1392.8 743.6zM1419 826L1420.8 829.5L1422 831H1436.5V836.6H1422L1420.6 838.5L1419 841zM1436.5 736.6L1445.8 736.1L1445.8 742.7L1436.5 743.6zM1445.2 826L1447 829.5L1448.2 831H1453.9V836.6H1448.2L1446.8 838.5L1445.2 841zM1453.9 736.6L1463.3 736.1L1463.3 742.7L1453.9 743.6zM1462.7 826L1464.5 829.5L1465.7 831H1480.2V836.6H1465.7L1464.3 838.5L1462.7 841zM1480.2 736.6L1489.5 736.1L1489.5 742.7L1480.2 743.6zM1488.9 826L1490.7 829.5L1491.9 831H1497.6V836.6H1491.9L1490.5 838.5L1488.9 841zM1497.6 736.6L1524.5 734.7L1524.5 741.3L1497.6 743.6zM1523.9 826L1525.7 829.5L1526.9 831H1532.6V836.6H1526.9L1525.5 838.5L1523.9 841zM1532.6 736.6L1559.4 734.7L1559.4 741.3L1532.6 743.6zM1558.8 826L1560.6 829.5L1561.8 831H1576.3V836.6H1561.8L1560.4 838.5L1558.8 841zM1576.3 736.6L1594.4 735.4L1594.4 742L1576.3 743.6zM1593.8 826L1595.6 829.5L1596.8 831H1611.3V836.6H1596.8L1595.4 838.5L1593.8 841zM1611.3 736.6L1638.1 734.7L1638.1 741.3L1611.3 743.6zM1637.5 826L1639.3 829.5L1640.5 831H1655V836.6H1640.5L1639.1 838.5L1637.5 841zM1655 736.6L1664.3 736.1L1664.3 742.7L1655 743.6zM1663.7 826L1665.5 829.5L1666.7 831H1672.5V836.6H1666.7L1665.3 838.5L1663.7 841zM1672.5 736.6L1690.6 735.4L1690.6 742L1672.5 743.6zM1690 826L1691.8 829.5L1693 831H1716.2V836.6H1693L1691.6 838.5L1690 841zM1716.2 736.6L1734.3 735.4L1734.3 742L1716.2 743.6zM1733.7 826L1735.5 829.5L1736.7 831H1751V836.6H1736.7L1735.3 838.5L1733.7 841z" fill="#ea2a50"/>
</g>
<path d="M43 544.5H1751M43 836.5H1751" stroke="#e0d8d8" stroke-width="1" stroke-dasharray="5 5" fill="none" opacity="0.55"/>
</svg>
<svg id="ov" class="abs" style="left:0;top:0;z-index:3" viewBox="0 0 1920 1079" width="1920" height="1079">
<!-- channel markers -->
<g font-family="Liberation Sans, sans-serif" font-size="14.500">
<path d="M8.5 327.5H28.5Q30.5 327.5 32 329.0L41.5 340.5L32 351.5Q30.5 353.0 28.5 353.0H8.5Q6.5 353.0 6.5 351.0V329.5Q6.5 327.5 8.5 327.5z" fill="#1e1c08" stroke="#f0e61e" stroke-width="1.200"/>
<text x="13.5" y="345.0" fill="#f0e61e">C 1</text>
<path d="M8.5 531.5H28.5Q30.5 531.5 32 533.0L41.5 544.5L32 555.5Q30.5 557.0 28.5 557.0H8.5Q6.5 557.0 6.5 555.0V533.5Q6.5 531.5 8.5 531.5z" fill="#041214" stroke="#1ec6d0" stroke-width="1.200"/>
<text x="13.5" y="549.0" fill="#1ec6d0">C 2</text>
<path d="M8.5 823.5H28.5Q30.5 823.5 32 825.0L41.5 836.5L32 847.5Q30.5 849.0 28.5 849.0H8.5Q6.5 849.0 6.5 847.0V825.5Q6.5 823.5 8.5 823.5z" fill="#ec4664" stroke="#ec4664" stroke-width="1.200"/>
<text x="13.5" y="841.0" fill="#fff">C 3</text>
</g>
<!-- trigger T marker -->
<path d="M115 57H136L125.5 66.5z" fill="#f08a1e"/>
<path d="M116 68H135V87.5H130L125.5 93.5L121 87.5H116z" fill="#000" stroke="#f08a1e" stroke-width="2"/>
<text x="125.5" y="83" font-family="Liberation Sans, sans-serif" font-size="14" font-weight="bold" fill="#f08a1e" text-anchor="middle">T</text>
<!-- overview bar -->
<path d="M593 36.5H586.5V52.5H593M1161 36.5H1167.5V52.5H1161" stroke="#f2f2f2" stroke-width="1" fill="none"/>
<rect x="587" y="44" width="580" height="2" fill="#a8a8a8"/>
<path d="M619 33H634L626.5 38z" fill="#f08a1e"/>
<path d="M620.5 40.500H632.5V52.500H629.500L626.5 56L623.5 52.500H620.5z" fill="#000" stroke="#f08a1e" stroke-width="1.4"/>
<text x="626.5" y="50.500" font-family="Liberation Sans, sans-serif" font-size="10" font-weight="bold" fill="#f08a1e" text-anchor="middle">T</text>
<!-- zoom corner -->
<path d="M1711 63.500H1742Q1744 63.500 1744 65.500V97z" fill="#4d4d4d"/>
<circle cx="1737" cy="70.500" r="4.200" fill="none" stroke="#b6b6b6" stroke-width="1.300"/>
<path d="M1733.800 74L1727.800 80" stroke="#b6b6b6" stroke-width="2.200" stroke-linecap="round"/>
<!-- trigger level arrow -->
<path d="M1729.500 265.300L1742 255.300V263.800H1751V267H1742V275z" fill="#fff23c"/>
<!-- side handle dots -->
<circle cx="1762" cy="503" r="2.100" fill="#c4c4c4"/><circle cx="1762" cy="511.700" r="2.100" fill="#c4c4c4"/><circle cx="1762" cy="520.300" r="2.100" fill="#c4c4c4"/>

</svg>
<div id="side"></div>
<svg class="abs" style="left:1780px;top:0" width="130" height="30" viewBox="1780 0 130 30">
<text x="1786" y="25.900" font-family="Liberation Sans, sans-serif" font-weight="bold" font-size="31" fill="#fff" stroke="#fff" stroke-width="0.7" textLength="117.500" lengthAdjust="spacingAndGlyphs">Tektronix</text>
<path d="M1814.800 26H1821.200L1831.800 9.500H1825.600z" fill="#22c0dc"/>
</svg>
<span class="t" style="left:1769px;width:151px;text-align:center;top:33px;font-size:16px;font-weight:bold;color:#f0f0f0">Add New...</span>
<div class="btn" style="left:1778px;top:56px">Cursors</div>
<div class="btn" style="left:1850px;top:56px">Callout</div>
<div class="btn" style="left:1778px;top:102px">Measure</div>
<div class="btn" style="left:1850px;top:102px">Search</div>
<div class="btn two" style="left:1778px;top:148px">Results<br>Table</div>
<div class="btn" style="left:1850px;top:148px">Plot</div>
<div class="sep" style="top:191px"></div>
<div class="btn" style="left:1778px;top:198px"></div>
<svg class="abs" style="left:1790px;top:200px" width="40" height="34" viewBox="1790 200 40 34">
<rect x="1798" y="205" width="22" height="19.500" fill="none" stroke="#b8b8b8" stroke-width="1.600" stroke-dasharray="3.200 2.200"/>
<circle cx="1811.300" cy="212.300" r="4.300" fill="#2f2f2f" stroke="#c4c4c4" stroke-width="1.400"/>
<path d="M1808.200 215.600L1803 220.300" stroke="#c4c4c4" stroke-width="2.200" stroke-linecap="round"/>
<path d="M1815.500 219.500L1823 223.500L1820 224.500L1822 228L1820.500 228.800L1818.600 225.300L1816.500 227.500z" fill="#b8b8b8"/>
</svg>
<div class="btn" style="left:1850px;top:198px">More...</div>
<div class="sep" style="top:244px"></div>
<div class="badge" style="left:1773px;top:260px;width:144px;height:78px">
<div class="hd" style="height:19px"></div>
<span class="t" style="left:5px;top:2px;font-size:14.500px;color:#fff">Meas 1</span>
<span class="pill" style="left:116px;top:4px;width:22px;height:12px;background:#f2ea1e;line-height:12px">1</span>
<span class="t" style="left:5px;top:22px;font-size:14px">Frequency</span>
<span class="t" style="left:5px;top:40px;font-size:14.300px;color:#f21414">µ': &gt; 2.796 MHz</span>
<span class="t" style="left:5px;top:60px;font-size:14px;font-weight:bold;color:#f20a0a">Neg clipping</span>
</div>
<div class="badge" style="left:1773px;top:346px;width:144px;height:59px">
<div class="hd" style="height:19px;background:#000"></div>
<span class="t" style="left:5px;top:2px;font-size:14.500px;color:#22c4d0">Meas 2</span>
<span class="pill" style="left:116px;top:4px;width:22px;height:12px;background:#22c4d0;line-height:12px">2</span>
<span class="t" style="left:5px;top:22px;font-size:14px">Frequency</span>
<span class="t" style="left:5px;top:40px;font-size:14.300px">µ': 15.63 kHz</span>
</div>

<!-- channel badges -->
<div class="badge" style="left:3px;top:979px;width:90px;height:97px;border-radius:5px">
<div class="hd" style="height:19px;background:#4a4622"></div>
<div class="abs" style="left:0;top:19px;width:90px;height:2px;background:#9a9a9a"></div>
<div class="abs" style="left:0;top:21px;width:90px;height:17px;background:#fa0000"></div>
<span class="t" style="left:6px;top:2px;font-size:14.500px;color:#f0e61e">Ch 1</span>
<svg class="abs" style="left:0;top:21px" width="18" height="17" viewBox="0 0 18 17"><path d="M8.500 1.500L15.500 15.500H1.500z" fill="#ffee1e" stroke="#5a3a3a" stroke-width="1"/><path d="M8.500 6V11.500M8.500 13V14.200" stroke="#1a1a1a" stroke-width="1.500"/></svg>
<span class="t" style="left:17px;top:22px;font-size:15.500px;color:#fff">Clipping</span>
<span class="t" style="left:6px;top:41px;font-size:14px">1 V/div</span>
<span class="t" style="left:6px;top:79px;font-size:14px">1 GHz</span>
</div>
<div class="badge" style="left:98px;top:998px;width:90px;height:78px;border-radius:5px">
<div class="hd" style="height:18px;background:#1e4246"></div>
<div class="abs" style="left:0;top:18px;width:90px;height:1px;background:#8a9a9a"></div>
<span class="t" style="left:5px;top:2px;font-size:14.500px;color:#22d0dc">Ch 2</span>
<span class="t" style="left:6px;top:22px;font-size:14px">1 V/div</span>
<span class="t" style="left:6px;top:60px;font-size:14px">1 GHz</span>
</div>
<div class="badge" style="left:193px;top:998px;width:90px;height:78px;border-radius:5px">
<div class="hd" style="height:18px;background:#ec4664"></div>
<div class="abs" style="left:0;top:18px;width:90px;height:1px;background:#b89a9e"></div>
<span class="t" style="left:5px;top:2px;font-size:14.500px;color:#fff">Ch 3</span>
<span class="t" style="left:6px;top:22px;font-size:14px">1 V/div</span>
<span class="t" style="left:6px;top:60px;font-size:14px">1 GHz</span>
</div>
<svg class="abs" style="left:0;top:1035px" width="290" height="40" viewBox="0 1035 290 40">
<defs><g id="probe"><path d="M1.500 13.500C0.800 9 2 4 6 2.800C10 1.600 13.500 4.500 13.800 9" fill="none" stroke="#222" stroke-width="1.100"/><circle cx="7" cy="5.600" r="2.600" fill="none" stroke="#222" stroke-width="1.100"/><rect x="0.500" y="8.500" width="2" height="5.500" rx="1" fill="#e8e8e8" stroke="#222" stroke-width="0.800"/><rect x="11.800" y="9" width="3.200" height="5.500" rx="0.800" fill="#e8e8e8" stroke="#222" stroke-width="0.900"/></g>
<g id="bw" font-family="Liberation Sans, sans-serif" font-weight="bold" fill="#111"><text x="0.5" y="-2.5" font-size="10.500">B</text><text x="6.500" y="0.500" font-size="9">w</text></g></defs>
<use href="#probe" x="9" y="1035"/><use href="#probe" x="104" y="1035"/><use href="#probe" x="199" y="1035"/>
<use href="#bw" x="74" y="1066"/><use href="#bw" x="169" y="1066"/><use href="#bw" x="264" y="1066"/>
</svg>
<!-- bottom buttons -->
<div class="bbtn" style="left:1068px;width:40px;font-size:20px;line-height:85px"><i style="background:#8cdc28"></i>4</div>
<div class="vsep" style="left:1118px"></div>
<div class="bbtn" style="left:1129px;width:40px;font-size:14px;line-height:17.500px;padding-top:17px"><i style="background:#ff9020"></i>Add<br>New<br>Math</div>
<div class="bbtn" style="left:1174px;width:40px;font-size:14px;line-height:17.500px;padding-top:17px"><i style="background:#c4c4dc"></i>Add<br>New<br>Ref</div>
<div class="bbtn" style="left:1219px;width:40px;font-size:14px;line-height:17.500px;padding-top:17px"><i style="background:#c850ff"></i>Add<br>New<br>Bus</div>
<div class="vsep" style="left:1269px"></div>
<!-- Horizontal -->
<div class="badge" style="left:1281px;top:999px;width:198px;height:76px">
<div class="hd" style="height:19px"></div>
<span class="t" style="left:5px;top:2px;font-size:14.500px;color:#fff;letter-spacing:0.900px">Horizontal</span>
<span class="t" style="left:4px;top:20.500px;font-size:14px">40 µs/div</span><span class="t" style="left:110px;top:20.500px;font-size:14px">400 µs</span>
<span class="t" style="left:4px;top:40px;font-size:14px;letter-spacing:-0.350px">SR: 3.125 GS/s</span><span class="t" style="left:110px;top:40px;font-size:14px">320 ps/pt</span>
<span class="t" style="left:4px;top:58.500px;font-size:14px">RL: 1.25 Mpts</span><span class="t" style="left:126px;top:58.500px;font-size:14px">7%</span>
<svg class="abs" style="left:109px;top:57px" width="12" height="14" viewBox="0 0 12 14"><path d="M1.500 1.500H9.500V9H7.500L5.500 12L3.500 9H1.500z" fill="#111" stroke="#f08a1e" stroke-width="1.200"/><text x="5.500" y="8" font-family="Liberation Sans, sans-serif" font-size="7" font-weight="bold" fill="#fff" text-anchor="middle">T</text></svg>
</div>
<!-- Trigger -->
<div class="badge" style="left:1486px;top:999px;width:159px;height:76px">
<div class="hd" style="height:19px"></div>
<span class="t" style="left:5px;top:2px;font-size:14.500px;color:#fff;letter-spacing:0.700px">Trigger</span>
<span class="pill" style="left:4px;top:20px;width:30px;height:17px;background:#f4ec1e;border:1px solid #111;font-size:14px;line-height:15px;border-radius:6px">1</span>
<svg class="abs" style="left:42px;top:20px" width="22" height="16" viewBox="0 0 22 16"><path d="M2 3.500H6.500L14 13H18.500" fill="none" stroke="#26267a" stroke-width="1.200"/></svg>
<span class="t" style="left:71px;top:20.500px;font-size:14px">2.4 V</span>
</div>
<!-- Acquisition -->
<div class="badge" style="left:1651px;top:999px;width:148px;height:76px">
<div class="hd" style="height:19px"></div>
<span class="t" style="left:5px;top:2px;font-size:14.500px;color:#fff;letter-spacing:0.900px">Acquisition</span>
<span class="t" style="left:4px;top:20.500px;font-size:14px">Auto,</span><span class="t" style="left:85px;top:20.500px;font-size:14px">Analyze</span>
<span class="t" style="left:4px;top:40px;font-size:14px">Sample: 12 bits</span>
<span class="t" style="left:4px;top:58.500px;font-size:14px">Single: 1 /1</span>
</div>
<div class="vsep" style="left:1811px"></div>
<div class="abs" style="left:1823px;top:998px;width:89px;height:36px;border-radius:6px;background:#fa1e28;border:1px solid #c0343a;color:#fff;font-weight:bold;font-size:13.500px;line-height:34px;text-align:center">Stopped</div>
<div class="abs" style="left:1823px;top:1040px;width:89px;height:36px;border-radius:5px;background:#c8c8c8;color:#0a0a0a;font-size:14.500px;line-height:17px;text-align:center;padding-top:1px;white-space:nowrap">24 Apr 2023<br>12:35:30 AM</div>

</body>
</html>
